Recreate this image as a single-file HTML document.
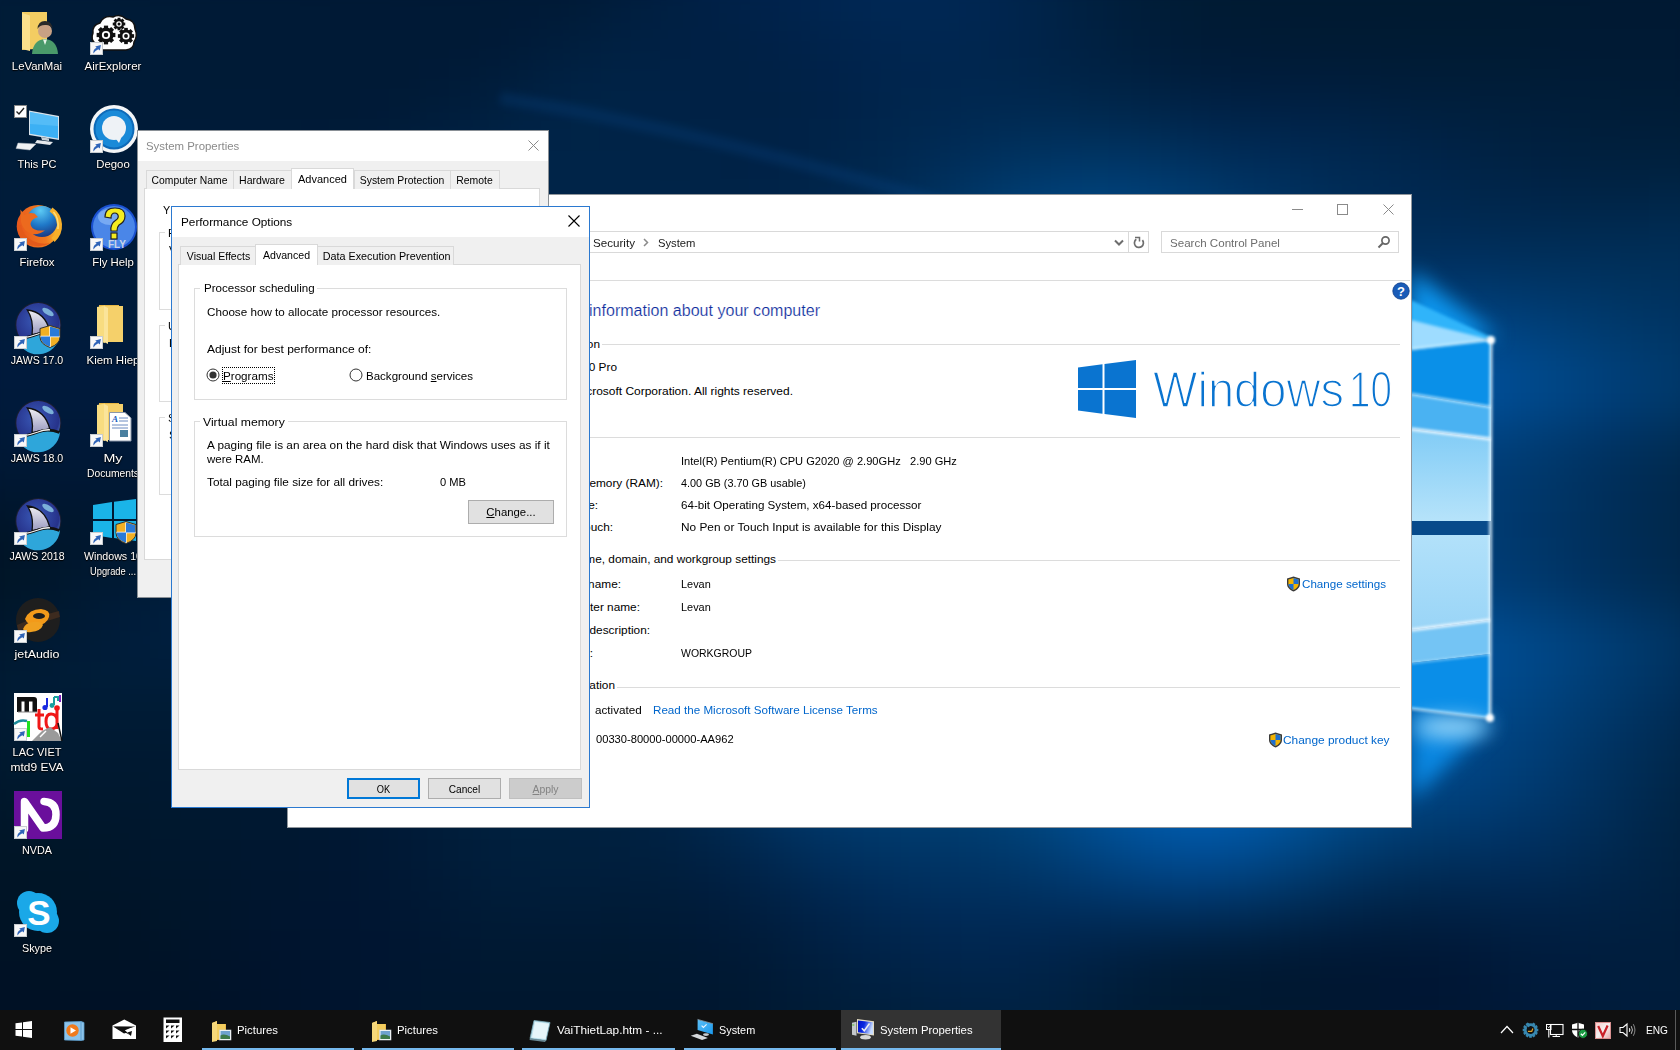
<!DOCTYPE html>
<html><head><meta charset="utf-8">
<style>
*{margin:0;padding:0;box-sizing:border-box}
html,body{width:1680px;height:1050px;overflow:hidden;background:#021a3a;font-family:"Liberation Sans",sans-serif;font-size:11.6px;color:#000}
.a{position:absolute}
.t{position:absolute;white-space:nowrap;line-height:1}
svg{position:absolute;overflow:visible}
#wall{left:0;top:0}
.lbl{position:absolute;white-space:nowrap;line-height:1;color:#fff;text-align:center;width:80px;text-shadow:0 0 2px #000,0 1px 2px #000}
</style></head>
<body>
<svg id="wall" width="1680" height="1050" viewBox="0 0 1680 1050" style="overflow:hidden">
<defs>
<filter id="wb" filterUnits="userSpaceOnUse" x="0" y="0" width="1680" height="1050"><feGaussianBlur stdDeviation="16" color-interpolation-filters="sRGB"/></filter>
<linearGradient id="pane1" x1="0" y1="0" x2="0" y2="1">
<stop offset="0" stop-color="#0a86e0"/>
<stop offset="0.3" stop-color="#0e8ee6"/>
<stop offset="0.31" stop-color="#48acf0"/>
<stop offset="0.5" stop-color="#5ab8f2"/>
<stop offset="0.51" stop-color="#8ccff6"/>
<stop offset="1" stop-color="#b2e0fa"/>
</linearGradient>
<linearGradient id="pane2" x1="0" y1="0" x2="0" y2="1">
<stop offset="0" stop-color="#aadcf8"/>
<stop offset="0.5" stop-color="#94d2f6"/>
<stop offset="0.51" stop-color="#70c2f4"/>
<stop offset="0.7" stop-color="#5ab6f0"/>
<stop offset="0.71" stop-color="#0c8ae6"/>
<stop offset="1" stop-color="#0a86e2"/>
</linearGradient>
<filter id="blur30" filterUnits="userSpaceOnUse" x="0" y="0" width="1680" height="1050"><feGaussianBlur stdDeviation="30" color-interpolation-filters="sRGB"/></filter>
<filter id="blur10" filterUnits="userSpaceOnUse" x="0" y="0" width="1680" height="1050"><feGaussianBlur stdDeviation="10" color-interpolation-filters="sRGB"/></filter>
<filter id="blur4" filterUnits="userSpaceOnUse" x="0" y="0" width="1680" height="1050"><feGaussianBlur stdDeviation="4" color-interpolation-filters="sRGB"/></filter>
<filter id="blur2" filterUnits="userSpaceOnUse" x="0" y="0" width="1680" height="1050"><feGaussianBlur stdDeviation="1.5" color-interpolation-filters="sRGB"/></filter>
</defs>
<g filter="url(#wb)"><rect x="-30" y="-30" width="31" height="31" fill="#001c37"/><rect x="0" y="-30" width="31" height="31" fill="#001b37"/><rect x="30" y="-30" width="31" height="31" fill="#001b37"/><rect x="60" y="-30" width="31" height="31" fill="#001b37"/><rect x="90" y="-30" width="31" height="31" fill="#001b37"/><rect x="120" y="-30" width="31" height="31" fill="#001b36"/><rect x="150" y="-30" width="31" height="31" fill="#001a36"/><rect x="180" y="-30" width="31" height="31" fill="#001a36"/><rect x="210" y="-30" width="31" height="31" fill="#001a36"/><rect x="240" y="-30" width="31" height="31" fill="#001a36"/><rect x="270" y="-30" width="31" height="31" fill="#001a36"/><rect x="300" y="-30" width="31" height="31" fill="#001935"/><rect x="330" y="-30" width="31" height="31" fill="#001935"/><rect x="360" y="-30" width="31" height="31" fill="#001935"/><rect x="390" y="-30" width="31" height="31" fill="#001935"/><rect x="420" y="-30" width="31" height="31" fill="#001935"/><rect x="450" y="-30" width="31" height="31" fill="#001936"/><rect x="480" y="-30" width="31" height="31" fill="#001a36"/><rect x="510" y="-30" width="31" height="31" fill="#001a36"/><rect x="540" y="-30" width="31" height="31" fill="#001a36"/><rect x="570" y="-30" width="31" height="31" fill="#001b38"/><rect x="600" y="-30" width="31" height="31" fill="#001c3a"/><rect x="630" y="-30" width="31" height="31" fill="#001d3e"/><rect x="660" y="-30" width="31" height="31" fill="#001f43"/><rect x="690" y="-30" width="31" height="31" fill="#002147"/><rect x="720" y="-30" width="31" height="31" fill="#00224a"/><rect x="750" y="-30" width="31" height="31" fill="#00244d"/><rect x="780" y="-30" width="31" height="31" fill="#002550"/><rect x="810" y="-30" width="31" height="31" fill="#002653"/><rect x="840" y="-30" width="31" height="31" fill="#002755"/><rect x="870" y="-30" width="31" height="31" fill="#002856"/><rect x="900" y="-30" width="31" height="31" fill="#002856"/><rect x="930" y="-30" width="31" height="31" fill="#002855"/><rect x="960" y="-30" width="31" height="31" fill="#002752"/><rect x="990" y="-30" width="31" height="31" fill="#00264f"/><rect x="1020" y="-30" width="31" height="31" fill="#00244a"/><rect x="1050" y="-30" width="31" height="31" fill="#002244"/><rect x="1080" y="-30" width="31" height="31" fill="#00203f"/><rect x="1110" y="-30" width="31" height="31" fill="#001e3b"/><rect x="1140" y="-30" width="31" height="31" fill="#001d37"/><rect x="1170" y="-30" width="31" height="31" fill="#001c35"/><rect x="1200" y="-30" width="31" height="31" fill="#001c33"/><rect x="1230" y="-30" width="31" height="31" fill="#001b32"/><rect x="1260" y="-30" width="31" height="31" fill="#001b32"/><rect x="1290" y="-30" width="31" height="31" fill="#001b31"/><rect x="1320" y="-30" width="31" height="31" fill="#001b31"/><rect x="1350" y="-30" width="31" height="31" fill="#001a31"/><rect x="1380" y="-30" width="31" height="31" fill="#001a30"/><rect x="1410" y="-30" width="31" height="31" fill="#001a30"/><rect x="1440" y="-30" width="31" height="31" fill="#001a30"/><rect x="1470" y="-30" width="31" height="31" fill="#001a31"/><rect x="1500" y="-30" width="31" height="31" fill="#001a31"/><rect x="1530" y="-30" width="31" height="31" fill="#001932"/><rect x="1560" y="-30" width="31" height="31" fill="#001932"/><rect x="1590" y="-30" width="31" height="31" fill="#001933"/><rect x="1620" y="-30" width="31" height="31" fill="#001933"/><rect x="1650" y="-30" width="31" height="31" fill="#001933"/><rect x="1680" y="-30" width="31" height="31" fill="#001933"/><rect x="-30" y="0" width="31" height="31" fill="#001c37"/><rect x="0" y="0" width="31" height="31" fill="#001c37"/><rect x="30" y="0" width="31" height="31" fill="#001b37"/><rect x="60" y="0" width="31" height="31" fill="#001b37"/><rect x="90" y="0" width="31" height="31" fill="#001b37"/><rect x="120" y="0" width="31" height="31" fill="#001b37"/><rect x="150" y="0" width="31" height="31" fill="#001b36"/><rect x="180" y="0" width="31" height="31" fill="#001a36"/><rect x="210" y="0" width="31" height="31" fill="#001a36"/><rect x="240" y="0" width="31" height="31" fill="#001a36"/><rect x="270" y="0" width="31" height="31" fill="#001a36"/><rect x="300" y="0" width="31" height="31" fill="#001a36"/><rect x="330" y="0" width="31" height="31" fill="#001935"/><rect x="360" y="0" width="31" height="31" fill="#001935"/><rect x="390" y="0" width="31" height="31" fill="#001936"/><rect x="420" y="0" width="31" height="31" fill="#001a36"/><rect x="450" y="0" width="31" height="31" fill="#001a36"/><rect x="480" y="0" width="31" height="31" fill="#001a36"/><rect x="510" y="0" width="31" height="31" fill="#001a37"/><rect x="540" y="0" width="31" height="31" fill="#001b38"/><rect x="570" y="0" width="31" height="31" fill="#001c3a"/><rect x="600" y="0" width="31" height="31" fill="#001e3e"/><rect x="630" y="0" width="31" height="31" fill="#001f41"/><rect x="660" y="0" width="31" height="31" fill="#002043"/><rect x="690" y="0" width="31" height="31" fill="#002045"/><rect x="720" y="0" width="31" height="31" fill="#002147"/><rect x="750" y="0" width="31" height="31" fill="#00224a"/><rect x="780" y="0" width="31" height="31" fill="#00234c"/><rect x="810" y="0" width="31" height="31" fill="#00254f"/><rect x="840" y="0" width="31" height="31" fill="#002651"/><rect x="870" y="0" width="31" height="31" fill="#002753"/><rect x="900" y="0" width="31" height="31" fill="#002753"/><rect x="930" y="0" width="31" height="31" fill="#002753"/><rect x="960" y="0" width="31" height="31" fill="#002651"/><rect x="990" y="0" width="31" height="31" fill="#00254e"/><rect x="1020" y="0" width="31" height="31" fill="#00244a"/><rect x="1050" y="0" width="31" height="31" fill="#002245"/><rect x="1080" y="0" width="31" height="31" fill="#002040"/><rect x="1110" y="0" width="31" height="31" fill="#001e3c"/><rect x="1140" y="0" width="31" height="31" fill="#001d39"/><rect x="1170" y="0" width="31" height="31" fill="#001c36"/><rect x="1200" y="0" width="31" height="31" fill="#001b34"/><rect x="1230" y="0" width="31" height="31" fill="#001b33"/><rect x="1260" y="0" width="31" height="31" fill="#001a33"/><rect x="1290" y="0" width="31" height="31" fill="#001a32"/><rect x="1320" y="0" width="31" height="31" fill="#001a32"/><rect x="1350" y="0" width="31" height="31" fill="#001a32"/><rect x="1380" y="0" width="31" height="31" fill="#001a31"/><rect x="1410" y="0" width="31" height="31" fill="#001a31"/><rect x="1440" y="0" width="31" height="31" fill="#001a31"/><rect x="1470" y="0" width="31" height="31" fill="#001a31"/><rect x="1500" y="0" width="31" height="31" fill="#001a32"/><rect x="1530" y="0" width="31" height="31" fill="#001a32"/><rect x="1560" y="0" width="31" height="31" fill="#001a33"/><rect x="1590" y="0" width="31" height="31" fill="#001933"/><rect x="1620" y="0" width="31" height="31" fill="#001933"/><rect x="1650" y="0" width="31" height="31" fill="#001933"/><rect x="1680" y="0" width="31" height="31" fill="#001933"/><rect x="-30" y="30" width="31" height="31" fill="#001c37"/><rect x="0" y="30" width="31" height="31" fill="#001c37"/><rect x="30" y="30" width="31" height="31" fill="#001b37"/><rect x="60" y="30" width="31" height="31" fill="#001b37"/><rect x="90" y="30" width="31" height="31" fill="#001b37"/><rect x="120" y="30" width="31" height="31" fill="#001b37"/><rect x="150" y="30" width="31" height="31" fill="#001b37"/><rect x="180" y="30" width="31" height="31" fill="#001b36"/><rect x="210" y="30" width="31" height="31" fill="#001a36"/><rect x="240" y="30" width="31" height="31" fill="#001a36"/><rect x="270" y="30" width="31" height="31" fill="#001a36"/><rect x="300" y="30" width="31" height="31" fill="#001a36"/><rect x="330" y="30" width="31" height="31" fill="#001a36"/><rect x="360" y="30" width="31" height="31" fill="#001a36"/><rect x="390" y="30" width="31" height="31" fill="#001a36"/><rect x="420" y="30" width="31" height="31" fill="#001a36"/><rect x="450" y="30" width="31" height="31" fill="#001a36"/><rect x="480" y="30" width="31" height="31" fill="#001a37"/><rect x="510" y="30" width="31" height="31" fill="#001b39"/><rect x="540" y="30" width="31" height="31" fill="#001d3c"/><rect x="570" y="30" width="31" height="31" fill="#001f3f"/><rect x="600" y="30" width="31" height="31" fill="#002042"/><rect x="630" y="30" width="31" height="31" fill="#002043"/><rect x="660" y="30" width="31" height="31" fill="#002044"/><rect x="690" y="30" width="31" height="31" fill="#002045"/><rect x="720" y="30" width="31" height="31" fill="#002145"/><rect x="750" y="30" width="31" height="31" fill="#002147"/><rect x="780" y="30" width="31" height="31" fill="#002249"/><rect x="810" y="30" width="31" height="31" fill="#00234b"/><rect x="840" y="30" width="31" height="31" fill="#00244e"/><rect x="870" y="30" width="31" height="31" fill="#00254f"/><rect x="900" y="30" width="31" height="31" fill="#002650"/><rect x="930" y="30" width="31" height="31" fill="#002650"/><rect x="960" y="30" width="31" height="31" fill="#00264f"/><rect x="990" y="30" width="31" height="31" fill="#00254d"/><rect x="1020" y="30" width="31" height="31" fill="#00244a"/><rect x="1050" y="30" width="31" height="31" fill="#002246"/><rect x="1080" y="30" width="31" height="31" fill="#002142"/><rect x="1110" y="30" width="31" height="31" fill="#001f3e"/><rect x="1140" y="30" width="31" height="31" fill="#001d3b"/><rect x="1170" y="30" width="31" height="31" fill="#001c38"/><rect x="1200" y="30" width="31" height="31" fill="#001b37"/><rect x="1230" y="30" width="31" height="31" fill="#001b36"/><rect x="1260" y="30" width="31" height="31" fill="#001b35"/><rect x="1290" y="30" width="31" height="31" fill="#001b35"/><rect x="1320" y="30" width="31" height="31" fill="#001b34"/><rect x="1350" y="30" width="31" height="31" fill="#001b34"/><rect x="1380" y="30" width="31" height="31" fill="#001b34"/><rect x="1410" y="30" width="31" height="31" fill="#001b33"/><rect x="1440" y="30" width="31" height="31" fill="#001b33"/><rect x="1470" y="30" width="31" height="31" fill="#001b33"/><rect x="1500" y="30" width="31" height="31" fill="#001b33"/><rect x="1530" y="30" width="31" height="31" fill="#001a33"/><rect x="1560" y="30" width="31" height="31" fill="#001a34"/><rect x="1590" y="30" width="31" height="31" fill="#001a34"/><rect x="1620" y="30" width="31" height="31" fill="#001a34"/><rect x="1650" y="30" width="31" height="31" fill="#001a34"/><rect x="1680" y="30" width="31" height="31" fill="#001934"/><rect x="-30" y="60" width="31" height="31" fill="#001c37"/><rect x="0" y="60" width="31" height="31" fill="#001c37"/><rect x="30" y="60" width="31" height="31" fill="#001c37"/><rect x="60" y="60" width="31" height="31" fill="#001b37"/><rect x="90" y="60" width="31" height="31" fill="#001b37"/><rect x="120" y="60" width="31" height="31" fill="#001b37"/><rect x="150" y="60" width="31" height="31" fill="#001b37"/><rect x="180" y="60" width="31" height="31" fill="#001b37"/><rect x="210" y="60" width="31" height="31" fill="#001b36"/><rect x="240" y="60" width="31" height="31" fill="#001a36"/><rect x="270" y="60" width="31" height="31" fill="#001a36"/><rect x="300" y="60" width="31" height="31" fill="#001a36"/><rect x="330" y="60" width="31" height="31" fill="#001a36"/><rect x="360" y="60" width="31" height="31" fill="#001a36"/><rect x="390" y="60" width="31" height="31" fill="#001a36"/><rect x="420" y="60" width="31" height="31" fill="#001a37"/><rect x="450" y="60" width="31" height="31" fill="#001b38"/><rect x="480" y="60" width="31" height="31" fill="#001c3a"/><rect x="510" y="60" width="31" height="31" fill="#001e3d"/><rect x="540" y="60" width="31" height="31" fill="#002041"/><rect x="570" y="60" width="31" height="31" fill="#002143"/><rect x="600" y="60" width="31" height="31" fill="#002245"/><rect x="630" y="60" width="31" height="31" fill="#002245"/><rect x="660" y="60" width="31" height="31" fill="#002145"/><rect x="690" y="60" width="31" height="31" fill="#002145"/><rect x="720" y="60" width="31" height="31" fill="#002145"/><rect x="750" y="60" width="31" height="31" fill="#002146"/><rect x="780" y="60" width="31" height="31" fill="#002247"/><rect x="810" y="60" width="31" height="31" fill="#002249"/><rect x="840" y="60" width="31" height="31" fill="#00234b"/><rect x="870" y="60" width="31" height="31" fill="#00254d"/><rect x="900" y="60" width="31" height="31" fill="#00254e"/><rect x="930" y="60" width="31" height="31" fill="#00264f"/><rect x="960" y="60" width="31" height="31" fill="#00264f"/><rect x="990" y="60" width="31" height="31" fill="#00264d"/><rect x="1020" y="60" width="31" height="31" fill="#00254b"/><rect x="1050" y="60" width="31" height="31" fill="#002448"/><rect x="1080" y="60" width="31" height="31" fill="#002245"/><rect x="1110" y="60" width="31" height="31" fill="#002142"/><rect x="1140" y="60" width="31" height="31" fill="#001f3f"/><rect x="1170" y="60" width="31" height="31" fill="#001e3d"/><rect x="1200" y="60" width="31" height="31" fill="#001d3c"/><rect x="1230" y="60" width="31" height="31" fill="#001c3b"/><rect x="1260" y="60" width="31" height="31" fill="#001c3b"/><rect x="1290" y="60" width="31" height="31" fill="#001c3a"/><rect x="1320" y="60" width="31" height="31" fill="#001c3a"/><rect x="1350" y="60" width="31" height="31" fill="#001c39"/><rect x="1380" y="60" width="31" height="31" fill="#001c38"/><rect x="1410" y="60" width="31" height="31" fill="#001c38"/><rect x="1440" y="60" width="31" height="31" fill="#001c37"/><rect x="1470" y="60" width="31" height="31" fill="#001c37"/><rect x="1500" y="60" width="31" height="31" fill="#001c36"/><rect x="1530" y="60" width="31" height="31" fill="#001c36"/><rect x="1560" y="60" width="31" height="31" fill="#001b36"/><rect x="1590" y="60" width="31" height="31" fill="#001b35"/><rect x="1620" y="60" width="31" height="31" fill="#001b35"/><rect x="1650" y="60" width="31" height="31" fill="#001b35"/><rect x="1680" y="60" width="31" height="31" fill="#001a35"/><rect x="-30" y="90" width="31" height="31" fill="#001c38"/><rect x="0" y="90" width="31" height="31" fill="#001c38"/><rect x="30" y="90" width="31" height="31" fill="#001c38"/><rect x="60" y="90" width="31" height="31" fill="#001c38"/><rect x="90" y="90" width="31" height="31" fill="#001b38"/><rect x="120" y="90" width="31" height="31" fill="#001b38"/><rect x="150" y="90" width="31" height="31" fill="#001b38"/><rect x="180" y="90" width="31" height="31" fill="#001b37"/><rect x="210" y="90" width="31" height="31" fill="#001b37"/><rect x="240" y="90" width="31" height="31" fill="#001b37"/><rect x="270" y="90" width="31" height="31" fill="#001a36"/><rect x="300" y="90" width="31" height="31" fill="#001a36"/><rect x="330" y="90" width="31" height="31" fill="#001a36"/><rect x="360" y="90" width="31" height="31" fill="#001a37"/><rect x="390" y="90" width="31" height="31" fill="#001b37"/><rect x="420" y="90" width="31" height="31" fill="#001c39"/><rect x="450" y="90" width="31" height="31" fill="#001d3c"/><rect x="480" y="90" width="31" height="31" fill="#001f3f"/><rect x="510" y="90" width="31" height="31" fill="#002143"/><rect x="540" y="90" width="31" height="31" fill="#002245"/><rect x="570" y="90" width="31" height="31" fill="#002346"/><rect x="600" y="90" width="31" height="31" fill="#002346"/><rect x="630" y="90" width="31" height="31" fill="#002246"/><rect x="660" y="90" width="31" height="31" fill="#002246"/><rect x="690" y="90" width="31" height="31" fill="#002145"/><rect x="720" y="90" width="31" height="31" fill="#002145"/><rect x="750" y="90" width="31" height="31" fill="#002145"/><rect x="780" y="90" width="31" height="31" fill="#002246"/><rect x="810" y="90" width="31" height="31" fill="#002248"/><rect x="840" y="90" width="31" height="31" fill="#00234a"/><rect x="870" y="90" width="31" height="31" fill="#00254c"/><rect x="900" y="90" width="31" height="31" fill="#00264e"/><rect x="930" y="90" width="31" height="31" fill="#00274f"/><rect x="960" y="90" width="31" height="31" fill="#002850"/><rect x="990" y="90" width="31" height="31" fill="#002850"/><rect x="1020" y="90" width="31" height="31" fill="#002850"/><rect x="1050" y="90" width="31" height="31" fill="#00284e"/><rect x="1080" y="90" width="31" height="31" fill="#00274c"/><rect x="1110" y="90" width="31" height="31" fill="#00264a"/><rect x="1140" y="90" width="31" height="31" fill="#002448"/><rect x="1170" y="90" width="31" height="31" fill="#002347"/><rect x="1200" y="90" width="31" height="31" fill="#002145"/><rect x="1230" y="90" width="31" height="31" fill="#002144"/><rect x="1260" y="90" width="31" height="31" fill="#002043"/><rect x="1290" y="90" width="31" height="31" fill="#002043"/><rect x="1320" y="90" width="31" height="31" fill="#002042"/><rect x="1350" y="90" width="31" height="31" fill="#002041"/><rect x="1380" y="90" width="31" height="31" fill="#001f3f"/><rect x="1410" y="90" width="31" height="31" fill="#001f3e"/><rect x="1440" y="90" width="31" height="31" fill="#001f3d"/><rect x="1470" y="90" width="31" height="31" fill="#001e3c"/><rect x="1500" y="90" width="31" height="31" fill="#001e3b"/><rect x="1530" y="90" width="31" height="31" fill="#001d3a"/><rect x="1560" y="90" width="31" height="31" fill="#001d39"/><rect x="1590" y="90" width="31" height="31" fill="#001d38"/><rect x="1620" y="90" width="31" height="31" fill="#001c37"/><rect x="1650" y="90" width="31" height="31" fill="#001c37"/><rect x="1680" y="90" width="31" height="31" fill="#001c36"/><rect x="-30" y="120" width="31" height="31" fill="#001c38"/><rect x="0" y="120" width="31" height="31" fill="#001c38"/><rect x="30" y="120" width="31" height="31" fill="#001c38"/><rect x="60" y="120" width="31" height="31" fill="#001c38"/><rect x="90" y="120" width="31" height="31" fill="#001b38"/><rect x="120" y="120" width="31" height="31" fill="#001b38"/><rect x="150" y="120" width="31" height="31" fill="#001b38"/><rect x="180" y="120" width="31" height="31" fill="#001b38"/><rect x="210" y="120" width="31" height="31" fill="#001b38"/><rect x="240" y="120" width="31" height="31" fill="#001b38"/><rect x="270" y="120" width="31" height="31" fill="#001b37"/><rect x="300" y="120" width="31" height="31" fill="#001a37"/><rect x="330" y="120" width="31" height="31" fill="#001b37"/><rect x="360" y="120" width="31" height="31" fill="#001b38"/><rect x="390" y="120" width="31" height="31" fill="#001c3b"/><rect x="420" y="120" width="31" height="31" fill="#001e3e"/><rect x="450" y="120" width="31" height="31" fill="#002041"/><rect x="480" y="120" width="31" height="31" fill="#002244"/><rect x="510" y="120" width="31" height="31" fill="#002346"/><rect x="540" y="120" width="31" height="31" fill="#002347"/><rect x="570" y="120" width="31" height="31" fill="#002447"/><rect x="600" y="120" width="31" height="31" fill="#002347"/><rect x="630" y="120" width="31" height="31" fill="#002347"/><rect x="660" y="120" width="31" height="31" fill="#002346"/><rect x="690" y="120" width="31" height="31" fill="#002246"/><rect x="720" y="120" width="31" height="31" fill="#002246"/><rect x="750" y="120" width="31" height="31" fill="#002246"/><rect x="780" y="120" width="31" height="31" fill="#002247"/><rect x="810" y="120" width="31" height="31" fill="#002348"/><rect x="840" y="120" width="31" height="31" fill="#00244a"/><rect x="870" y="120" width="31" height="31" fill="#00264d"/><rect x="900" y="120" width="31" height="31" fill="#002850"/><rect x="930" y="120" width="31" height="31" fill="#002952"/><rect x="960" y="120" width="31" height="31" fill="#002b55"/><rect x="990" y="120" width="31" height="31" fill="#002d57"/><rect x="1020" y="120" width="31" height="31" fill="#002e58"/><rect x="1050" y="120" width="31" height="31" fill="#002e59"/><rect x="1080" y="120" width="31" height="31" fill="#002e58"/><rect x="1110" y="120" width="31" height="31" fill="#002d57"/><rect x="1140" y="120" width="31" height="31" fill="#002c55"/><rect x="1170" y="120" width="31" height="31" fill="#002a53"/><rect x="1200" y="120" width="31" height="31" fill="#002851"/><rect x="1230" y="120" width="31" height="31" fill="#00274f"/><rect x="1260" y="120" width="31" height="31" fill="#00264e"/><rect x="1290" y="120" width="31" height="31" fill="#00254c"/><rect x="1320" y="120" width="31" height="31" fill="#00254b"/><rect x="1350" y="120" width="31" height="31" fill="#002449"/><rect x="1380" y="120" width="31" height="31" fill="#002347"/><rect x="1410" y="120" width="31" height="31" fill="#002245"/><rect x="1440" y="120" width="31" height="31" fill="#002143"/><rect x="1470" y="120" width="31" height="31" fill="#002141"/><rect x="1500" y="120" width="31" height="31" fill="#00203f"/><rect x="1530" y="120" width="31" height="31" fill="#001f3e"/><rect x="1560" y="120" width="31" height="31" fill="#001f3c"/><rect x="1590" y="120" width="31" height="31" fill="#001e3b"/><rect x="1620" y="120" width="31" height="31" fill="#001e3b"/><rect x="1650" y="120" width="31" height="31" fill="#001e3a"/><rect x="1680" y="120" width="31" height="31" fill="#001e3a"/><rect x="-30" y="150" width="31" height="31" fill="#001c39"/><rect x="0" y="150" width="31" height="31" fill="#001c39"/><rect x="30" y="150" width="31" height="31" fill="#001c39"/><rect x="60" y="150" width="31" height="31" fill="#001c39"/><rect x="90" y="150" width="31" height="31" fill="#001b39"/><rect x="120" y="150" width="31" height="31" fill="#001b39"/><rect x="150" y="150" width="31" height="31" fill="#001b39"/><rect x="180" y="150" width="31" height="31" fill="#001b39"/><rect x="210" y="150" width="31" height="31" fill="#001b39"/><rect x="240" y="150" width="31" height="31" fill="#001b39"/><rect x="270" y="150" width="31" height="31" fill="#001b38"/><rect x="300" y="150" width="31" height="31" fill="#001b39"/><rect x="330" y="150" width="31" height="31" fill="#001c39"/><rect x="360" y="150" width="31" height="31" fill="#001d3c"/><rect x="390" y="150" width="31" height="31" fill="#001f3f"/><rect x="420" y="150" width="31" height="31" fill="#002143"/><rect x="450" y="150" width="31" height="31" fill="#002345"/><rect x="480" y="150" width="31" height="31" fill="#002347"/><rect x="510" y="150" width="31" height="31" fill="#002448"/><rect x="540" y="150" width="31" height="31" fill="#002448"/><rect x="570" y="150" width="31" height="31" fill="#002448"/><rect x="600" y="150" width="31" height="31" fill="#002448"/><rect x="630" y="150" width="31" height="31" fill="#002347"/><rect x="660" y="150" width="31" height="31" fill="#002347"/><rect x="690" y="150" width="31" height="31" fill="#002347"/><rect x="720" y="150" width="31" height="31" fill="#002246"/><rect x="750" y="150" width="31" height="31" fill="#002247"/><rect x="780" y="150" width="31" height="31" fill="#002348"/><rect x="810" y="150" width="31" height="31" fill="#002449"/><rect x="840" y="150" width="31" height="31" fill="#00264c"/><rect x="870" y="150" width="31" height="31" fill="#00284f"/><rect x="900" y="150" width="31" height="31" fill="#002a54"/><rect x="930" y="150" width="31" height="31" fill="#002d58"/><rect x="960" y="150" width="31" height="31" fill="#00305d"/><rect x="990" y="150" width="31" height="31" fill="#003361"/><rect x="1020" y="150" width="31" height="31" fill="#003564"/><rect x="1050" y="150" width="31" height="31" fill="#003667"/><rect x="1080" y="150" width="31" height="31" fill="#003767"/><rect x="1110" y="150" width="31" height="31" fill="#003667"/><rect x="1140" y="150" width="31" height="31" fill="#003565"/><rect x="1170" y="150" width="31" height="31" fill="#003362"/><rect x="1200" y="150" width="31" height="31" fill="#00305e"/><rect x="1230" y="150" width="31" height="31" fill="#002e5b"/><rect x="1260" y="150" width="31" height="31" fill="#002c58"/><rect x="1290" y="150" width="31" height="31" fill="#002b55"/><rect x="1320" y="150" width="31" height="31" fill="#002953"/><rect x="1350" y="150" width="31" height="31" fill="#002850"/><rect x="1380" y="150" width="31" height="31" fill="#00274e"/><rect x="1410" y="150" width="31" height="31" fill="#00254b"/><rect x="1440" y="150" width="31" height="31" fill="#002449"/><rect x="1470" y="150" width="31" height="31" fill="#002346"/><rect x="1500" y="150" width="31" height="31" fill="#002244"/><rect x="1530" y="150" width="31" height="31" fill="#002142"/><rect x="1560" y="150" width="31" height="31" fill="#002141"/><rect x="1590" y="150" width="31" height="31" fill="#002140"/><rect x="1620" y="150" width="31" height="31" fill="#00213f"/><rect x="1650" y="150" width="31" height="31" fill="#00213f"/><rect x="1680" y="150" width="31" height="31" fill="#00213f"/><rect x="-30" y="180" width="31" height="31" fill="#001c3a"/><rect x="0" y="180" width="31" height="31" fill="#001c3a"/><rect x="30" y="180" width="31" height="31" fill="#001c3a"/><rect x="60" y="180" width="31" height="31" fill="#001b3a"/><rect x="90" y="180" width="31" height="31" fill="#001b3a"/><rect x="120" y="180" width="31" height="31" fill="#001b3a"/><rect x="150" y="180" width="31" height="31" fill="#001b3a"/><rect x="180" y="180" width="31" height="31" fill="#001b3a"/><rect x="210" y="180" width="31" height="31" fill="#001b3a"/><rect x="240" y="180" width="31" height="31" fill="#001b39"/><rect x="270" y="180" width="31" height="31" fill="#001b3a"/><rect x="300" y="180" width="31" height="31" fill="#001c3a"/><rect x="330" y="180" width="31" height="31" fill="#001d3c"/><rect x="360" y="180" width="31" height="31" fill="#001f3f"/><rect x="390" y="180" width="31" height="31" fill="#002143"/><rect x="420" y="180" width="31" height="31" fill="#002346"/><rect x="450" y="180" width="31" height="31" fill="#002447"/><rect x="480" y="180" width="31" height="31" fill="#002448"/><rect x="510" y="180" width="31" height="31" fill="#002448"/><rect x="540" y="180" width="31" height="31" fill="#002448"/><rect x="570" y="180" width="31" height="31" fill="#002448"/><rect x="600" y="180" width="31" height="31" fill="#002448"/><rect x="630" y="180" width="31" height="31" fill="#002448"/><rect x="660" y="180" width="31" height="31" fill="#002448"/><rect x="690" y="180" width="31" height="31" fill="#002347"/><rect x="720" y="180" width="31" height="31" fill="#002347"/><rect x="750" y="180" width="31" height="31" fill="#002348"/><rect x="780" y="180" width="31" height="31" fill="#002449"/><rect x="810" y="180" width="31" height="31" fill="#00254b"/><rect x="840" y="180" width="31" height="31" fill="#00274f"/><rect x="870" y="180" width="31" height="31" fill="#002a53"/><rect x="900" y="180" width="31" height="31" fill="#002e59"/><rect x="930" y="180" width="31" height="31" fill="#00325f"/><rect x="960" y="180" width="31" height="31" fill="#003666"/><rect x="990" y="180" width="31" height="31" fill="#003a6c"/><rect x="1020" y="180" width="31" height="31" fill="#003d72"/><rect x="1050" y="180" width="31" height="31" fill="#003f75"/><rect x="1080" y="180" width="31" height="31" fill="#004077"/><rect x="1110" y="180" width="31" height="31" fill="#003f76"/><rect x="1140" y="180" width="31" height="31" fill="#003d73"/><rect x="1170" y="180" width="31" height="31" fill="#003b6f"/><rect x="1200" y="180" width="31" height="31" fill="#00386a"/><rect x="1230" y="180" width="31" height="31" fill="#003465"/><rect x="1260" y="180" width="31" height="31" fill="#003260"/><rect x="1290" y="180" width="31" height="31" fill="#002f5c"/><rect x="1320" y="180" width="31" height="31" fill="#002d58"/><rect x="1350" y="180" width="31" height="31" fill="#002b55"/><rect x="1380" y="180" width="31" height="31" fill="#002952"/><rect x="1410" y="180" width="31" height="31" fill="#002850"/><rect x="1440" y="180" width="31" height="31" fill="#00274d"/><rect x="1470" y="180" width="31" height="31" fill="#00264b"/><rect x="1500" y="180" width="31" height="31" fill="#00254a"/><rect x="1530" y="180" width="31" height="31" fill="#002448"/><rect x="1560" y="180" width="31" height="31" fill="#002447"/><rect x="1590" y="180" width="31" height="31" fill="#002446"/><rect x="1620" y="180" width="31" height="31" fill="#002446"/><rect x="1650" y="180" width="31" height="31" fill="#002547"/><rect x="1680" y="180" width="31" height="31" fill="#002648"/><rect x="-30" y="210" width="31" height="31" fill="#001b3a"/><rect x="0" y="210" width="31" height="31" fill="#001b3a"/><rect x="30" y="210" width="31" height="31" fill="#001b3a"/><rect x="60" y="210" width="31" height="31" fill="#001b3a"/><rect x="90" y="210" width="31" height="31" fill="#001b3a"/><rect x="120" y="210" width="31" height="31" fill="#001b3a"/><rect x="150" y="210" width="31" height="31" fill="#001b3a"/><rect x="180" y="210" width="31" height="31" fill="#001b3a"/><rect x="210" y="210" width="31" height="31" fill="#001b3a"/><rect x="240" y="210" width="31" height="31" fill="#001c3a"/><rect x="270" y="210" width="31" height="31" fill="#001c3a"/><rect x="300" y="210" width="31" height="31" fill="#001c3b"/><rect x="330" y="210" width="31" height="31" fill="#001d3d"/><rect x="360" y="210" width="31" height="31" fill="#002041"/><rect x="390" y="210" width="31" height="31" fill="#002245"/><rect x="420" y="210" width="31" height="31" fill="#002447"/><rect x="450" y="210" width="31" height="31" fill="#002448"/><rect x="480" y="210" width="31" height="31" fill="#002448"/><rect x="510" y="210" width="31" height="31" fill="#002448"/><rect x="540" y="210" width="31" height="31" fill="#002448"/><rect x="570" y="210" width="31" height="31" fill="#002448"/><rect x="600" y="210" width="31" height="31" fill="#002448"/><rect x="630" y="210" width="31" height="31" fill="#002448"/><rect x="660" y="210" width="31" height="31" fill="#002448"/><rect x="690" y="210" width="31" height="31" fill="#002448"/><rect x="720" y="210" width="31" height="31" fill="#002448"/><rect x="750" y="210" width="31" height="31" fill="#002449"/><rect x="780" y="210" width="31" height="31" fill="#00254a"/><rect x="810" y="210" width="31" height="31" fill="#00274d"/><rect x="840" y="210" width="31" height="31" fill="#002952"/><rect x="870" y="210" width="31" height="31" fill="#002d58"/><rect x="900" y="210" width="31" height="31" fill="#003260"/><rect x="930" y="210" width="31" height="31" fill="#003768"/><rect x="960" y="210" width="31" height="31" fill="#003c70"/><rect x="990" y="210" width="31" height="31" fill="#004078"/><rect x="1020" y="210" width="31" height="31" fill="#00447e"/><rect x="1050" y="210" width="31" height="31" fill="#004783"/><rect x="1080" y="210" width="31" height="31" fill="#004884"/><rect x="1110" y="210" width="31" height="31" fill="#004783"/><rect x="1140" y="210" width="31" height="31" fill="#00457f"/><rect x="1170" y="210" width="31" height="31" fill="#00417a"/><rect x="1200" y="210" width="31" height="31" fill="#003d73"/><rect x="1230" y="210" width="31" height="31" fill="#00396c"/><rect x="1260" y="210" width="31" height="31" fill="#003565"/><rect x="1290" y="210" width="31" height="31" fill="#003260"/><rect x="1320" y="210" width="31" height="31" fill="#002f5c"/><rect x="1350" y="210" width="31" height="31" fill="#002d59"/><rect x="1380" y="210" width="31" height="31" fill="#002c57"/><rect x="1410" y="210" width="31" height="31" fill="#002b55"/><rect x="1440" y="210" width="31" height="31" fill="#002a54"/><rect x="1470" y="210" width="31" height="31" fill="#002a52"/><rect x="1500" y="210" width="31" height="31" fill="#002951"/><rect x="1530" y="210" width="31" height="31" fill="#002950"/><rect x="1560" y="210" width="31" height="31" fill="#00294f"/><rect x="1590" y="210" width="31" height="31" fill="#00294f"/><rect x="1620" y="210" width="31" height="31" fill="#00294f"/><rect x="1650" y="210" width="31" height="31" fill="#002a50"/><rect x="1680" y="210" width="31" height="31" fill="#002b51"/><rect x="-30" y="240" width="31" height="31" fill="#001b3a"/><rect x="0" y="240" width="31" height="31" fill="#001b3a"/><rect x="30" y="240" width="31" height="31" fill="#001b3a"/><rect x="60" y="240" width="31" height="31" fill="#001b3a"/><rect x="90" y="240" width="31" height="31" fill="#001b3a"/><rect x="120" y="240" width="31" height="31" fill="#001b3a"/><rect x="150" y="240" width="31" height="31" fill="#001b3a"/><rect x="180" y="240" width="31" height="31" fill="#001b3a"/><rect x="210" y="240" width="31" height="31" fill="#001b3a"/><rect x="240" y="240" width="31" height="31" fill="#001c3a"/><rect x="270" y="240" width="31" height="31" fill="#001c3a"/><rect x="300" y="240" width="31" height="31" fill="#001c3b"/><rect x="330" y="240" width="31" height="31" fill="#001d3d"/><rect x="360" y="240" width="31" height="31" fill="#002041"/><rect x="390" y="240" width="31" height="31" fill="#002346"/><rect x="420" y="240" width="31" height="31" fill="#002448"/><rect x="450" y="240" width="31" height="31" fill="#002448"/><rect x="480" y="240" width="31" height="31" fill="#002448"/><rect x="510" y="240" width="31" height="31" fill="#002449"/><rect x="540" y="240" width="31" height="31" fill="#002449"/><rect x="570" y="240" width="31" height="31" fill="#002448"/><rect x="600" y="240" width="31" height="31" fill="#002448"/><rect x="630" y="240" width="31" height="31" fill="#002448"/><rect x="660" y="240" width="31" height="31" fill="#002448"/><rect x="690" y="240" width="31" height="31" fill="#002448"/><rect x="720" y="240" width="31" height="31" fill="#002449"/><rect x="750" y="240" width="31" height="31" fill="#002549"/><rect x="780" y="240" width="31" height="31" fill="#00264c"/><rect x="810" y="240" width="31" height="31" fill="#002850"/><rect x="840" y="240" width="31" height="31" fill="#002c56"/><rect x="870" y="240" width="31" height="31" fill="#00315e"/><rect x="900" y="240" width="31" height="31" fill="#003667"/><rect x="930" y="240" width="31" height="31" fill="#003c71"/><rect x="960" y="240" width="31" height="31" fill="#00427a"/><rect x="990" y="240" width="31" height="31" fill="#004783"/><rect x="1020" y="240" width="31" height="31" fill="#004b89"/><rect x="1050" y="240" width="31" height="31" fill="#004d8e"/><rect x="1080" y="240" width="31" height="31" fill="#004e8f"/><rect x="1110" y="240" width="31" height="31" fill="#004d8d"/><rect x="1140" y="240" width="31" height="31" fill="#004a88"/><rect x="1170" y="240" width="31" height="31" fill="#004680"/><rect x="1200" y="240" width="31" height="31" fill="#004078"/><rect x="1230" y="240" width="31" height="31" fill="#003b6f"/><rect x="1260" y="240" width="31" height="31" fill="#003768"/><rect x="1290" y="240" width="31" height="31" fill="#003463"/><rect x="1320" y="240" width="31" height="31" fill="#003260"/><rect x="1350" y="240" width="31" height="31" fill="#00305f"/><rect x="1380" y="240" width="31" height="31" fill="#00305e"/><rect x="1410" y="240" width="31" height="31" fill="#00305e"/><rect x="1440" y="240" width="31" height="31" fill="#002f5d"/><rect x="1470" y="240" width="31" height="31" fill="#002f5d"/><rect x="1500" y="240" width="31" height="31" fill="#002f5b"/><rect x="1530" y="240" width="31" height="31" fill="#002f5a"/><rect x="1560" y="240" width="31" height="31" fill="#002e59"/><rect x="1590" y="240" width="31" height="31" fill="#002e58"/><rect x="1620" y="240" width="31" height="31" fill="#002e57"/><rect x="1650" y="240" width="31" height="31" fill="#002e57"/><rect x="1680" y="240" width="31" height="31" fill="#002e58"/><rect x="-30" y="270" width="31" height="31" fill="#001b3a"/><rect x="0" y="270" width="31" height="31" fill="#001b3a"/><rect x="30" y="270" width="31" height="31" fill="#001b3a"/><rect x="60" y="270" width="31" height="31" fill="#001b3a"/><rect x="90" y="270" width="31" height="31" fill="#001b3a"/><rect x="120" y="270" width="31" height="31" fill="#001b3a"/><rect x="150" y="270" width="31" height="31" fill="#001b3a"/><rect x="180" y="270" width="31" height="31" fill="#001b3a"/><rect x="210" y="270" width="31" height="31" fill="#001b3a"/><rect x="240" y="270" width="31" height="31" fill="#001c3a"/><rect x="270" y="270" width="31" height="31" fill="#001c3a"/><rect x="300" y="270" width="31" height="31" fill="#001c3b"/><rect x="330" y="270" width="31" height="31" fill="#001d3d"/><rect x="360" y="270" width="31" height="31" fill="#002041"/><rect x="390" y="270" width="31" height="31" fill="#002346"/><rect x="420" y="270" width="31" height="31" fill="#002448"/><rect x="450" y="270" width="31" height="31" fill="#002448"/><rect x="480" y="270" width="31" height="31" fill="#002449"/><rect x="510" y="270" width="31" height="31" fill="#002449"/><rect x="540" y="270" width="31" height="31" fill="#002449"/><rect x="570" y="270" width="31" height="31" fill="#002449"/><rect x="600" y="270" width="31" height="31" fill="#002448"/><rect x="630" y="270" width="31" height="31" fill="#002448"/><rect x="660" y="270" width="31" height="31" fill="#002448"/><rect x="690" y="270" width="31" height="31" fill="#002449"/><rect x="720" y="270" width="31" height="31" fill="#002449"/><rect x="750" y="270" width="31" height="31" fill="#00254a"/><rect x="780" y="270" width="31" height="31" fill="#00274d"/><rect x="810" y="270" width="31" height="31" fill="#002a52"/><rect x="840" y="270" width="31" height="31" fill="#002e5a"/><rect x="870" y="270" width="31" height="31" fill="#003464"/><rect x="900" y="270" width="31" height="31" fill="#003b6f"/><rect x="930" y="270" width="31" height="31" fill="#004179"/><rect x="960" y="270" width="31" height="31" fill="#004784"/><rect x="990" y="270" width="31" height="31" fill="#004c8c"/><rect x="1020" y="270" width="31" height="31" fill="#005092"/><rect x="1050" y="270" width="31" height="31" fill="#005296"/><rect x="1080" y="270" width="31" height="31" fill="#005297"/><rect x="1110" y="270" width="31" height="31" fill="#005194"/><rect x="1140" y="270" width="31" height="31" fill="#004d8d"/><rect x="1170" y="270" width="31" height="31" fill="#004884"/><rect x="1200" y="270" width="31" height="31" fill="#00427a"/><rect x="1230" y="270" width="31" height="31" fill="#003c72"/><rect x="1260" y="270" width="31" height="31" fill="#00396c"/><rect x="1290" y="270" width="31" height="31" fill="#00376a"/><rect x="1320" y="270" width="31" height="31" fill="#003669"/><rect x="1350" y="270" width="31" height="31" fill="#00366a"/><rect x="1380" y="270" width="31" height="31" fill="#00376b"/><rect x="1410" y="270" width="31" height="31" fill="#00376c"/><rect x="1440" y="270" width="31" height="31" fill="#00376c"/><rect x="1470" y="270" width="31" height="31" fill="#00376a"/><rect x="1500" y="270" width="31" height="31" fill="#003668"/><rect x="1530" y="270" width="31" height="31" fill="#003566"/><rect x="1560" y="270" width="31" height="31" fill="#003463"/><rect x="1590" y="270" width="31" height="31" fill="#003360"/><rect x="1620" y="270" width="31" height="31" fill="#00325e"/><rect x="1650" y="270" width="31" height="31" fill="#00315d"/><rect x="1680" y="270" width="31" height="31" fill="#00315c"/><rect x="-30" y="300" width="31" height="31" fill="#001b3a"/><rect x="0" y="300" width="31" height="31" fill="#001b3a"/><rect x="30" y="300" width="31" height="31" fill="#001b3a"/><rect x="60" y="300" width="31" height="31" fill="#001b3a"/><rect x="90" y="300" width="31" height="31" fill="#001b3a"/><rect x="120" y="300" width="31" height="31" fill="#001b3a"/><rect x="150" y="300" width="31" height="31" fill="#001b3a"/><rect x="180" y="300" width="31" height="31" fill="#001b3a"/><rect x="210" y="300" width="31" height="31" fill="#001b3a"/><rect x="240" y="300" width="31" height="31" fill="#001b3a"/><rect x="270" y="300" width="31" height="31" fill="#001b3b"/><rect x="300" y="300" width="31" height="31" fill="#001c3b"/><rect x="330" y="300" width="31" height="31" fill="#001d3d"/><rect x="360" y="300" width="31" height="31" fill="#001f41"/><rect x="390" y="300" width="31" height="31" fill="#002245"/><rect x="420" y="300" width="31" height="31" fill="#002448"/><rect x="450" y="300" width="31" height="31" fill="#002448"/><rect x="480" y="300" width="31" height="31" fill="#002449"/><rect x="510" y="300" width="31" height="31" fill="#002449"/><rect x="540" y="300" width="31" height="31" fill="#002449"/><rect x="570" y="300" width="31" height="31" fill="#002449"/><rect x="600" y="300" width="31" height="31" fill="#002449"/><rect x="630" y="300" width="31" height="31" fill="#002449"/><rect x="660" y="300" width="31" height="31" fill="#002449"/><rect x="690" y="300" width="31" height="31" fill="#002449"/><rect x="720" y="300" width="31" height="31" fill="#002549"/><rect x="750" y="300" width="31" height="31" fill="#00264b"/><rect x="780" y="300" width="31" height="31" fill="#00274e"/><rect x="810" y="300" width="31" height="31" fill="#002b55"/><rect x="840" y="300" width="31" height="31" fill="#00315e"/><rect x="870" y="300" width="31" height="31" fill="#00386a"/><rect x="900" y="300" width="31" height="31" fill="#003f76"/><rect x="930" y="300" width="31" height="31" fill="#004682"/><rect x="960" y="300" width="31" height="31" fill="#004c8c"/><rect x="990" y="300" width="31" height="31" fill="#005194"/><rect x="1020" y="300" width="31" height="31" fill="#00549a"/><rect x="1050" y="300" width="31" height="31" fill="#00569c"/><rect x="1080" y="300" width="31" height="31" fill="#00559b"/><rect x="1110" y="300" width="31" height="31" fill="#005397"/><rect x="1140" y="300" width="31" height="31" fill="#004e8f"/><rect x="1170" y="300" width="31" height="31" fill="#004885"/><rect x="1200" y="300" width="31" height="31" fill="#00427c"/><rect x="1230" y="300" width="31" height="31" fill="#003f77"/><rect x="1260" y="300" width="31" height="31" fill="#003d76"/><rect x="1290" y="300" width="31" height="31" fill="#003e77"/><rect x="1320" y="300" width="31" height="31" fill="#003f7a"/><rect x="1350" y="300" width="31" height="31" fill="#00407c"/><rect x="1380" y="300" width="31" height="31" fill="#00417e"/><rect x="1410" y="300" width="31" height="31" fill="#00417e"/><rect x="1440" y="300" width="31" height="31" fill="#00417d"/><rect x="1470" y="300" width="31" height="31" fill="#00407b"/><rect x="1500" y="300" width="31" height="31" fill="#003e77"/><rect x="1530" y="300" width="31" height="31" fill="#003c73"/><rect x="1560" y="300" width="31" height="31" fill="#003a6e"/><rect x="1590" y="300" width="31" height="31" fill="#00386a"/><rect x="1620" y="300" width="31" height="31" fill="#003666"/><rect x="1650" y="300" width="31" height="31" fill="#003463"/><rect x="1680" y="300" width="31" height="31" fill="#003361"/><rect x="-30" y="330" width="31" height="31" fill="#001b3c"/><rect x="0" y="330" width="31" height="31" fill="#001b3c"/><rect x="30" y="330" width="31" height="31" fill="#001b3c"/><rect x="60" y="330" width="31" height="31" fill="#001b3c"/><rect x="90" y="330" width="31" height="31" fill="#001b3c"/><rect x="120" y="330" width="31" height="31" fill="#001b3c"/><rect x="150" y="330" width="31" height="31" fill="#001b3c"/><rect x="180" y="330" width="31" height="31" fill="#001b3c"/><rect x="210" y="330" width="31" height="31" fill="#001b3c"/><rect x="240" y="330" width="31" height="31" fill="#001b3c"/><rect x="270" y="330" width="31" height="31" fill="#001b3c"/><rect x="300" y="330" width="31" height="31" fill="#001b3c"/><rect x="330" y="330" width="31" height="31" fill="#001b3d"/><rect x="360" y="330" width="31" height="31" fill="#001d3f"/><rect x="390" y="330" width="31" height="31" fill="#002043"/><rect x="420" y="330" width="31" height="31" fill="#002347"/><rect x="450" y="330" width="31" height="31" fill="#002448"/><rect x="480" y="330" width="31" height="31" fill="#002448"/><rect x="510" y="330" width="31" height="31" fill="#002449"/><rect x="540" y="330" width="31" height="31" fill="#002449"/><rect x="570" y="330" width="31" height="31" fill="#002449"/><rect x="600" y="330" width="31" height="31" fill="#002449"/><rect x="630" y="330" width="31" height="31" fill="#002449"/><rect x="660" y="330" width="31" height="31" fill="#002449"/><rect x="690" y="330" width="31" height="31" fill="#002449"/><rect x="720" y="330" width="31" height="31" fill="#00254a"/><rect x="750" y="330" width="31" height="31" fill="#00264b"/><rect x="780" y="330" width="31" height="31" fill="#00284f"/><rect x="810" y="330" width="31" height="31" fill="#002d57"/><rect x="840" y="330" width="31" height="31" fill="#003362"/><rect x="870" y="330" width="31" height="31" fill="#003c70"/><rect x="900" y="330" width="31" height="31" fill="#00447e"/><rect x="930" y="330" width="31" height="31" fill="#004b89"/><rect x="960" y="330" width="31" height="31" fill="#005093"/><rect x="990" y="330" width="31" height="31" fill="#00549a"/><rect x="1020" y="330" width="31" height="31" fill="#00579f"/><rect x="1050" y="330" width="31" height="31" fill="#0058a0"/><rect x="1080" y="330" width="31" height="31" fill="#00579e"/><rect x="1110" y="330" width="31" height="31" fill="#005399"/><rect x="1140" y="330" width="31" height="31" fill="#004e90"/><rect x="1170" y="330" width="31" height="31" fill="#004989"/><rect x="1200" y="330" width="31" height="31" fill="#004685"/><rect x="1230" y="330" width="31" height="31" fill="#004585"/><rect x="1260" y="330" width="31" height="31" fill="#004789"/><rect x="1290" y="330" width="31" height="31" fill="#00488d"/><rect x="1320" y="330" width="31" height="31" fill="#004a90"/><rect x="1350" y="330" width="31" height="31" fill="#004b92"/><rect x="1380" y="330" width="31" height="31" fill="#004c93"/><rect x="1410" y="330" width="31" height="31" fill="#004b92"/><rect x="1440" y="330" width="31" height="31" fill="#004a8f"/><rect x="1470" y="330" width="31" height="31" fill="#00488b"/><rect x="1500" y="330" width="31" height="31" fill="#004686"/><rect x="1530" y="330" width="31" height="31" fill="#004380"/><rect x="1560" y="330" width="31" height="31" fill="#004079"/><rect x="1590" y="330" width="31" height="31" fill="#003d73"/><rect x="1620" y="330" width="31" height="31" fill="#003a6e"/><rect x="1650" y="330" width="31" height="31" fill="#003869"/><rect x="1680" y="330" width="31" height="31" fill="#003666"/><rect x="-30" y="360" width="31" height="31" fill="#001a3c"/><rect x="0" y="360" width="31" height="31" fill="#001a3c"/><rect x="30" y="360" width="31" height="31" fill="#001a3c"/><rect x="60" y="360" width="31" height="31" fill="#001a3c"/><rect x="90" y="360" width="31" height="31" fill="#001a3c"/><rect x="120" y="360" width="31" height="31" fill="#001a3c"/><rect x="150" y="360" width="31" height="31" fill="#001a3c"/><rect x="180" y="360" width="31" height="31" fill="#001a3c"/><rect x="210" y="360" width="31" height="31" fill="#001a3c"/><rect x="240" y="360" width="31" height="31" fill="#001a3c"/><rect x="270" y="360" width="31" height="31" fill="#001a3c"/><rect x="300" y="360" width="31" height="31" fill="#001a3c"/><rect x="330" y="360" width="31" height="31" fill="#001a3c"/><rect x="360" y="360" width="31" height="31" fill="#001b3d"/><rect x="390" y="360" width="31" height="31" fill="#001c3e"/><rect x="420" y="360" width="31" height="31" fill="#001e41"/><rect x="450" y="360" width="31" height="31" fill="#002245"/><rect x="480" y="360" width="31" height="31" fill="#002448"/><rect x="510" y="360" width="31" height="31" fill="#002448"/><rect x="540" y="360" width="31" height="31" fill="#002449"/><rect x="570" y="360" width="31" height="31" fill="#002449"/><rect x="600" y="360" width="31" height="31" fill="#002449"/><rect x="630" y="360" width="31" height="31" fill="#002449"/><rect x="660" y="360" width="31" height="31" fill="#002449"/><rect x="690" y="360" width="31" height="31" fill="#002549"/><rect x="720" y="360" width="31" height="31" fill="#00254a"/><rect x="750" y="360" width="31" height="31" fill="#00264c"/><rect x="780" y="360" width="31" height="31" fill="#002950"/><rect x="810" y="360" width="31" height="31" fill="#002e59"/><rect x="840" y="360" width="31" height="31" fill="#003667"/><rect x="870" y="360" width="31" height="31" fill="#003f76"/><rect x="900" y="360" width="31" height="31" fill="#004885"/><rect x="930" y="360" width="31" height="31" fill="#004f90"/><rect x="960" y="360" width="31" height="31" fill="#005499"/><rect x="990" y="360" width="31" height="31" fill="#00579f"/><rect x="1020" y="360" width="31" height="31" fill="#0059a3"/><rect x="1050" y="360" width="31" height="31" fill="#0059a3"/><rect x="1080" y="360" width="31" height="31" fill="#0057a0"/><rect x="1110" y="360" width="31" height="31" fill="#00549b"/><rect x="1140" y="360" width="31" height="31" fill="#005096"/><rect x="1170" y="360" width="31" height="31" fill="#004e94"/><rect x="1200" y="360" width="31" height="31" fill="#004e97"/><rect x="1230" y="360" width="31" height="31" fill="#00509b"/><rect x="1260" y="360" width="31" height="31" fill="#0052a0"/><rect x="1290" y="360" width="31" height="31" fill="#0054a3"/><rect x="1320" y="360" width="31" height="31" fill="#0055a5"/><rect x="1350" y="360" width="31" height="31" fill="#0055a5"/><rect x="1380" y="360" width="31" height="31" fill="#0054a3"/><rect x="1410" y="360" width="31" height="31" fill="#0053a0"/><rect x="1440" y="360" width="31" height="31" fill="#00519c"/><rect x="1470" y="360" width="31" height="31" fill="#004e97"/><rect x="1500" y="360" width="31" height="31" fill="#004b90"/><rect x="1530" y="360" width="31" height="31" fill="#004889"/><rect x="1560" y="360" width="31" height="31" fill="#004482"/><rect x="1590" y="360" width="31" height="31" fill="#00407b"/><rect x="1620" y="360" width="31" height="31" fill="#003d74"/><rect x="1650" y="360" width="31" height="31" fill="#003a6e"/><rect x="1680" y="360" width="31" height="31" fill="#003869"/><rect x="-30" y="390" width="31" height="31" fill="#001a3b"/><rect x="0" y="390" width="31" height="31" fill="#001a3b"/><rect x="30" y="390" width="31" height="31" fill="#001a3b"/><rect x="60" y="390" width="31" height="31" fill="#001a3b"/><rect x="90" y="390" width="31" height="31" fill="#001a3b"/><rect x="120" y="390" width="31" height="31" fill="#001a3b"/><rect x="150" y="390" width="31" height="31" fill="#001a3b"/><rect x="180" y="390" width="31" height="31" fill="#001a3b"/><rect x="210" y="390" width="31" height="31" fill="#001a3b"/><rect x="240" y="390" width="31" height="31" fill="#001a3c"/><rect x="270" y="390" width="31" height="31" fill="#001a3c"/><rect x="300" y="390" width="31" height="31" fill="#001a3c"/><rect x="330" y="390" width="31" height="31" fill="#001a3c"/><rect x="360" y="390" width="31" height="31" fill="#001a3c"/><rect x="390" y="390" width="31" height="31" fill="#001b3d"/><rect x="420" y="390" width="31" height="31" fill="#001b3e"/><rect x="450" y="390" width="31" height="31" fill="#001c3f"/><rect x="480" y="390" width="31" height="31" fill="#001f42"/><rect x="510" y="390" width="31" height="31" fill="#002246"/><rect x="540" y="390" width="31" height="31" fill="#002448"/><rect x="570" y="390" width="31" height="31" fill="#002448"/><rect x="600" y="390" width="31" height="31" fill="#002449"/><rect x="630" y="390" width="31" height="31" fill="#002449"/><rect x="660" y="390" width="31" height="31" fill="#002449"/><rect x="690" y="390" width="31" height="31" fill="#002549"/><rect x="720" y="390" width="31" height="31" fill="#00254a"/><rect x="750" y="390" width="31" height="31" fill="#00264c"/><rect x="780" y="390" width="31" height="31" fill="#002951"/><rect x="810" y="390" width="31" height="31" fill="#002f5c"/><rect x="840" y="390" width="31" height="31" fill="#00396b"/><rect x="870" y="390" width="31" height="31" fill="#00437c"/><rect x="900" y="390" width="31" height="31" fill="#004c8b"/><rect x="930" y="390" width="31" height="31" fill="#005296"/><rect x="960" y="390" width="31" height="31" fill="#00579e"/><rect x="990" y="390" width="31" height="31" fill="#005aa3"/><rect x="1020" y="390" width="31" height="31" fill="#005ba6"/><rect x="1050" y="390" width="31" height="31" fill="#005aa5"/><rect x="1080" y="390" width="31" height="31" fill="#0058a3"/><rect x="1110" y="390" width="31" height="31" fill="#0056a2"/><rect x="1140" y="390" width="31" height="31" fill="#0055a3"/><rect x="1170" y="390" width="31" height="31" fill="#0056a6"/><rect x="1200" y="390" width="31" height="31" fill="#0057a9"/><rect x="1230" y="390" width="31" height="31" fill="#0058ab"/><rect x="1260" y="390" width="31" height="31" fill="#0058ac"/><rect x="1290" y="390" width="31" height="31" fill="#0058ac"/><rect x="1320" y="390" width="31" height="31" fill="#0058aa"/><rect x="1350" y="390" width="31" height="31" fill="#0056a8"/><rect x="1380" y="390" width="31" height="31" fill="#0055a4"/><rect x="1410" y="390" width="31" height="31" fill="#0052a0"/><rect x="1440" y="390" width="31" height="31" fill="#00509a"/><rect x="1470" y="390" width="31" height="31" fill="#004d94"/><rect x="1500" y="390" width="31" height="31" fill="#00498d"/><rect x="1530" y="390" width="31" height="31" fill="#004686"/><rect x="1560" y="390" width="31" height="31" fill="#00427f"/><rect x="1590" y="390" width="31" height="31" fill="#003e78"/><rect x="1620" y="390" width="31" height="31" fill="#003b71"/><rect x="1650" y="390" width="31" height="31" fill="#00386a"/><rect x="1680" y="390" width="31" height="31" fill="#003564"/><rect x="-30" y="420" width="31" height="31" fill="#001938"/><rect x="0" y="420" width="31" height="31" fill="#001939"/><rect x="30" y="420" width="31" height="31" fill="#001939"/><rect x="60" y="420" width="31" height="31" fill="#001939"/><rect x="90" y="420" width="31" height="31" fill="#001939"/><rect x="120" y="420" width="31" height="31" fill="#001939"/><rect x="150" y="420" width="31" height="31" fill="#00193a"/><rect x="180" y="420" width="31" height="31" fill="#001a3a"/><rect x="210" y="420" width="31" height="31" fill="#001a3a"/><rect x="240" y="420" width="31" height="31" fill="#001a3b"/><rect x="270" y="420" width="31" height="31" fill="#001a3b"/><rect x="300" y="420" width="31" height="31" fill="#001a3c"/><rect x="330" y="420" width="31" height="31" fill="#001a3c"/><rect x="360" y="420" width="31" height="31" fill="#001b3d"/><rect x="390" y="420" width="31" height="31" fill="#001b3d"/><rect x="420" y="420" width="31" height="31" fill="#001b3e"/><rect x="450" y="420" width="31" height="31" fill="#001c3f"/><rect x="480" y="420" width="31" height="31" fill="#001c40"/><rect x="510" y="420" width="31" height="31" fill="#001e42"/><rect x="540" y="420" width="31" height="31" fill="#002045"/><rect x="570" y="420" width="31" height="31" fill="#002347"/><rect x="600" y="420" width="31" height="31" fill="#002448"/><rect x="630" y="420" width="31" height="31" fill="#002449"/><rect x="660" y="420" width="31" height="31" fill="#002449"/><rect x="690" y="420" width="31" height="31" fill="#002549"/><rect x="720" y="420" width="31" height="31" fill="#00254a"/><rect x="750" y="420" width="31" height="31" fill="#00274c"/><rect x="780" y="420" width="31" height="31" fill="#002a52"/><rect x="810" y="420" width="31" height="31" fill="#00315e"/><rect x="840" y="420" width="31" height="31" fill="#003b6f"/><rect x="870" y="420" width="31" height="31" fill="#004682"/><rect x="900" y="420" width="31" height="31" fill="#004f91"/><rect x="930" y="420" width="31" height="31" fill="#00559c"/><rect x="960" y="420" width="31" height="31" fill="#0059a3"/><rect x="990" y="420" width="31" height="31" fill="#005ba7"/><rect x="1020" y="420" width="31" height="31" fill="#005ba9"/><rect x="1050" y="420" width="31" height="31" fill="#005aa9"/><rect x="1080" y="420" width="31" height="31" fill="#0058a9"/><rect x="1110" y="420" width="31" height="31" fill="#0057a9"/><rect x="1140" y="420" width="31" height="31" fill="#0057a9"/><rect x="1170" y="420" width="31" height="31" fill="#0057a9"/><rect x="1200" y="420" width="31" height="31" fill="#0056a8"/><rect x="1230" y="420" width="31" height="31" fill="#0055a6"/><rect x="1260" y="420" width="31" height="31" fill="#0054a4"/><rect x="1290" y="420" width="31" height="31" fill="#0053a1"/><rect x="1320" y="420" width="31" height="31" fill="#00519e"/><rect x="1350" y="420" width="31" height="31" fill="#004f9a"/><rect x="1380" y="420" width="31" height="31" fill="#004d95"/><rect x="1410" y="420" width="31" height="31" fill="#004a90"/><rect x="1440" y="420" width="31" height="31" fill="#00478a"/><rect x="1470" y="420" width="31" height="31" fill="#004484"/><rect x="1500" y="420" width="31" height="31" fill="#00417d"/><rect x="1530" y="420" width="31" height="31" fill="#003d76"/><rect x="1560" y="420" width="31" height="31" fill="#003a70"/><rect x="1590" y="420" width="31" height="31" fill="#003669"/><rect x="1620" y="420" width="31" height="31" fill="#003362"/><rect x="1650" y="420" width="31" height="31" fill="#00305c"/><rect x="1680" y="420" width="31" height="31" fill="#002d56"/><rect x="-30" y="450" width="31" height="31" fill="#001835"/><rect x="0" y="450" width="31" height="31" fill="#001835"/><rect x="30" y="450" width="31" height="31" fill="#001835"/><rect x="60" y="450" width="31" height="31" fill="#001836"/><rect x="90" y="450" width="31" height="31" fill="#001836"/><rect x="120" y="450" width="31" height="31" fill="#001937"/><rect x="150" y="450" width="31" height="31" fill="#001937"/><rect x="180" y="450" width="31" height="31" fill="#001938"/><rect x="210" y="450" width="31" height="31" fill="#001a39"/><rect x="240" y="450" width="31" height="31" fill="#001a3a"/><rect x="270" y="450" width="31" height="31" fill="#001a3b"/><rect x="300" y="450" width="31" height="31" fill="#001b3c"/><rect x="330" y="450" width="31" height="31" fill="#001b3d"/><rect x="360" y="450" width="31" height="31" fill="#001c3e"/><rect x="390" y="450" width="31" height="31" fill="#001c3f"/><rect x="420" y="450" width="31" height="31" fill="#001d41"/><rect x="450" y="450" width="31" height="31" fill="#001d42"/><rect x="480" y="450" width="31" height="31" fill="#001e44"/><rect x="510" y="450" width="31" height="31" fill="#001f45"/><rect x="540" y="450" width="31" height="31" fill="#002047"/><rect x="570" y="450" width="31" height="31" fill="#002149"/><rect x="600" y="450" width="31" height="31" fill="#00224a"/><rect x="630" y="450" width="31" height="31" fill="#00244a"/><rect x="660" y="450" width="31" height="31" fill="#002449"/><rect x="690" y="450" width="31" height="31" fill="#002549"/><rect x="720" y="450" width="31" height="31" fill="#00254a"/><rect x="750" y="450" width="31" height="31" fill="#00274d"/><rect x="780" y="450" width="31" height="31" fill="#002b53"/><rect x="810" y="450" width="31" height="31" fill="#003260"/><rect x="840" y="450" width="31" height="31" fill="#003e74"/><rect x="870" y="450" width="31" height="31" fill="#004987"/><rect x="900" y="450" width="31" height="31" fill="#005297"/><rect x="930" y="450" width="31" height="31" fill="#0058a1"/><rect x="960" y="450" width="31" height="31" fill="#005aa7"/><rect x="990" y="450" width="31" height="31" fill="#005aa9"/><rect x="1020" y="450" width="31" height="31" fill="#0058a9"/><rect x="1050" y="450" width="31" height="31" fill="#0056a8"/><rect x="1080" y="450" width="31" height="31" fill="#0055a7"/><rect x="1110" y="450" width="31" height="31" fill="#0055a5"/><rect x="1140" y="450" width="31" height="31" fill="#0054a4"/><rect x="1170" y="450" width="31" height="31" fill="#0053a2"/><rect x="1200" y="450" width="31" height="31" fill="#0052a0"/><rect x="1230" y="450" width="31" height="31" fill="#00509d"/><rect x="1260" y="450" width="31" height="31" fill="#004f9a"/><rect x="1290" y="450" width="31" height="31" fill="#004d97"/><rect x="1320" y="450" width="31" height="31" fill="#004b93"/><rect x="1350" y="450" width="31" height="31" fill="#00498e"/><rect x="1380" y="450" width="31" height="31" fill="#004789"/><rect x="1410" y="450" width="31" height="31" fill="#004484"/><rect x="1440" y="450" width="31" height="31" fill="#00417e"/><rect x="1470" y="450" width="31" height="31" fill="#003e78"/><rect x="1500" y="450" width="31" height="31" fill="#003b72"/><rect x="1530" y="450" width="31" height="31" fill="#00386c"/><rect x="1560" y="450" width="31" height="31" fill="#003465"/><rect x="1590" y="450" width="31" height="31" fill="#00315f"/><rect x="1620" y="450" width="31" height="31" fill="#002e58"/><rect x="1650" y="450" width="31" height="31" fill="#002b52"/><rect x="1680" y="450" width="31" height="31" fill="#00284c"/><rect x="-30" y="480" width="31" height="31" fill="#00162f"/><rect x="0" y="480" width="31" height="31" fill="#001730"/><rect x="30" y="480" width="31" height="31" fill="#001731"/><rect x="60" y="480" width="31" height="31" fill="#001732"/><rect x="90" y="480" width="31" height="31" fill="#001833"/><rect x="120" y="480" width="31" height="31" fill="#001834"/><rect x="150" y="480" width="31" height="31" fill="#001935"/><rect x="180" y="480" width="31" height="31" fill="#001937"/><rect x="210" y="480" width="31" height="31" fill="#001a38"/><rect x="240" y="480" width="31" height="31" fill="#001b3a"/><rect x="270" y="480" width="31" height="31" fill="#001b3b"/><rect x="300" y="480" width="31" height="31" fill="#001c3d"/><rect x="330" y="480" width="31" height="31" fill="#001d3f"/><rect x="360" y="480" width="31" height="31" fill="#001e41"/><rect x="390" y="480" width="31" height="31" fill="#001e43"/><rect x="420" y="480" width="31" height="31" fill="#001f45"/><rect x="450" y="480" width="31" height="31" fill="#002047"/><rect x="480" y="480" width="31" height="31" fill="#00214a"/><rect x="510" y="480" width="31" height="31" fill="#00224c"/><rect x="540" y="480" width="31" height="31" fill="#00234e"/><rect x="570" y="480" width="31" height="31" fill="#002450"/><rect x="600" y="480" width="31" height="31" fill="#002552"/><rect x="630" y="480" width="31" height="31" fill="#002553"/><rect x="660" y="480" width="31" height="31" fill="#002653"/><rect x="690" y="480" width="31" height="31" fill="#002750"/><rect x="720" y="480" width="31" height="31" fill="#002850"/><rect x="750" y="480" width="31" height="31" fill="#002b54"/><rect x="780" y="480" width="31" height="31" fill="#00305d"/><rect x="810" y="480" width="31" height="31" fill="#00396b"/><rect x="840" y="480" width="31" height="31" fill="#00437c"/><rect x="870" y="480" width="31" height="31" fill="#004c8d"/><rect x="900" y="480" width="31" height="31" fill="#00549b"/><rect x="930" y="480" width="31" height="31" fill="#0057a4"/><rect x="960" y="480" width="31" height="31" fill="#0057a7"/><rect x="990" y="480" width="31" height="31" fill="#0056a7"/><rect x="1020" y="480" width="31" height="31" fill="#0055a6"/><rect x="1050" y="480" width="31" height="31" fill="#0054a5"/><rect x="1080" y="480" width="31" height="31" fill="#0054a4"/><rect x="1110" y="480" width="31" height="31" fill="#0053a2"/><rect x="1140" y="480" width="31" height="31" fill="#0052a1"/><rect x="1170" y="480" width="31" height="31" fill="#00519e"/><rect x="1200" y="480" width="31" height="31" fill="#00509c"/><rect x="1230" y="480" width="31" height="31" fill="#004e99"/><rect x="1260" y="480" width="31" height="31" fill="#004d96"/><rect x="1290" y="480" width="31" height="31" fill="#004b93"/><rect x="1320" y="480" width="31" height="31" fill="#00498f"/><rect x="1350" y="480" width="31" height="31" fill="#00478a"/><rect x="1380" y="480" width="31" height="31" fill="#004485"/><rect x="1410" y="480" width="31" height="31" fill="#004280"/><rect x="1440" y="480" width="31" height="31" fill="#003f7a"/><rect x="1470" y="480" width="31" height="31" fill="#003c75"/><rect x="1500" y="480" width="31" height="31" fill="#00396e"/><rect x="1530" y="480" width="31" height="31" fill="#003668"/><rect x="1560" y="480" width="31" height="31" fill="#003362"/><rect x="1590" y="480" width="31" height="31" fill="#002f5b"/><rect x="1620" y="480" width="31" height="31" fill="#002c55"/><rect x="1650" y="480" width="31" height="31" fill="#00294f"/><rect x="1680" y="480" width="31" height="31" fill="#002649"/><rect x="-30" y="510" width="31" height="31" fill="#001529"/><rect x="0" y="510" width="31" height="31" fill="#00152b"/><rect x="30" y="510" width="31" height="31" fill="#00162d"/><rect x="60" y="510" width="31" height="31" fill="#00172e"/><rect x="90" y="510" width="31" height="31" fill="#001830"/><rect x="120" y="510" width="31" height="31" fill="#001832"/><rect x="150" y="510" width="31" height="31" fill="#001935"/><rect x="180" y="510" width="31" height="31" fill="#001a37"/><rect x="210" y="510" width="31" height="31" fill="#001b39"/><rect x="240" y="510" width="31" height="31" fill="#001c3c"/><rect x="270" y="510" width="31" height="31" fill="#001d3e"/><rect x="300" y="510" width="31" height="31" fill="#001e41"/><rect x="330" y="510" width="31" height="31" fill="#001f43"/><rect x="360" y="510" width="31" height="31" fill="#002046"/><rect x="390" y="510" width="31" height="31" fill="#002148"/><rect x="420" y="510" width="31" height="31" fill="#00224b"/><rect x="450" y="510" width="31" height="31" fill="#00234d"/><rect x="480" y="510" width="31" height="31" fill="#002450"/><rect x="510" y="510" width="31" height="31" fill="#002552"/><rect x="540" y="510" width="31" height="31" fill="#002654"/><rect x="570" y="510" width="31" height="31" fill="#002756"/><rect x="600" y="510" width="31" height="31" fill="#002758"/><rect x="630" y="510" width="31" height="31" fill="#002859"/><rect x="660" y="510" width="31" height="31" fill="#002a5b"/><rect x="690" y="510" width="31" height="31" fill="#003062"/><rect x="720" y="510" width="31" height="31" fill="#003c72"/><rect x="750" y="510" width="31" height="31" fill="#004580"/><rect x="780" y="510" width="31" height="31" fill="#004987"/><rect x="810" y="510" width="31" height="31" fill="#004c8a"/><rect x="840" y="510" width="31" height="31" fill="#004d8b"/><rect x="870" y="510" width="31" height="31" fill="#004e8c"/><rect x="900" y="510" width="31" height="31" fill="#00508e"/><rect x="930" y="510" width="31" height="31" fill="#005395"/><rect x="960" y="510" width="31" height="31" fill="#00569f"/><rect x="990" y="510" width="31" height="31" fill="#0056a5"/><rect x="1020" y="510" width="31" height="31" fill="#0055a6"/><rect x="1050" y="510" width="31" height="31" fill="#0054a5"/><rect x="1080" y="510" width="31" height="31" fill="#0053a3"/><rect x="1110" y="510" width="31" height="31" fill="#0053a2"/><rect x="1140" y="510" width="31" height="31" fill="#0052a0"/><rect x="1170" y="510" width="31" height="31" fill="#00509d"/><rect x="1200" y="510" width="31" height="31" fill="#004f9b"/><rect x="1230" y="510" width="31" height="31" fill="#004e98"/><rect x="1260" y="510" width="31" height="31" fill="#004c95"/><rect x="1290" y="510" width="31" height="31" fill="#004a91"/><rect x="1320" y="510" width="31" height="31" fill="#00498e"/><rect x="1350" y="510" width="31" height="31" fill="#004689"/><rect x="1380" y="510" width="31" height="31" fill="#004484"/><rect x="1410" y="510" width="31" height="31" fill="#00417f"/><rect x="1440" y="510" width="31" height="31" fill="#003e79"/><rect x="1470" y="510" width="31" height="31" fill="#003c74"/><rect x="1500" y="510" width="31" height="31" fill="#00386d"/><rect x="1530" y="510" width="31" height="31" fill="#003567"/><rect x="1560" y="510" width="31" height="31" fill="#003261"/><rect x="1590" y="510" width="31" height="31" fill="#002f5a"/><rect x="1620" y="510" width="31" height="31" fill="#002c54"/><rect x="1650" y="510" width="31" height="31" fill="#00294e"/><rect x="1680" y="510" width="31" height="31" fill="#002649"/><rect x="-30" y="540" width="31" height="31" fill="#001426"/><rect x="0" y="540" width="31" height="31" fill="#001528"/><rect x="30" y="540" width="31" height="31" fill="#00162b"/><rect x="60" y="540" width="31" height="31" fill="#00172e"/><rect x="90" y="540" width="31" height="31" fill="#001830"/><rect x="120" y="540" width="31" height="31" fill="#001933"/><rect x="150" y="540" width="31" height="31" fill="#001a36"/><rect x="180" y="540" width="31" height="31" fill="#001c39"/><rect x="210" y="540" width="31" height="31" fill="#001d3c"/><rect x="240" y="540" width="31" height="31" fill="#001e3f"/><rect x="270" y="540" width="31" height="31" fill="#001f42"/><rect x="300" y="540" width="31" height="31" fill="#002045"/><rect x="330" y="540" width="31" height="31" fill="#002148"/><rect x="360" y="540" width="31" height="31" fill="#00224a"/><rect x="390" y="540" width="31" height="31" fill="#00234d"/><rect x="420" y="540" width="31" height="31" fill="#00244f"/><rect x="450" y="540" width="31" height="31" fill="#002551"/><rect x="480" y="540" width="31" height="31" fill="#002653"/><rect x="510" y="540" width="31" height="31" fill="#002755"/><rect x="540" y="540" width="31" height="31" fill="#002757"/><rect x="570" y="540" width="31" height="31" fill="#002857"/><rect x="600" y="540" width="31" height="31" fill="#002857"/><rect x="630" y="540" width="31" height="31" fill="#002856"/><rect x="660" y="540" width="31" height="31" fill="#002c59"/><rect x="690" y="540" width="31" height="31" fill="#003666"/><rect x="720" y="540" width="31" height="31" fill="#003f76"/><rect x="750" y="540" width="31" height="31" fill="#004682"/><rect x="780" y="540" width="31" height="31" fill="#004a88"/><rect x="810" y="540" width="31" height="31" fill="#004c8b"/><rect x="840" y="540" width="31" height="31" fill="#004d8b"/><rect x="870" y="540" width="31" height="31" fill="#004e8b"/><rect x="900" y="540" width="31" height="31" fill="#004f8a"/><rect x="930" y="540" width="31" height="31" fill="#00528c"/><rect x="960" y="540" width="31" height="31" fill="#005592"/><rect x="990" y="540" width="31" height="31" fill="#00599c"/><rect x="1020" y="540" width="31" height="31" fill="#005aa5"/><rect x="1050" y="540" width="31" height="31" fill="#0059a8"/><rect x="1080" y="540" width="31" height="31" fill="#0056a7"/><rect x="1110" y="540" width="31" height="31" fill="#0054a4"/><rect x="1140" y="540" width="31" height="31" fill="#0052a1"/><rect x="1170" y="540" width="31" height="31" fill="#00519e"/><rect x="1200" y="540" width="31" height="31" fill="#00509c"/><rect x="1230" y="540" width="31" height="31" fill="#004e99"/><rect x="1260" y="540" width="31" height="31" fill="#004d96"/><rect x="1290" y="540" width="31" height="31" fill="#004b92"/><rect x="1320" y="540" width="31" height="31" fill="#00498e"/><rect x="1350" y="540" width="31" height="31" fill="#00478a"/><rect x="1380" y="540" width="31" height="31" fill="#004485"/><rect x="1410" y="540" width="31" height="31" fill="#004280"/><rect x="1440" y="540" width="31" height="31" fill="#003f7a"/><rect x="1470" y="540" width="31" height="31" fill="#003c74"/><rect x="1500" y="540" width="31" height="31" fill="#00396e"/><rect x="1530" y="540" width="31" height="31" fill="#003668"/><rect x="1560" y="540" width="31" height="31" fill="#003261"/><rect x="1590" y="540" width="31" height="31" fill="#002f5b"/><rect x="1620" y="540" width="31" height="31" fill="#002c55"/><rect x="1650" y="540" width="31" height="31" fill="#00294f"/><rect x="1680" y="540" width="31" height="31" fill="#002649"/><rect x="-30" y="570" width="31" height="31" fill="#001526"/><rect x="0" y="570" width="31" height="31" fill="#001629"/><rect x="30" y="570" width="31" height="31" fill="#00172c"/><rect x="60" y="570" width="31" height="31" fill="#001830"/><rect x="90" y="570" width="31" height="31" fill="#001a33"/><rect x="120" y="570" width="31" height="31" fill="#001b36"/><rect x="150" y="570" width="31" height="31" fill="#001c39"/><rect x="180" y="570" width="31" height="31" fill="#001d3d"/><rect x="210" y="570" width="31" height="31" fill="#001f40"/><rect x="240" y="570" width="31" height="31" fill="#002043"/><rect x="270" y="570" width="31" height="31" fill="#002145"/><rect x="300" y="570" width="31" height="31" fill="#002248"/><rect x="330" y="570" width="31" height="31" fill="#00234a"/><rect x="360" y="570" width="31" height="31" fill="#00234c"/><rect x="390" y="570" width="31" height="31" fill="#00244e"/><rect x="420" y="570" width="31" height="31" fill="#002550"/><rect x="450" y="570" width="31" height="31" fill="#002551"/><rect x="480" y="570" width="31" height="31" fill="#002652"/><rect x="510" y="570" width="31" height="31" fill="#002653"/><rect x="540" y="570" width="31" height="31" fill="#002652"/><rect x="570" y="570" width="31" height="31" fill="#002650"/><rect x="600" y="570" width="31" height="31" fill="#00254d"/><rect x="630" y="570" width="31" height="31" fill="#00274e"/><rect x="660" y="570" width="31" height="31" fill="#002d56"/><rect x="690" y="570" width="31" height="31" fill="#003665"/><rect x="720" y="570" width="31" height="31" fill="#003f75"/><rect x="750" y="570" width="31" height="31" fill="#004681"/><rect x="780" y="570" width="31" height="31" fill="#004a88"/><rect x="810" y="570" width="31" height="31" fill="#004c8a"/><rect x="840" y="570" width="31" height="31" fill="#004d8a"/><rect x="870" y="570" width="31" height="31" fill="#004e8a"/><rect x="900" y="570" width="31" height="31" fill="#004f89"/><rect x="930" y="570" width="31" height="31" fill="#00518a"/><rect x="960" y="570" width="31" height="31" fill="#00548e"/><rect x="990" y="570" width="31" height="31" fill="#005997"/><rect x="1020" y="570" width="31" height="31" fill="#005ea2"/><rect x="1050" y="570" width="31" height="31" fill="#0062ae"/><rect x="1080" y="570" width="31" height="31" fill="#0063b5"/><rect x="1110" y="570" width="31" height="31" fill="#0060b4"/><rect x="1140" y="570" width="31" height="31" fill="#005bae"/><rect x="1170" y="570" width="31" height="31" fill="#0057a8"/><rect x="1200" y="570" width="31" height="31" fill="#0054a2"/><rect x="1230" y="570" width="31" height="31" fill="#00519e"/><rect x="1260" y="570" width="31" height="31" fill="#004f9a"/><rect x="1290" y="570" width="31" height="31" fill="#004d96"/><rect x="1320" y="570" width="31" height="31" fill="#004b92"/><rect x="1350" y="570" width="31" height="31" fill="#00498e"/><rect x="1380" y="570" width="31" height="31" fill="#004789"/><rect x="1410" y="570" width="31" height="31" fill="#004484"/><rect x="1440" y="570" width="31" height="31" fill="#00417e"/><rect x="1470" y="570" width="31" height="31" fill="#003e78"/><rect x="1500" y="570" width="31" height="31" fill="#003b72"/><rect x="1530" y="570" width="31" height="31" fill="#00386c"/><rect x="1560" y="570" width="31" height="31" fill="#003465"/><rect x="1590" y="570" width="31" height="31" fill="#00315e"/><rect x="1620" y="570" width="31" height="31" fill="#002e58"/><rect x="1650" y="570" width="31" height="31" fill="#002b52"/><rect x="1680" y="570" width="31" height="31" fill="#00284c"/><rect x="-30" y="600" width="31" height="31" fill="#001629"/><rect x="0" y="600" width="31" height="31" fill="#00172d"/><rect x="30" y="600" width="31" height="31" fill="#001930"/><rect x="60" y="600" width="31" height="31" fill="#001a33"/><rect x="90" y="600" width="31" height="31" fill="#001b37"/><rect x="120" y="600" width="31" height="31" fill="#001c3a"/><rect x="150" y="600" width="31" height="31" fill="#001e3d"/><rect x="180" y="600" width="31" height="31" fill="#001f3f"/><rect x="210" y="600" width="31" height="31" fill="#002042"/><rect x="240" y="600" width="31" height="31" fill="#002044"/><rect x="270" y="600" width="31" height="31" fill="#002146"/><rect x="300" y="600" width="31" height="31" fill="#002248"/><rect x="330" y="600" width="31" height="31" fill="#002249"/><rect x="360" y="600" width="31" height="31" fill="#00234a"/><rect x="390" y="600" width="31" height="31" fill="#00234b"/><rect x="420" y="600" width="31" height="31" fill="#00234b"/><rect x="450" y="600" width="31" height="31" fill="#00234b"/><rect x="480" y="600" width="31" height="31" fill="#00234b"/><rect x="510" y="600" width="31" height="31" fill="#00234a"/><rect x="540" y="600" width="31" height="31" fill="#002347"/><rect x="570" y="600" width="31" height="31" fill="#002345"/><rect x="600" y="600" width="31" height="31" fill="#002446"/><rect x="630" y="600" width="31" height="31" fill="#00274b"/><rect x="660" y="600" width="31" height="31" fill="#002d55"/><rect x="690" y="600" width="31" height="31" fill="#003564"/><rect x="720" y="600" width="31" height="31" fill="#003e73"/><rect x="750" y="600" width="31" height="31" fill="#00457f"/><rect x="780" y="600" width="31" height="31" fill="#004986"/><rect x="810" y="600" width="31" height="31" fill="#004b89"/><rect x="840" y="600" width="31" height="31" fill="#004c89"/><rect x="870" y="600" width="31" height="31" fill="#004d89"/><rect x="900" y="600" width="31" height="31" fill="#004e88"/><rect x="930" y="600" width="31" height="31" fill="#005089"/><rect x="960" y="600" width="31" height="31" fill="#00538c"/><rect x="990" y="600" width="31" height="31" fill="#005794"/><rect x="1020" y="600" width="31" height="31" fill="#005d9f"/><rect x="1050" y="600" width="31" height="31" fill="#0063ad"/><rect x="1080" y="600" width="31" height="31" fill="#0067b9"/><rect x="1110" y="600" width="31" height="31" fill="#006ac2"/><rect x="1140" y="600" width="31" height="31" fill="#0069c5"/><rect x="1170" y="600" width="31" height="31" fill="#0066c0"/><rect x="1200" y="600" width="31" height="31" fill="#0061b8"/><rect x="1230" y="600" width="31" height="31" fill="#005cb0"/><rect x="1260" y="600" width="31" height="31" fill="#0059aa"/><rect x="1290" y="600" width="31" height="31" fill="#0056a5"/><rect x="1320" y="600" width="31" height="31" fill="#0054a0"/><rect x="1350" y="600" width="31" height="31" fill="#00529c"/><rect x="1380" y="600" width="31" height="31" fill="#004f98"/><rect x="1410" y="600" width="31" height="31" fill="#004d93"/><rect x="1440" y="600" width="31" height="31" fill="#004a8d"/><rect x="1470" y="600" width="31" height="31" fill="#004787"/><rect x="1500" y="600" width="31" height="31" fill="#004380"/><rect x="1530" y="600" width="31" height="31" fill="#00407a"/><rect x="1560" y="600" width="31" height="31" fill="#003c72"/><rect x="1590" y="600" width="31" height="31" fill="#00386b"/><rect x="1620" y="600" width="31" height="31" fill="#003464"/><rect x="1650" y="600" width="31" height="31" fill="#00315d"/><rect x="1680" y="600" width="31" height="31" fill="#002d56"/><rect x="-30" y="630" width="31" height="31" fill="#00182e"/><rect x="0" y="630" width="31" height="31" fill="#001931"/><rect x="30" y="630" width="31" height="31" fill="#001a34"/><rect x="60" y="630" width="31" height="31" fill="#001b36"/><rect x="90" y="630" width="31" height="31" fill="#001c39"/><rect x="120" y="630" width="31" height="31" fill="#001d3b"/><rect x="150" y="630" width="31" height="31" fill="#001e3d"/><rect x="180" y="630" width="31" height="31" fill="#001f3f"/><rect x="210" y="630" width="31" height="31" fill="#001f40"/><rect x="240" y="630" width="31" height="31" fill="#002041"/><rect x="270" y="630" width="31" height="31" fill="#002042"/><rect x="300" y="630" width="31" height="31" fill="#002043"/><rect x="330" y="630" width="31" height="31" fill="#002043"/><rect x="360" y="630" width="31" height="31" fill="#002043"/><rect x="390" y="630" width="31" height="31" fill="#002043"/><rect x="420" y="630" width="31" height="31" fill="#002042"/><rect x="450" y="630" width="31" height="31" fill="#002042"/><rect x="480" y="630" width="31" height="31" fill="#002041"/><rect x="510" y="630" width="31" height="31" fill="#002040"/><rect x="540" y="630" width="31" height="31" fill="#002140"/><rect x="570" y="630" width="31" height="31" fill="#002241"/><rect x="600" y="630" width="31" height="31" fill="#002344"/><rect x="630" y="630" width="31" height="31" fill="#00274a"/><rect x="660" y="630" width="31" height="31" fill="#002c53"/><rect x="690" y="630" width="31" height="31" fill="#003461"/><rect x="720" y="630" width="31" height="31" fill="#003c71"/><rect x="750" y="630" width="31" height="31" fill="#00437d"/><rect x="780" y="630" width="31" height="31" fill="#004884"/><rect x="810" y="630" width="31" height="31" fill="#004a87"/><rect x="840" y="630" width="31" height="31" fill="#004b88"/><rect x="870" y="630" width="31" height="31" fill="#004c87"/><rect x="900" y="630" width="31" height="31" fill="#004d86"/><rect x="930" y="630" width="31" height="31" fill="#004e87"/><rect x="960" y="630" width="31" height="31" fill="#00518a"/><rect x="990" y="630" width="31" height="31" fill="#005691"/><rect x="1020" y="630" width="31" height="31" fill="#005b9c"/><rect x="1050" y="630" width="31" height="31" fill="#0061a9"/><rect x="1080" y="630" width="31" height="31" fill="#0066b7"/><rect x="1110" y="630" width="31" height="31" fill="#006ac2"/><rect x="1140" y="630" width="31" height="31" fill="#006cc9"/><rect x="1170" y="630" width="31" height="31" fill="#006cca"/><rect x="1200" y="630" width="31" height="31" fill="#0069c5"/><rect x="1230" y="630" width="31" height="31" fill="#0064bd"/><rect x="1260" y="630" width="31" height="31" fill="#0060b5"/><rect x="1290" y="630" width="31" height="31" fill="#005daf"/><rect x="1320" y="630" width="31" height="31" fill="#005aaa"/><rect x="1350" y="630" width="31" height="31" fill="#0058a6"/><rect x="1380" y="630" width="31" height="31" fill="#0056a2"/><rect x="1410" y="630" width="31" height="31" fill="#00539e"/><rect x="1440" y="630" width="31" height="31" fill="#005199"/><rect x="1470" y="630" width="31" height="31" fill="#004d93"/><rect x="1500" y="630" width="31" height="31" fill="#004a8c"/><rect x="1530" y="630" width="31" height="31" fill="#004685"/><rect x="1560" y="630" width="31" height="31" fill="#00427e"/><rect x="1590" y="630" width="31" height="31" fill="#003e76"/><rect x="1620" y="630" width="31" height="31" fill="#003a6e"/><rect x="1650" y="630" width="31" height="31" fill="#003565"/><rect x="1680" y="630" width="31" height="31" fill="#00315d"/><rect x="-30" y="660" width="31" height="31" fill="#001a31"/><rect x="0" y="660" width="31" height="31" fill="#001b34"/><rect x="30" y="660" width="31" height="31" fill="#001b36"/><rect x="60" y="660" width="31" height="31" fill="#001c37"/><rect x="90" y="660" width="31" height="31" fill="#001d39"/><rect x="120" y="660" width="31" height="31" fill="#001d3a"/><rect x="150" y="660" width="31" height="31" fill="#001d3a"/><rect x="180" y="660" width="31" height="31" fill="#001d3b"/><rect x="210" y="660" width="31" height="31" fill="#001e3b"/><rect x="240" y="660" width="31" height="31" fill="#001e3c"/><rect x="270" y="660" width="31" height="31" fill="#001e3c"/><rect x="300" y="660" width="31" height="31" fill="#001e3b"/><rect x="330" y="660" width="31" height="31" fill="#001e3b"/><rect x="360" y="660" width="31" height="31" fill="#001d3b"/><rect x="390" y="660" width="31" height="31" fill="#001d3b"/><rect x="420" y="660" width="31" height="31" fill="#001e3b"/><rect x="450" y="660" width="31" height="31" fill="#001e3b"/><rect x="480" y="660" width="31" height="31" fill="#001f3c"/><rect x="510" y="660" width="31" height="31" fill="#00203e"/><rect x="540" y="660" width="31" height="31" fill="#00213f"/><rect x="570" y="660" width="31" height="31" fill="#002241"/><rect x="600" y="660" width="31" height="31" fill="#002344"/><rect x="630" y="660" width="31" height="31" fill="#002649"/><rect x="660" y="660" width="31" height="31" fill="#002b52"/><rect x="690" y="660" width="31" height="31" fill="#00325f"/><rect x="720" y="660" width="31" height="31" fill="#003a6e"/><rect x="750" y="660" width="31" height="31" fill="#00417a"/><rect x="780" y="660" width="31" height="31" fill="#004682"/><rect x="810" y="660" width="31" height="31" fill="#004985"/><rect x="840" y="660" width="31" height="31" fill="#004a86"/><rect x="870" y="660" width="31" height="31" fill="#004a85"/><rect x="900" y="660" width="31" height="31" fill="#004b84"/><rect x="930" y="660" width="31" height="31" fill="#004d84"/><rect x="960" y="660" width="31" height="31" fill="#004f87"/><rect x="990" y="660" width="31" height="31" fill="#00538e"/><rect x="1020" y="660" width="31" height="31" fill="#005999"/><rect x="1050" y="660" width="31" height="31" fill="#005ea6"/><rect x="1080" y="660" width="31" height="31" fill="#0064b3"/><rect x="1110" y="660" width="31" height="31" fill="#0069bf"/><rect x="1140" y="660" width="31" height="31" fill="#006cc7"/><rect x="1170" y="660" width="31" height="31" fill="#006dcb"/><rect x="1200" y="660" width="31" height="31" fill="#006bc8"/><rect x="1230" y="660" width="31" height="31" fill="#0067c1"/><rect x="1260" y="660" width="31" height="31" fill="#0062b8"/><rect x="1290" y="660" width="31" height="31" fill="#005eb0"/><rect x="1320" y="660" width="31" height="31" fill="#005aa9"/><rect x="1350" y="660" width="31" height="31" fill="#0057a5"/><rect x="1380" y="660" width="31" height="31" fill="#0055a1"/><rect x="1410" y="660" width="31" height="31" fill="#00529c"/><rect x="1440" y="660" width="31" height="31" fill="#005097"/><rect x="1470" y="660" width="31" height="31" fill="#004c91"/><rect x="1500" y="660" width="31" height="31" fill="#00498b"/><rect x="1530" y="660" width="31" height="31" fill="#004583"/><rect x="1560" y="660" width="31" height="31" fill="#00417b"/><rect x="1590" y="660" width="31" height="31" fill="#003c73"/><rect x="1620" y="660" width="31" height="31" fill="#00386a"/><rect x="1650" y="660" width="31" height="31" fill="#003362"/><rect x="1680" y="660" width="31" height="31" fill="#002e59"/><rect x="-30" y="690" width="31" height="31" fill="#001a33"/><rect x="0" y="690" width="31" height="31" fill="#001b34"/><rect x="30" y="690" width="31" height="31" fill="#001b35"/><rect x="60" y="690" width="31" height="31" fill="#001b35"/><rect x="90" y="690" width="31" height="31" fill="#001c36"/><rect x="120" y="690" width="31" height="31" fill="#001c36"/><rect x="150" y="690" width="31" height="31" fill="#001c36"/><rect x="180" y="690" width="31" height="31" fill="#001c36"/><rect x="210" y="690" width="31" height="31" fill="#001c36"/><rect x="240" y="690" width="31" height="31" fill="#001c36"/><rect x="270" y="690" width="31" height="31" fill="#001c36"/><rect x="300" y="690" width="31" height="31" fill="#001c36"/><rect x="330" y="690" width="31" height="31" fill="#001b36"/><rect x="360" y="690" width="31" height="31" fill="#001c36"/><rect x="390" y="690" width="31" height="31" fill="#001c37"/><rect x="420" y="690" width="31" height="31" fill="#001d38"/><rect x="450" y="690" width="31" height="31" fill="#001e3a"/><rect x="480" y="690" width="31" height="31" fill="#001f3d"/><rect x="510" y="690" width="31" height="31" fill="#00203e"/><rect x="540" y="690" width="31" height="31" fill="#002140"/><rect x="570" y="690" width="31" height="31" fill="#002241"/><rect x="600" y="690" width="31" height="31" fill="#002343"/><rect x="630" y="690" width="31" height="31" fill="#002548"/><rect x="660" y="690" width="31" height="31" fill="#002a50"/><rect x="690" y="690" width="31" height="31" fill="#00305c"/><rect x="720" y="690" width="31" height="31" fill="#00386a"/><rect x="750" y="690" width="31" height="31" fill="#003f76"/><rect x="780" y="690" width="31" height="31" fill="#00447e"/><rect x="810" y="690" width="31" height="31" fill="#004782"/><rect x="840" y="690" width="31" height="31" fill="#004883"/><rect x="870" y="690" width="31" height="31" fill="#004983"/><rect x="900" y="690" width="31" height="31" fill="#004982"/><rect x="930" y="690" width="31" height="31" fill="#004b82"/><rect x="960" y="690" width="31" height="31" fill="#004d84"/><rect x="990" y="690" width="31" height="31" fill="#00518b"/><rect x="1020" y="690" width="31" height="31" fill="#005695"/><rect x="1050" y="690" width="31" height="31" fill="#005ca1"/><rect x="1080" y="690" width="31" height="31" fill="#0061af"/><rect x="1110" y="690" width="31" height="31" fill="#0066bb"/><rect x="1140" y="690" width="31" height="31" fill="#006ac4"/><rect x="1170" y="690" width="31" height="31" fill="#006cc9"/><rect x="1200" y="690" width="31" height="31" fill="#006bc8"/><rect x="1230" y="690" width="31" height="31" fill="#0068c2"/><rect x="1260" y="690" width="31" height="31" fill="#0063b9"/><rect x="1290" y="690" width="31" height="31" fill="#005eaf"/><rect x="1320" y="690" width="31" height="31" fill="#0059a7"/><rect x="1350" y="690" width="31" height="31" fill="#0055a1"/><rect x="1380" y="690" width="31" height="31" fill="#00529c"/><rect x="1410" y="690" width="31" height="31" fill="#005097"/><rect x="1440" y="690" width="31" height="31" fill="#004d92"/><rect x="1470" y="690" width="31" height="31" fill="#00498c"/><rect x="1500" y="690" width="31" height="31" fill="#004685"/><rect x="1530" y="690" width="31" height="31" fill="#00427d"/><rect x="1560" y="690" width="31" height="31" fill="#003d75"/><rect x="1590" y="690" width="31" height="31" fill="#00396c"/><rect x="1620" y="690" width="31" height="31" fill="#003464"/><rect x="1650" y="690" width="31" height="31" fill="#002f5b"/><rect x="1680" y="690" width="31" height="31" fill="#002b53"/><rect x="-30" y="720" width="31" height="31" fill="#001a32"/><rect x="0" y="720" width="31" height="31" fill="#001a32"/><rect x="30" y="720" width="31" height="31" fill="#001a33"/><rect x="60" y="720" width="31" height="31" fill="#001a33"/><rect x="90" y="720" width="31" height="31" fill="#001a33"/><rect x="120" y="720" width="31" height="31" fill="#001a33"/><rect x="150" y="720" width="31" height="31" fill="#001a33"/><rect x="180" y="720" width="31" height="31" fill="#001a33"/><rect x="210" y="720" width="31" height="31" fill="#001a33"/><rect x="240" y="720" width="31" height="31" fill="#001a33"/><rect x="270" y="720" width="31" height="31" fill="#001a33"/><rect x="300" y="720" width="31" height="31" fill="#001a34"/><rect x="330" y="720" width="31" height="31" fill="#001a34"/><rect x="360" y="720" width="31" height="31" fill="#001b35"/><rect x="390" y="720" width="31" height="31" fill="#001c36"/><rect x="420" y="720" width="31" height="31" fill="#001d39"/><rect x="450" y="720" width="31" height="31" fill="#001f3c"/><rect x="480" y="720" width="31" height="31" fill="#00203e"/><rect x="510" y="720" width="31" height="31" fill="#00213f"/><rect x="540" y="720" width="31" height="31" fill="#002140"/><rect x="570" y="720" width="31" height="31" fill="#002241"/><rect x="600" y="720" width="31" height="31" fill="#002343"/><rect x="630" y="720" width="31" height="31" fill="#002547"/><rect x="660" y="720" width="31" height="31" fill="#00294e"/><rect x="690" y="720" width="31" height="31" fill="#002e59"/><rect x="720" y="720" width="31" height="31" fill="#003666"/><rect x="750" y="720" width="31" height="31" fill="#003c71"/><rect x="780" y="720" width="31" height="31" fill="#00417a"/><rect x="810" y="720" width="31" height="31" fill="#00447e"/><rect x="840" y="720" width="31" height="31" fill="#004580"/><rect x="870" y="720" width="31" height="31" fill="#00467f"/><rect x="900" y="720" width="31" height="31" fill="#00477f"/><rect x="930" y="720" width="31" height="31" fill="#00487e"/><rect x="960" y="720" width="31" height="31" fill="#004a81"/><rect x="990" y="720" width="31" height="31" fill="#004e87"/><rect x="1020" y="720" width="31" height="31" fill="#005390"/><rect x="1050" y="720" width="31" height="31" fill="#00589d"/><rect x="1080" y="720" width="31" height="31" fill="#005eaa"/><rect x="1110" y="720" width="31" height="31" fill="#0063b6"/><rect x="1140" y="720" width="31" height="31" fill="#0067bf"/><rect x="1170" y="720" width="31" height="31" fill="#0069c5"/><rect x="1200" y="720" width="31" height="31" fill="#0069c5"/><rect x="1230" y="720" width="31" height="31" fill="#0067c0"/><rect x="1260" y="720" width="31" height="31" fill="#0063b7"/><rect x="1290" y="720" width="31" height="31" fill="#005dad"/><rect x="1320" y="720" width="31" height="31" fill="#0058a3"/><rect x="1350" y="720" width="31" height="31" fill="#00539c"/><rect x="1380" y="720" width="31" height="31" fill="#005096"/><rect x="1410" y="720" width="31" height="31" fill="#004c91"/><rect x="1440" y="720" width="31" height="31" fill="#00498c"/><rect x="1470" y="720" width="31" height="31" fill="#004686"/><rect x="1500" y="720" width="31" height="31" fill="#00427f"/><rect x="1530" y="720" width="31" height="31" fill="#003e77"/><rect x="1560" y="720" width="31" height="31" fill="#003a6f"/><rect x="1590" y="720" width="31" height="31" fill="#003566"/><rect x="1620" y="720" width="31" height="31" fill="#00305d"/><rect x="1650" y="720" width="31" height="31" fill="#002c54"/><rect x="1680" y="720" width="31" height="31" fill="#00274c"/><rect x="-30" y="750" width="31" height="31" fill="#00192f"/><rect x="0" y="750" width="31" height="31" fill="#001930"/><rect x="30" y="750" width="31" height="31" fill="#001930"/><rect x="60" y="750" width="31" height="31" fill="#001930"/><rect x="90" y="750" width="31" height="31" fill="#001931"/><rect x="120" y="750" width="31" height="31" fill="#001931"/><rect x="150" y="750" width="31" height="31" fill="#001931"/><rect x="180" y="750" width="31" height="31" fill="#001932"/><rect x="210" y="750" width="31" height="31" fill="#001932"/><rect x="240" y="750" width="31" height="31" fill="#001932"/><rect x="270" y="750" width="31" height="31" fill="#001933"/><rect x="300" y="750" width="31" height="31" fill="#001933"/><rect x="330" y="750" width="31" height="31" fill="#001a34"/><rect x="360" y="750" width="31" height="31" fill="#001a35"/><rect x="390" y="750" width="31" height="31" fill="#001c37"/><rect x="420" y="750" width="31" height="31" fill="#001d3a"/><rect x="450" y="750" width="31" height="31" fill="#001f3c"/><rect x="480" y="750" width="31" height="31" fill="#00203e"/><rect x="510" y="750" width="31" height="31" fill="#00203f"/><rect x="540" y="750" width="31" height="31" fill="#00213f"/><rect x="570" y="750" width="31" height="31" fill="#002140"/><rect x="600" y="750" width="31" height="31" fill="#002242"/><rect x="630" y="750" width="31" height="31" fill="#002445"/><rect x="660" y="750" width="31" height="31" fill="#00274b"/><rect x="690" y="750" width="31" height="31" fill="#002c55"/><rect x="720" y="750" width="31" height="31" fill="#003260"/><rect x="750" y="750" width="31" height="31" fill="#00386b"/><rect x="780" y="750" width="31" height="31" fill="#003d73"/><rect x="810" y="750" width="31" height="31" fill="#004078"/><rect x="840" y="750" width="31" height="31" fill="#00427b"/><rect x="870" y="750" width="31" height="31" fill="#00437b"/><rect x="900" y="750" width="31" height="31" fill="#00447a"/><rect x="930" y="750" width="31" height="31" fill="#00457a"/><rect x="960" y="750" width="31" height="31" fill="#00477c"/><rect x="990" y="750" width="31" height="31" fill="#004a82"/><rect x="1020" y="750" width="31" height="31" fill="#004f8b"/><rect x="1050" y="750" width="31" height="31" fill="#005497"/><rect x="1080" y="750" width="31" height="31" fill="#005aa3"/><rect x="1110" y="750" width="31" height="31" fill="#005faf"/><rect x="1140" y="750" width="31" height="31" fill="#0063b9"/><rect x="1170" y="750" width="31" height="31" fill="#0065be"/><rect x="1200" y="750" width="31" height="31" fill="#0066bf"/><rect x="1230" y="750" width="31" height="31" fill="#0064bb"/><rect x="1260" y="750" width="31" height="31" fill="#0060b3"/><rect x="1290" y="750" width="31" height="31" fill="#005ba8"/><rect x="1320" y="750" width="31" height="31" fill="#00559e"/><rect x="1350" y="750" width="31" height="31" fill="#005095"/><rect x="1380" y="750" width="31" height="31" fill="#004c8f"/><rect x="1410" y="750" width="31" height="31" fill="#00498a"/><rect x="1440" y="750" width="31" height="31" fill="#004685"/><rect x="1470" y="750" width="31" height="31" fill="#004280"/><rect x="1500" y="750" width="31" height="31" fill="#003f79"/><rect x="1530" y="750" width="31" height="31" fill="#003b72"/><rect x="1560" y="750" width="31" height="31" fill="#003669"/><rect x="1590" y="750" width="31" height="31" fill="#003260"/><rect x="1620" y="750" width="31" height="31" fill="#002d57"/><rect x="1650" y="750" width="31" height="31" fill="#00294f"/><rect x="1680" y="750" width="31" height="31" fill="#002547"/><rect x="-30" y="780" width="31" height="31" fill="#00172c"/><rect x="0" y="780" width="31" height="31" fill="#00182c"/><rect x="30" y="780" width="31" height="31" fill="#00182d"/><rect x="60" y="780" width="31" height="31" fill="#00182e"/><rect x="90" y="780" width="31" height="31" fill="#00182f"/><rect x="120" y="780" width="31" height="31" fill="#00182f"/><rect x="150" y="780" width="31" height="31" fill="#001830"/><rect x="180" y="780" width="31" height="31" fill="#001931"/><rect x="210" y="780" width="31" height="31" fill="#001931"/><rect x="240" y="780" width="31" height="31" fill="#001932"/><rect x="270" y="780" width="31" height="31" fill="#001932"/><rect x="300" y="780" width="31" height="31" fill="#001933"/><rect x="330" y="780" width="31" height="31" fill="#001934"/><rect x="360" y="780" width="31" height="31" fill="#001a35"/><rect x="390" y="780" width="31" height="31" fill="#001b37"/><rect x="420" y="780" width="31" height="31" fill="#001d3a"/><rect x="450" y="780" width="31" height="31" fill="#001e3c"/><rect x="480" y="780" width="31" height="31" fill="#00203e"/><rect x="510" y="780" width="31" height="31" fill="#00203e"/><rect x="540" y="780" width="31" height="31" fill="#00213f"/><rect x="570" y="780" width="31" height="31" fill="#002140"/><rect x="600" y="780" width="31" height="31" fill="#002241"/><rect x="630" y="780" width="31" height="31" fill="#002344"/><rect x="660" y="780" width="31" height="31" fill="#002548"/><rect x="690" y="780" width="31" height="31" fill="#002950"/><rect x="720" y="780" width="31" height="31" fill="#002e5a"/><rect x="750" y="780" width="31" height="31" fill="#003463"/><rect x="780" y="780" width="31" height="31" fill="#00386b"/><rect x="810" y="780" width="31" height="31" fill="#003b71"/><rect x="840" y="780" width="31" height="31" fill="#003e74"/><rect x="870" y="780" width="31" height="31" fill="#003f75"/><rect x="900" y="780" width="31" height="31" fill="#004075"/><rect x="930" y="780" width="31" height="31" fill="#004175"/><rect x="960" y="780" width="31" height="31" fill="#004277"/><rect x="990" y="780" width="31" height="31" fill="#00457c"/><rect x="1020" y="780" width="31" height="31" fill="#004a84"/><rect x="1050" y="780" width="31" height="31" fill="#004f8f"/><rect x="1080" y="780" width="31" height="31" fill="#00549b"/><rect x="1110" y="780" width="31" height="31" fill="#0059a6"/><rect x="1140" y="780" width="31" height="31" fill="#005daf"/><rect x="1170" y="780" width="31" height="31" fill="#0060b5"/><rect x="1200" y="780" width="31" height="31" fill="#0060b5"/><rect x="1230" y="780" width="31" height="31" fill="#005fb1"/><rect x="1260" y="780" width="31" height="31" fill="#005baa"/><rect x="1290" y="780" width="31" height="31" fill="#00569f"/><rect x="1320" y="780" width="31" height="31" fill="#005094"/><rect x="1350" y="780" width="31" height="31" fill="#004b8b"/><rect x="1380" y="780" width="31" height="31" fill="#004785"/><rect x="1410" y="780" width="31" height="31" fill="#004380"/><rect x="1440" y="780" width="31" height="31" fill="#00417c"/><rect x="1470" y="780" width="31" height="31" fill="#003e78"/><rect x="1500" y="780" width="31" height="31" fill="#003b72"/><rect x="1530" y="780" width="31" height="31" fill="#00376b"/><rect x="1560" y="780" width="31" height="31" fill="#003364"/><rect x="1590" y="780" width="31" height="31" fill="#002f5b"/><rect x="1620" y="780" width="31" height="31" fill="#002b53"/><rect x="1650" y="780" width="31" height="31" fill="#00274b"/><rect x="1680" y="780" width="31" height="31" fill="#002343"/><rect x="-30" y="810" width="31" height="31" fill="#001629"/><rect x="0" y="810" width="31" height="31" fill="#00162a"/><rect x="30" y="810" width="31" height="31" fill="#00172a"/><rect x="60" y="810" width="31" height="31" fill="#00172b"/><rect x="90" y="810" width="31" height="31" fill="#00172c"/><rect x="120" y="810" width="31" height="31" fill="#00172d"/><rect x="150" y="810" width="31" height="31" fill="#00182e"/><rect x="180" y="810" width="31" height="31" fill="#00182f"/><rect x="210" y="810" width="31" height="31" fill="#001830"/><rect x="240" y="810" width="31" height="31" fill="#001831"/><rect x="270" y="810" width="31" height="31" fill="#001831"/><rect x="300" y="810" width="31" height="31" fill="#001832"/><rect x="330" y="810" width="31" height="31" fill="#001833"/><rect x="360" y="810" width="31" height="31" fill="#001935"/><rect x="390" y="810" width="31" height="31" fill="#001a37"/><rect x="420" y="810" width="31" height="31" fill="#001c39"/><rect x="450" y="810" width="31" height="31" fill="#001e3b"/><rect x="480" y="810" width="31" height="31" fill="#001f3d"/><rect x="510" y="810" width="31" height="31" fill="#00203e"/><rect x="540" y="810" width="31" height="31" fill="#00203e"/><rect x="570" y="810" width="31" height="31" fill="#00203f"/><rect x="600" y="810" width="31" height="31" fill="#002140"/><rect x="630" y="810" width="31" height="31" fill="#002142"/><rect x="660" y="810" width="31" height="31" fill="#002345"/><rect x="690" y="810" width="31" height="31" fill="#00264b"/><rect x="720" y="810" width="31" height="31" fill="#002a52"/><rect x="750" y="810" width="31" height="31" fill="#002e5a"/><rect x="780" y="810" width="31" height="31" fill="#003262"/><rect x="810" y="810" width="31" height="31" fill="#003667"/><rect x="840" y="810" width="31" height="31" fill="#00386b"/><rect x="870" y="810" width="31" height="31" fill="#003a6d"/><rect x="900" y="810" width="31" height="31" fill="#003b6e"/><rect x="930" y="810" width="31" height="31" fill="#003c6f"/><rect x="960" y="810" width="31" height="31" fill="#003d70"/><rect x="990" y="810" width="31" height="31" fill="#004075"/><rect x="1020" y="810" width="31" height="31" fill="#00447c"/><rect x="1050" y="810" width="31" height="31" fill="#004885"/><rect x="1080" y="810" width="31" height="31" fill="#004d90"/><rect x="1110" y="810" width="31" height="31" fill="#00529a"/><rect x="1140" y="810" width="31" height="31" fill="#0056a2"/><rect x="1170" y="810" width="31" height="31" fill="#0058a7"/><rect x="1200" y="810" width="31" height="31" fill="#0058a7"/><rect x="1230" y="810" width="31" height="31" fill="#0056a3"/><rect x="1260" y="810" width="31" height="31" fill="#00539b"/><rect x="1290" y="810" width="31" height="31" fill="#004e91"/><rect x="1320" y="810" width="31" height="31" fill="#004886"/><rect x="1350" y="810" width="31" height="31" fill="#00437d"/><rect x="1380" y="810" width="31" height="31" fill="#003f77"/><rect x="1410" y="810" width="31" height="31" fill="#003c72"/><rect x="1440" y="810" width="31" height="31" fill="#003a6f"/><rect x="1470" y="810" width="31" height="31" fill="#00376c"/><rect x="1500" y="810" width="31" height="31" fill="#003568"/><rect x="1530" y="810" width="31" height="31" fill="#003263"/><rect x="1560" y="810" width="31" height="31" fill="#002f5d"/><rect x="1590" y="810" width="31" height="31" fill="#002c56"/><rect x="1620" y="810" width="31" height="31" fill="#00284f"/><rect x="1650" y="810" width="31" height="31" fill="#002547"/><rect x="1680" y="810" width="31" height="31" fill="#002241"/><rect x="-30" y="840" width="31" height="31" fill="#001527"/><rect x="0" y="840" width="31" height="31" fill="#001527"/><rect x="30" y="840" width="31" height="31" fill="#001628"/><rect x="60" y="840" width="31" height="31" fill="#001629"/><rect x="90" y="840" width="31" height="31" fill="#00162a"/><rect x="120" y="840" width="31" height="31" fill="#00162c"/><rect x="150" y="840" width="31" height="31" fill="#00172d"/><rect x="180" y="840" width="31" height="31" fill="#00172e"/><rect x="210" y="840" width="31" height="31" fill="#00172f"/><rect x="240" y="840" width="31" height="31" fill="#001730"/><rect x="270" y="840" width="31" height="31" fill="#001730"/><rect x="300" y="840" width="31" height="31" fill="#001731"/><rect x="330" y="840" width="31" height="31" fill="#001732"/><rect x="360" y="840" width="31" height="31" fill="#001834"/><rect x="390" y="840" width="31" height="31" fill="#001936"/><rect x="420" y="840" width="31" height="31" fill="#001b38"/><rect x="450" y="840" width="31" height="31" fill="#001d3a"/><rect x="480" y="840" width="31" height="31" fill="#001e3c"/><rect x="510" y="840" width="31" height="31" fill="#001f3d"/><rect x="540" y="840" width="31" height="31" fill="#001f3d"/><rect x="570" y="840" width="31" height="31" fill="#001f3d"/><rect x="600" y="840" width="31" height="31" fill="#001f3e"/><rect x="630" y="840" width="31" height="31" fill="#00203f"/><rect x="660" y="840" width="31" height="31" fill="#002041"/><rect x="690" y="840" width="31" height="31" fill="#002245"/><rect x="720" y="840" width="31" height="31" fill="#00254a"/><rect x="750" y="840" width="31" height="31" fill="#002851"/><rect x="780" y="840" width="31" height="31" fill="#002c57"/><rect x="810" y="840" width="31" height="31" fill="#002f5d"/><rect x="840" y="840" width="31" height="31" fill="#003261"/><rect x="870" y="840" width="31" height="31" fill="#003464"/><rect x="900" y="840" width="31" height="31" fill="#003566"/><rect x="930" y="840" width="31" height="31" fill="#003667"/><rect x="960" y="840" width="31" height="31" fill="#003769"/><rect x="990" y="840" width="31" height="31" fill="#00396c"/><rect x="1020" y="840" width="31" height="31" fill="#003c71"/><rect x="1050" y="840" width="31" height="31" fill="#004079"/><rect x="1080" y="840" width="31" height="31" fill="#004481"/><rect x="1110" y="840" width="31" height="31" fill="#004889"/><rect x="1140" y="840" width="31" height="31" fill="#004b90"/><rect x="1170" y="840" width="31" height="31" fill="#004c93"/><rect x="1200" y="840" width="31" height="31" fill="#004c93"/><rect x="1230" y="840" width="31" height="31" fill="#004b8f"/><rect x="1260" y="840" width="31" height="31" fill="#004787"/><rect x="1290" y="840" width="31" height="31" fill="#00437e"/><rect x="1320" y="840" width="31" height="31" fill="#003e74"/><rect x="1350" y="840" width="31" height="31" fill="#00396c"/><rect x="1380" y="840" width="31" height="31" fill="#003566"/><rect x="1410" y="840" width="31" height="31" fill="#003362"/><rect x="1440" y="840" width="31" height="31" fill="#003160"/><rect x="1470" y="840" width="31" height="31" fill="#00305f"/><rect x="1500" y="840" width="31" height="31" fill="#002e5d"/><rect x="1530" y="840" width="31" height="31" fill="#002d5a"/><rect x="1560" y="840" width="31" height="31" fill="#002b55"/><rect x="1590" y="840" width="31" height="31" fill="#002850"/><rect x="1620" y="840" width="31" height="31" fill="#00264a"/><rect x="1650" y="840" width="31" height="31" fill="#002345"/><rect x="1680" y="840" width="31" height="31" fill="#002140"/><rect x="-30" y="870" width="31" height="31" fill="#001426"/><rect x="0" y="870" width="31" height="31" fill="#001426"/><rect x="30" y="870" width="31" height="31" fill="#001527"/><rect x="60" y="870" width="31" height="31" fill="#001528"/><rect x="90" y="870" width="31" height="31" fill="#001529"/><rect x="120" y="870" width="31" height="31" fill="#00152a"/><rect x="150" y="870" width="31" height="31" fill="#00162b"/><rect x="180" y="870" width="31" height="31" fill="#00162c"/><rect x="210" y="870" width="31" height="31" fill="#00162d"/><rect x="240" y="870" width="31" height="31" fill="#00162f"/><rect x="270" y="870" width="31" height="31" fill="#00162f"/><rect x="300" y="870" width="31" height="31" fill="#001630"/><rect x="330" y="870" width="31" height="31" fill="#001631"/><rect x="360" y="870" width="31" height="31" fill="#001733"/><rect x="390" y="870" width="31" height="31" fill="#001834"/><rect x="420" y="870" width="31" height="31" fill="#001a36"/><rect x="450" y="870" width="31" height="31" fill="#001b38"/><rect x="480" y="870" width="31" height="31" fill="#001d3a"/><rect x="510" y="870" width="31" height="31" fill="#001d3a"/><rect x="540" y="870" width="31" height="31" fill="#001e3b"/><rect x="570" y="870" width="31" height="31" fill="#001e3b"/><rect x="600" y="870" width="31" height="31" fill="#001d3b"/><rect x="630" y="870" width="31" height="31" fill="#001d3b"/><rect x="660" y="870" width="31" height="31" fill="#001e3c"/><rect x="690" y="870" width="31" height="31" fill="#001e3f"/><rect x="720" y="870" width="31" height="31" fill="#002043"/><rect x="750" y="870" width="31" height="31" fill="#002348"/><rect x="780" y="870" width="31" height="31" fill="#00264d"/><rect x="810" y="870" width="31" height="31" fill="#002953"/><rect x="840" y="870" width="31" height="31" fill="#002b57"/><rect x="870" y="870" width="31" height="31" fill="#002d5b"/><rect x="900" y="870" width="31" height="31" fill="#002f5d"/><rect x="930" y="870" width="31" height="31" fill="#00305f"/><rect x="960" y="870" width="31" height="31" fill="#003160"/><rect x="990" y="870" width="31" height="31" fill="#003262"/><rect x="1020" y="870" width="31" height="31" fill="#003465"/><rect x="1050" y="870" width="31" height="31" fill="#00366a"/><rect x="1080" y="870" width="31" height="31" fill="#00396f"/><rect x="1110" y="870" width="31" height="31" fill="#003b74"/><rect x="1140" y="870" width="31" height="31" fill="#003d78"/><rect x="1170" y="870" width="31" height="31" fill="#003e79"/><rect x="1200" y="870" width="31" height="31" fill="#003d78"/><rect x="1230" y="870" width="31" height="31" fill="#003c74"/><rect x="1260" y="870" width="31" height="31" fill="#00396e"/><rect x="1290" y="870" width="31" height="31" fill="#003566"/><rect x="1320" y="870" width="31" height="31" fill="#00315f"/><rect x="1350" y="870" width="31" height="31" fill="#002d59"/><rect x="1380" y="870" width="31" height="31" fill="#002b54"/><rect x="1410" y="870" width="31" height="31" fill="#002952"/><rect x="1440" y="870" width="31" height="31" fill="#002851"/><rect x="1470" y="870" width="31" height="31" fill="#002851"/><rect x="1500" y="870" width="31" height="31" fill="#002751"/><rect x="1530" y="870" width="31" height="31" fill="#00274f"/><rect x="1560" y="870" width="31" height="31" fill="#00264d"/><rect x="1590" y="870" width="31" height="31" fill="#002449"/><rect x="1620" y="870" width="31" height="31" fill="#002346"/><rect x="1650" y="870" width="31" height="31" fill="#002142"/><rect x="1680" y="870" width="31" height="31" fill="#00203f"/><rect x="-30" y="900" width="31" height="31" fill="#001325"/><rect x="0" y="900" width="31" height="31" fill="#001325"/><rect x="30" y="900" width="31" height="31" fill="#001426"/><rect x="60" y="900" width="31" height="31" fill="#001427"/><rect x="90" y="900" width="31" height="31" fill="#001427"/><rect x="120" y="900" width="31" height="31" fill="#001428"/><rect x="150" y="900" width="31" height="31" fill="#00152a"/><rect x="180" y="900" width="31" height="31" fill="#00152b"/><rect x="210" y="900" width="31" height="31" fill="#00152c"/><rect x="240" y="900" width="31" height="31" fill="#00152e"/><rect x="270" y="900" width="31" height="31" fill="#00152f"/><rect x="300" y="900" width="31" height="31" fill="#001530"/><rect x="330" y="900" width="31" height="31" fill="#001531"/><rect x="360" y="900" width="31" height="31" fill="#001632"/><rect x="390" y="900" width="31" height="31" fill="#001733"/><rect x="420" y="900" width="31" height="31" fill="#001834"/><rect x="450" y="900" width="31" height="31" fill="#001a35"/><rect x="480" y="900" width="31" height="31" fill="#001b36"/><rect x="510" y="900" width="31" height="31" fill="#001b37"/><rect x="540" y="900" width="31" height="31" fill="#001b37"/><rect x="570" y="900" width="31" height="31" fill="#001b37"/><rect x="600" y="900" width="31" height="31" fill="#001b36"/><rect x="630" y="900" width="31" height="31" fill="#001b37"/><rect x="660" y="900" width="31" height="31" fill="#001b37"/><rect x="690" y="900" width="31" height="31" fill="#001b39"/><rect x="720" y="900" width="31" height="31" fill="#001d3c"/><rect x="750" y="900" width="31" height="31" fill="#001e40"/><rect x="780" y="900" width="31" height="31" fill="#002145"/><rect x="810" y="900" width="31" height="31" fill="#00234a"/><rect x="840" y="900" width="31" height="31" fill="#00264e"/><rect x="870" y="900" width="31" height="31" fill="#002852"/><rect x="900" y="900" width="31" height="31" fill="#002955"/><rect x="930" y="900" width="31" height="31" fill="#002a57"/><rect x="960" y="900" width="31" height="31" fill="#002b58"/><rect x="990" y="900" width="31" height="31" fill="#002b58"/><rect x="1020" y="900" width="31" height="31" fill="#002c59"/><rect x="1050" y="900" width="31" height="31" fill="#002c5a"/><rect x="1080" y="900" width="31" height="31" fill="#002d5b"/><rect x="1110" y="900" width="31" height="31" fill="#002e5c"/><rect x="1140" y="900" width="31" height="31" fill="#002e5c"/><rect x="1170" y="900" width="31" height="31" fill="#002e5c"/><rect x="1200" y="900" width="31" height="31" fill="#002d5a"/><rect x="1230" y="900" width="31" height="31" fill="#002c57"/><rect x="1260" y="900" width="31" height="31" fill="#002a53"/><rect x="1290" y="900" width="31" height="31" fill="#00274e"/><rect x="1320" y="900" width="31" height="31" fill="#00254a"/><rect x="1350" y="900" width="31" height="31" fill="#002246"/><rect x="1380" y="900" width="31" height="31" fill="#002144"/><rect x="1410" y="900" width="31" height="31" fill="#002043"/><rect x="1440" y="900" width="31" height="31" fill="#002044"/><rect x="1470" y="900" width="31" height="31" fill="#002145"/><rect x="1500" y="900" width="31" height="31" fill="#002146"/><rect x="1530" y="900" width="31" height="31" fill="#002146"/><rect x="1560" y="900" width="31" height="31" fill="#002145"/><rect x="1590" y="900" width="31" height="31" fill="#002144"/><rect x="1620" y="900" width="31" height="31" fill="#002042"/><rect x="1650" y="900" width="31" height="31" fill="#001f3f"/><rect x="1680" y="900" width="31" height="31" fill="#001e3d"/><rect x="-30" y="930" width="31" height="31" fill="#001225"/><rect x="0" y="930" width="31" height="31" fill="#001225"/><rect x="30" y="930" width="31" height="31" fill="#001225"/><rect x="60" y="930" width="31" height="31" fill="#001326"/><rect x="90" y="930" width="31" height="31" fill="#001326"/><rect x="120" y="930" width="31" height="31" fill="#001327"/><rect x="150" y="930" width="31" height="31" fill="#001428"/><rect x="180" y="930" width="31" height="31" fill="#00142a"/><rect x="210" y="930" width="31" height="31" fill="#00142b"/><rect x="240" y="930" width="31" height="31" fill="#00142d"/><rect x="270" y="930" width="31" height="31" fill="#00142e"/><rect x="300" y="930" width="31" height="31" fill="#00152f"/><rect x="330" y="930" width="31" height="31" fill="#001530"/><rect x="360" y="930" width="31" height="31" fill="#001531"/><rect x="390" y="930" width="31" height="31" fill="#001631"/><rect x="420" y="930" width="31" height="31" fill="#001732"/><rect x="450" y="930" width="31" height="31" fill="#001833"/><rect x="480" y="930" width="31" height="31" fill="#001933"/><rect x="510" y="930" width="31" height="31" fill="#001933"/><rect x="540" y="930" width="31" height="31" fill="#001933"/><rect x="570" y="930" width="31" height="31" fill="#001933"/><rect x="600" y="930" width="31" height="31" fill="#001932"/><rect x="630" y="930" width="31" height="31" fill="#001933"/><rect x="660" y="930" width="31" height="31" fill="#001933"/><rect x="690" y="930" width="31" height="31" fill="#001935"/><rect x="720" y="930" width="31" height="31" fill="#001a37"/><rect x="750" y="930" width="31" height="31" fill="#001c3a"/><rect x="780" y="930" width="31" height="31" fill="#001e3e"/><rect x="810" y="930" width="31" height="31" fill="#002043"/><rect x="840" y="930" width="31" height="31" fill="#002247"/><rect x="870" y="930" width="31" height="31" fill="#00244a"/><rect x="900" y="930" width="31" height="31" fill="#00254d"/><rect x="930" y="930" width="31" height="31" fill="#00264f"/><rect x="960" y="930" width="31" height="31" fill="#002750"/><rect x="990" y="930" width="31" height="31" fill="#002650"/><rect x="1020" y="930" width="31" height="31" fill="#00264f"/><rect x="1050" y="930" width="31" height="31" fill="#00254d"/><rect x="1080" y="930" width="31" height="31" fill="#00244a"/><rect x="1110" y="930" width="31" height="31" fill="#002348"/><rect x="1140" y="930" width="31" height="31" fill="#002245"/><rect x="1170" y="930" width="31" height="31" fill="#002143"/><rect x="1200" y="930" width="31" height="31" fill="#002041"/><rect x="1230" y="930" width="31" height="31" fill="#001f3f"/><rect x="1260" y="930" width="31" height="31" fill="#001e3d"/><rect x="1290" y="930" width="31" height="31" fill="#001c3b"/><rect x="1320" y="930" width="31" height="31" fill="#001b3a"/><rect x="1350" y="930" width="31" height="31" fill="#001a39"/><rect x="1380" y="930" width="31" height="31" fill="#001a38"/><rect x="1410" y="930" width="31" height="31" fill="#001a39"/><rect x="1440" y="930" width="31" height="31" fill="#001a3a"/><rect x="1470" y="930" width="31" height="31" fill="#001b3c"/><rect x="1500" y="930" width="31" height="31" fill="#001d3e"/><rect x="1530" y="930" width="31" height="31" fill="#001d3f"/><rect x="1560" y="930" width="31" height="31" fill="#001e40"/><rect x="1590" y="930" width="31" height="31" fill="#001e3f"/><rect x="1620" y="930" width="31" height="31" fill="#001e3e"/><rect x="1650" y="930" width="31" height="31" fill="#001e3d"/><rect x="1680" y="930" width="31" height="31" fill="#001d3c"/><rect x="-30" y="960" width="31" height="31" fill="#001125"/><rect x="0" y="960" width="31" height="31" fill="#001125"/><rect x="30" y="960" width="31" height="31" fill="#001225"/><rect x="60" y="960" width="31" height="31" fill="#001226"/><rect x="90" y="960" width="31" height="31" fill="#001226"/><rect x="120" y="960" width="31" height="31" fill="#001227"/><rect x="150" y="960" width="31" height="31" fill="#001227"/><rect x="180" y="960" width="31" height="31" fill="#001329"/><rect x="210" y="960" width="31" height="31" fill="#00132a"/><rect x="240" y="960" width="31" height="31" fill="#00132b"/><rect x="270" y="960" width="31" height="31" fill="#00142d"/><rect x="300" y="960" width="31" height="31" fill="#00142e"/><rect x="330" y="960" width="31" height="31" fill="#00152f"/><rect x="360" y="960" width="31" height="31" fill="#001530"/><rect x="390" y="960" width="31" height="31" fill="#001630"/><rect x="420" y="960" width="31" height="31" fill="#001730"/><rect x="450" y="960" width="31" height="31" fill="#001730"/><rect x="480" y="960" width="31" height="31" fill="#001830"/><rect x="510" y="960" width="31" height="31" fill="#001830"/><rect x="540" y="960" width="31" height="31" fill="#001830"/><rect x="570" y="960" width="31" height="31" fill="#001830"/><rect x="600" y="960" width="31" height="31" fill="#001830"/><rect x="630" y="960" width="31" height="31" fill="#001830"/><rect x="660" y="960" width="31" height="31" fill="#001831"/><rect x="690" y="960" width="31" height="31" fill="#001832"/><rect x="720" y="960" width="31" height="31" fill="#001933"/><rect x="750" y="960" width="31" height="31" fill="#001a36"/><rect x="780" y="960" width="31" height="31" fill="#001c3a"/><rect x="810" y="960" width="31" height="31" fill="#001e3d"/><rect x="840" y="960" width="31" height="31" fill="#002041"/><rect x="870" y="960" width="31" height="31" fill="#002144"/><rect x="900" y="960" width="31" height="31" fill="#002347"/><rect x="930" y="960" width="31" height="31" fill="#002349"/><rect x="960" y="960" width="31" height="31" fill="#00244a"/><rect x="990" y="960" width="31" height="31" fill="#00244a"/><rect x="1020" y="960" width="31" height="31" fill="#002348"/><rect x="1050" y="960" width="31" height="31" fill="#002245"/><rect x="1080" y="960" width="31" height="31" fill="#002041"/><rect x="1110" y="960" width="31" height="31" fill="#001e3c"/><rect x="1140" y="960" width="31" height="31" fill="#001c38"/><rect x="1170" y="960" width="31" height="31" fill="#001b35"/><rect x="1200" y="960" width="31" height="31" fill="#001a34"/><rect x="1230" y="960" width="31" height="31" fill="#001933"/><rect x="1260" y="960" width="31" height="31" fill="#001832"/><rect x="1290" y="960" width="31" height="31" fill="#001832"/><rect x="1320" y="960" width="31" height="31" fill="#001732"/><rect x="1350" y="960" width="31" height="31" fill="#001732"/><rect x="1380" y="960" width="31" height="31" fill="#001633"/><rect x="1410" y="960" width="31" height="31" fill="#001634"/><rect x="1440" y="960" width="31" height="31" fill="#001735"/><rect x="1470" y="960" width="31" height="31" fill="#001838"/><rect x="1500" y="960" width="31" height="31" fill="#001a3a"/><rect x="1530" y="960" width="31" height="31" fill="#001b3c"/><rect x="1560" y="960" width="31" height="31" fill="#001c3c"/><rect x="1590" y="960" width="31" height="31" fill="#001d3d"/><rect x="1620" y="960" width="31" height="31" fill="#001d3d"/><rect x="1650" y="960" width="31" height="31" fill="#001d3c"/><rect x="1680" y="960" width="31" height="31" fill="#001d3c"/><rect x="-30" y="990" width="31" height="31" fill="#001125"/><rect x="0" y="990" width="31" height="31" fill="#001125"/><rect x="30" y="990" width="31" height="31" fill="#001125"/><rect x="60" y="990" width="31" height="31" fill="#001125"/><rect x="90" y="990" width="31" height="31" fill="#001126"/><rect x="120" y="990" width="31" height="31" fill="#001126"/><rect x="150" y="990" width="31" height="31" fill="#001227"/><rect x="180" y="990" width="31" height="31" fill="#001227"/><rect x="210" y="990" width="31" height="31" fill="#001229"/><rect x="240" y="990" width="31" height="31" fill="#00132a"/><rect x="270" y="990" width="31" height="31" fill="#00132c"/><rect x="300" y="990" width="31" height="31" fill="#00142d"/><rect x="330" y="990" width="31" height="31" fill="#00142e"/><rect x="360" y="990" width="31" height="31" fill="#00152f"/><rect x="390" y="990" width="31" height="31" fill="#00162f"/><rect x="420" y="990" width="31" height="31" fill="#00172f"/><rect x="450" y="990" width="31" height="31" fill="#00172f"/><rect x="480" y="990" width="31" height="31" fill="#00172f"/><rect x="510" y="990" width="31" height="31" fill="#00172f"/><rect x="540" y="990" width="31" height="31" fill="#00172f"/><rect x="570" y="990" width="31" height="31" fill="#00172f"/><rect x="600" y="990" width="31" height="31" fill="#00172f"/><rect x="630" y="990" width="31" height="31" fill="#00172f"/><rect x="660" y="990" width="31" height="31" fill="#00172f"/><rect x="690" y="990" width="31" height="31" fill="#001730"/><rect x="720" y="990" width="31" height="31" fill="#001831"/><rect x="750" y="990" width="31" height="31" fill="#001933"/><rect x="780" y="990" width="31" height="31" fill="#001b36"/><rect x="810" y="990" width="31" height="31" fill="#001d39"/><rect x="840" y="990" width="31" height="31" fill="#001e3c"/><rect x="870" y="990" width="31" height="31" fill="#001f3e"/><rect x="900" y="990" width="31" height="31" fill="#002141"/><rect x="930" y="990" width="31" height="31" fill="#002143"/><rect x="960" y="990" width="31" height="31" fill="#002244"/><rect x="990" y="990" width="31" height="31" fill="#002244"/><rect x="1020" y="990" width="31" height="31" fill="#002243"/><rect x="1050" y="990" width="31" height="31" fill="#002141"/><rect x="1080" y="990" width="31" height="31" fill="#001f3d"/><rect x="1110" y="990" width="31" height="31" fill="#001d38"/><rect x="1140" y="990" width="31" height="31" fill="#001b35"/><rect x="1170" y="990" width="31" height="31" fill="#001a32"/><rect x="1200" y="990" width="31" height="31" fill="#001931"/><rect x="1230" y="990" width="31" height="31" fill="#001931"/><rect x="1260" y="990" width="31" height="31" fill="#001831"/><rect x="1290" y="990" width="31" height="31" fill="#001831"/><rect x="1320" y="990" width="31" height="31" fill="#001732"/><rect x="1350" y="990" width="31" height="31" fill="#001732"/><rect x="1380" y="990" width="31" height="31" fill="#001633"/><rect x="1410" y="990" width="31" height="31" fill="#001633"/><rect x="1440" y="990" width="31" height="31" fill="#001734"/><rect x="1470" y="990" width="31" height="31" fill="#001836"/><rect x="1500" y="990" width="31" height="31" fill="#001938"/><rect x="1530" y="990" width="31" height="31" fill="#001a3a"/><rect x="1560" y="990" width="31" height="31" fill="#001b3b"/><rect x="1590" y="990" width="31" height="31" fill="#001c3b"/><rect x="1620" y="990" width="31" height="31" fill="#001c3c"/><rect x="1650" y="990" width="31" height="31" fill="#001c3b"/><rect x="1680" y="990" width="31" height="31" fill="#001c3b"/><rect x="-30" y="1020" width="31" height="31" fill="#001125"/><rect x="0" y="1020" width="31" height="31" fill="#001125"/><rect x="30" y="1020" width="31" height="31" fill="#001125"/><rect x="60" y="1020" width="31" height="31" fill="#001125"/><rect x="90" y="1020" width="31" height="31" fill="#001126"/><rect x="120" y="1020" width="31" height="31" fill="#001126"/><rect x="150" y="1020" width="31" height="31" fill="#001126"/><rect x="180" y="1020" width="31" height="31" fill="#001127"/><rect x="210" y="1020" width="31" height="31" fill="#001227"/><rect x="240" y="1020" width="31" height="31" fill="#001229"/><rect x="270" y="1020" width="31" height="31" fill="#00132a"/><rect x="300" y="1020" width="31" height="31" fill="#00132c"/><rect x="330" y="1020" width="31" height="31" fill="#00142d"/><rect x="360" y="1020" width="31" height="31" fill="#00152e"/><rect x="390" y="1020" width="31" height="31" fill="#00162f"/><rect x="420" y="1020" width="31" height="31" fill="#00172f"/><rect x="450" y="1020" width="31" height="31" fill="#00172f"/><rect x="480" y="1020" width="31" height="31" fill="#00172f"/><rect x="510" y="1020" width="31" height="31" fill="#00172e"/><rect x="540" y="1020" width="31" height="31" fill="#00172e"/><rect x="570" y="1020" width="31" height="31" fill="#00172e"/><rect x="600" y="1020" width="31" height="31" fill="#00172e"/><rect x="630" y="1020" width="31" height="31" fill="#00172e"/><rect x="660" y="1020" width="31" height="31" fill="#00172e"/><rect x="690" y="1020" width="31" height="31" fill="#00172f"/><rect x="720" y="1020" width="31" height="31" fill="#00182f"/><rect x="750" y="1020" width="31" height="31" fill="#001931"/><rect x="780" y="1020" width="31" height="31" fill="#001a32"/><rect x="810" y="1020" width="31" height="31" fill="#001b35"/><rect x="840" y="1020" width="31" height="31" fill="#001d37"/><rect x="870" y="1020" width="31" height="31" fill="#001e39"/><rect x="900" y="1020" width="31" height="31" fill="#001f3b"/><rect x="930" y="1020" width="31" height="31" fill="#00203d"/><rect x="960" y="1020" width="31" height="31" fill="#00203e"/><rect x="990" y="1020" width="31" height="31" fill="#00213f"/><rect x="1020" y="1020" width="31" height="31" fill="#00213f"/><rect x="1050" y="1020" width="31" height="31" fill="#00203d"/><rect x="1080" y="1020" width="31" height="31" fill="#001f3a"/><rect x="1110" y="1020" width="31" height="31" fill="#001e37"/><rect x="1140" y="1020" width="31" height="31" fill="#001d35"/><rect x="1170" y="1020" width="31" height="31" fill="#001c33"/><rect x="1200" y="1020" width="31" height="31" fill="#001b32"/><rect x="1230" y="1020" width="31" height="31" fill="#001a32"/><rect x="1260" y="1020" width="31" height="31" fill="#001a33"/><rect x="1290" y="1020" width="31" height="31" fill="#001933"/><rect x="1320" y="1020" width="31" height="31" fill="#001934"/><rect x="1350" y="1020" width="31" height="31" fill="#001834"/><rect x="1380" y="1020" width="31" height="31" fill="#001835"/><rect x="1410" y="1020" width="31" height="31" fill="#001835"/><rect x="1440" y="1020" width="31" height="31" fill="#001836"/><rect x="1470" y="1020" width="31" height="31" fill="#001837"/><rect x="1500" y="1020" width="31" height="31" fill="#001938"/><rect x="1530" y="1020" width="31" height="31" fill="#001a39"/><rect x="1560" y="1020" width="31" height="31" fill="#001b3a"/><rect x="1590" y="1020" width="31" height="31" fill="#001c3b"/><rect x="1620" y="1020" width="31" height="31" fill="#001c3b"/><rect x="1650" y="1020" width="31" height="31" fill="#001c3b"/><rect x="1680" y="1020" width="31" height="31" fill="#001c3b"/><rect x="-30" y="1050" width="31" height="31" fill="#001125"/><rect x="0" y="1050" width="31" height="31" fill="#001125"/><rect x="30" y="1050" width="31" height="31" fill="#001125"/><rect x="60" y="1050" width="31" height="31" fill="#001125"/><rect x="90" y="1050" width="31" height="31" fill="#001125"/><rect x="120" y="1050" width="31" height="31" fill="#001126"/><rect x="150" y="1050" width="31" height="31" fill="#001126"/><rect x="180" y="1050" width="31" height="31" fill="#001126"/><rect x="210" y="1050" width="31" height="31" fill="#001127"/><rect x="240" y="1050" width="31" height="31" fill="#001227"/><rect x="270" y="1050" width="31" height="31" fill="#001229"/><rect x="300" y="1050" width="31" height="31" fill="#00132b"/><rect x="330" y="1050" width="31" height="31" fill="#00142c"/><rect x="360" y="1050" width="31" height="31" fill="#00162e"/><rect x="390" y="1050" width="31" height="31" fill="#00162e"/><rect x="420" y="1050" width="31" height="31" fill="#00172e"/><rect x="450" y="1050" width="31" height="31" fill="#00172e"/><rect x="480" y="1050" width="31" height="31" fill="#00172e"/><rect x="510" y="1050" width="31" height="31" fill="#00172e"/><rect x="540" y="1050" width="31" height="31" fill="#00172e"/><rect x="570" y="1050" width="31" height="31" fill="#00172e"/><rect x="600" y="1050" width="31" height="31" fill="#00172e"/><rect x="630" y="1050" width="31" height="31" fill="#00172e"/><rect x="660" y="1050" width="31" height="31" fill="#00172e"/><rect x="690" y="1050" width="31" height="31" fill="#00172e"/><rect x="720" y="1050" width="31" height="31" fill="#00182e"/><rect x="750" y="1050" width="31" height="31" fill="#00182e"/><rect x="780" y="1050" width="31" height="31" fill="#00192f"/><rect x="810" y="1050" width="31" height="31" fill="#001a31"/><rect x="840" y="1050" width="31" height="31" fill="#001b33"/><rect x="870" y="1050" width="31" height="31" fill="#001c34"/><rect x="900" y="1050" width="31" height="31" fill="#001d36"/><rect x="930" y="1050" width="31" height="31" fill="#001e38"/><rect x="960" y="1050" width="31" height="31" fill="#001e39"/><rect x="990" y="1050" width="31" height="31" fill="#001f3a"/><rect x="1020" y="1050" width="31" height="31" fill="#001f3a"/><rect x="1050" y="1050" width="31" height="31" fill="#001f3a"/><rect x="1080" y="1050" width="31" height="31" fill="#001f38"/><rect x="1110" y="1050" width="31" height="31" fill="#001e36"/><rect x="1140" y="1050" width="31" height="31" fill="#001e35"/><rect x="1170" y="1050" width="31" height="31" fill="#001d34"/><rect x="1200" y="1050" width="31" height="31" fill="#001c34"/><rect x="1230" y="1050" width="31" height="31" fill="#001c34"/><rect x="1260" y="1050" width="31" height="31" fill="#001b34"/><rect x="1290" y="1050" width="31" height="31" fill="#001b35"/><rect x="1320" y="1050" width="31" height="31" fill="#001a36"/><rect x="1350" y="1050" width="31" height="31" fill="#001a37"/><rect x="1380" y="1050" width="31" height="31" fill="#001a37"/><rect x="1410" y="1050" width="31" height="31" fill="#001938"/><rect x="1440" y="1050" width="31" height="31" fill="#001938"/><rect x="1470" y="1050" width="31" height="31" fill="#001938"/><rect x="1500" y="1050" width="31" height="31" fill="#001a39"/><rect x="1530" y="1050" width="31" height="31" fill="#001a3a"/><rect x="1560" y="1050" width="31" height="31" fill="#001b3a"/><rect x="1590" y="1050" width="31" height="31" fill="#001c3b"/><rect x="1620" y="1050" width="31" height="31" fill="#001c3b"/><rect x="1650" y="1050" width="31" height="31" fill="#001c3b"/><rect x="1680" y="1050" width="31" height="31" fill="#001c3b"/></g>
<defs>
<linearGradient id="bandC" gradientUnits="userSpaceOnUse" x1="0" y1="435" x2="0" y2="521"><stop offset="0" stop-color="#84cdf6"/><stop offset="1" stop-color="#b6e3fa"/></linearGradient>
<linearGradient id="bandD" gradientUnits="userSpaceOnUse" x1="0" y1="535" x2="0" y2="628"><stop offset="0" stop-color="#b2e1fa"/><stop offset="1" stop-color="#9ad5f7"/></linearGradient>
<linearGradient id="glowTop" gradientUnits="userSpaceOnUse" x1="1491" y1="340" x2="1411" y2="290"><stop offset="0" stop-color="#30b0ff"/><stop offset="1" stop-color="#0a70c8" stop-opacity="0.6"/></linearGradient>
</defs>
<path d="M500 98Q690 128 960 208" stroke="#0b4c92" stroke-width="12" fill="none" opacity="0.25" filter="url(#blur4)"/>
<polygon points="1411,270 1497,336 1411,352" fill="#0c94ec" filter="url(#blur10)"/>
<polygon points="1411,300 1493,338 1411,350" fill="#30b4fa" filter="url(#blur2)"/>
<polygon points="1411,705 1494,720 1411,800" fill="#0a88e2" filter="url(#blur10)"/>
<rect x="1411" y="519" width="80" height="18" fill="#074a8a"/>
<polygon points="1411,349 1491,340 1491,407 1411,394" fill="#0a90e8"/>
<polygon points="1411,394 1491,407 1491,439 1411,429" fill="#4ab2f2"/>
<polygon points="1411,429 1491,439 1491,521 1411,521" fill="url(#bandC)"/>
<polygon points="1411,535 1490,535 1490,620 1411,630" fill="url(#bandD)"/>
<polygon points="1411,630 1490,620 1490,654 1411,663" fill="#74c4f4"/>
<polygon points="1411,663 1490,654 1490,718 1411,708.5" fill="#0a8ee8"/>
<g filter="url(#blur2)">
<polygon points="1411,320 1492,340 1411,350" fill="#9edcff"/>
<line x1="1411" y1="394" x2="1491" y2="407" stroke="#c8ecff" stroke-width="2"/>
<line x1="1411" y1="429" x2="1491" y2="439" stroke="#eef8ff" stroke-width="3"/>
<line x1="1411" y1="630" x2="1490" y2="620" stroke="#eef8ff" stroke-width="3"/>
<line x1="1411" y1="663" x2="1490" y2="654" stroke="#a8dcfa" stroke-width="1.5"/>
<line x1="1411" y1="708.5" x2="1490" y2="718" stroke="#d8f2ff" stroke-width="2"/>
<line x1="1491" y1="340" x2="1490" y2="718" stroke="#e8f8ff" stroke-width="2.5"/>
<line x1="1411" y1="349" x2="1491" y2="340" stroke="#d0f0ff" stroke-width="2"/>
</g>
<ellipse cx="1452" cy="727" rx="38" ry="9" fill="#c0ecff" filter="url(#blur10)" opacity="0.9"/>
<circle cx="1491" cy="340" r="4" fill="#fff" filter="url(#blur2)"/>
<circle cx="1490" cy="718" r="4" fill="#fff" filter="url(#blur2)"/>
</svg>
<svg style="left:21px;top:12px" width="38" height="44"><path d="M1 0H26V36L1 38Z" fill="#f3cd62"/><path d="M1 1L9 3.5V39L1 37Z" fill="#fbe08c"/><circle cx="24" cy="19" r="7" fill="#c8a184"/><path d="M16.5 17Q17 9 24 9Q31 9 31.5 17Q30 12.5 24 13Q18.5 13 16.5 17Z" fill="#2a2a2a"/><path d="M11 42Q12 28 24 27Q36 28 37 42Z" fill="#4a9a6a"/><path d="M22 27.5L24 33L26 27.5" fill="#eaf4ea"/></svg>
<div class="t" style="left:-3px;top:60.18px;font-size:11.6px;transform-origin:50% 0;transform:scaleX(0.9791);color:#fff;width:80px;text-align:center;text-shadow:0 0 2px #000,0 1px 1px #000;">LeVanMai</div>
<svg style="left:90px;top:14px" width="48" height="38"><path d="M6 30Q0 26 3 19Q2 11 10 9Q14 1 23 3Q30 -1 36 5Q45 6 45 15Q48 22 44 28Q44 35 36 36H10Q4 36 6 30Z" fill="#fff" stroke="#111" stroke-width="1.5"/><g transform="translate(16 21)"><rect x="-2.10" y="-9.38" width="4.20" height="3.75" fill="#111" transform="rotate(0)"/><rect x="-2.10" y="-9.38" width="4.20" height="3.75" fill="#111" transform="rotate(45)"/><rect x="-2.10" y="-9.38" width="4.20" height="3.75" fill="#111" transform="rotate(90)"/><rect x="-2.10" y="-9.38" width="4.20" height="3.75" fill="#111" transform="rotate(135)"/><rect x="-2.10" y="-9.38" width="4.20" height="3.75" fill="#111" transform="rotate(180)"/><rect x="-2.10" y="-9.38" width="4.20" height="3.75" fill="#111" transform="rotate(225)"/><rect x="-2.10" y="-9.38" width="4.20" height="3.75" fill="#111" transform="rotate(270)"/><rect x="-2.10" y="-9.38" width="4.20" height="3.75" fill="#111" transform="rotate(315)"/><circle r="7.5" fill="#111"/><circle r="4.12" fill="#fff"/><circle r="2.25" fill="#111"/></g><g transform="translate(29 10)"><rect x="-1.40" y="-6.25" width="2.80" height="2.50" fill="#111" transform="rotate(0)"/><rect x="-1.40" y="-6.25" width="2.80" height="2.50" fill="#111" transform="rotate(45)"/><rect x="-1.40" y="-6.25" width="2.80" height="2.50" fill="#111" transform="rotate(90)"/><rect x="-1.40" y="-6.25" width="2.80" height="2.50" fill="#111" transform="rotate(135)"/><rect x="-1.40" y="-6.25" width="2.80" height="2.50" fill="#111" transform="rotate(180)"/><rect x="-1.40" y="-6.25" width="2.80" height="2.50" fill="#111" transform="rotate(225)"/><rect x="-1.40" y="-6.25" width="2.80" height="2.50" fill="#111" transform="rotate(270)"/><rect x="-1.40" y="-6.25" width="2.80" height="2.50" fill="#111" transform="rotate(315)"/><circle r="5" fill="#111"/><circle r="2.75" fill="#fff"/><circle r="1.50" fill="#111"/></g><g transform="translate(36 22)"><rect x="-1.82" y="-8.12" width="3.64" height="3.25" fill="#111" transform="rotate(0)"/><rect x="-1.82" y="-8.12" width="3.64" height="3.25" fill="#111" transform="rotate(45)"/><rect x="-1.82" y="-8.12" width="3.64" height="3.25" fill="#111" transform="rotate(90)"/><rect x="-1.82" y="-8.12" width="3.64" height="3.25" fill="#111" transform="rotate(135)"/><rect x="-1.82" y="-8.12" width="3.64" height="3.25" fill="#111" transform="rotate(180)"/><rect x="-1.82" y="-8.12" width="3.64" height="3.25" fill="#111" transform="rotate(225)"/><rect x="-1.82" y="-8.12" width="3.64" height="3.25" fill="#111" transform="rotate(270)"/><rect x="-1.82" y="-8.12" width="3.64" height="3.25" fill="#111" transform="rotate(315)"/><circle r="6.5" fill="#111"/><circle r="3.58" fill="#fff"/><circle r="1.95" fill="#111"/></g></svg>
<svg style="left:90px;top:42px" width="13" height="13"><rect x="0.5" y="0.5" width="12" height="12" fill="#f8f8f8" stroke="#c8ccd0" stroke-width="1"/><path d="M3.4 11.6Q2.8 7.6 6.6 5.8L5.2 4.4L10.9 3L9.8 8.6L8.3 7.3Q5.2 8.6 3.4 11.6Z" fill="#2f64b8"/></svg>
<div class="t" style="left:73px;top:60.18px;font-size:11.6px;transform-origin:50% 0;transform:scaleX(0.9900);color:#fff;width:80px;text-align:center;text-shadow:0 0 2px #000,0 1px 1px #000;">AirExplorer</div>
<svg style="left:14px;top:105px" width="13" height="13"><rect x="0.5" y="0.5" width="12" height="12" fill="#fff" stroke="#888"/><path d="M2.5 6.5L5 9L10 3" stroke="#222" stroke-width="1.4" fill="none"/></svg>
<svg style="left:16px;top:110px" width="44" height="41"><path d="M13 0.5L43 6V30L13 25Z" fill="#d8e2ea"/><path d="M14 2L42 7.2V28.5L14 23.8Z" fill="#3cb0f4"/><path d="M14 2L42 7.2V16L14 14Z" fill="#64c4f8" opacity="0.6"/><path d="M25 27L33 28.5V31L26 30Z" fill="#c8d0d6"/><path d="M21 30L37 32L34 35L19 33Z" fill="#e4e8ec"/><path d="M2 33L20 34L14 40L0 38.5Z" fill="#f0f2f4" stroke="#b0b8c0" stroke-width="0.5"/></svg>
<div class="t" style="left:-3px;top:158.18px;font-size:11.6px;transform-origin:50% 0;transform:scaleX(0.9454);color:#fff;width:80px;text-align:center;text-shadow:0 0 2px #000,0 1px 1px #000;">This PC</div>
<svg style="left:89px;top:104px" width="50" height="50"><circle cx="25" cy="25" r="24" fill="#f4f6f8"/><circle cx="25" cy="25" r="19.5" fill="#1a8ad8"/><circle cx="25" cy="25" r="19.5" fill="none" stroke="#0e6ab8" stroke-width="2"/><circle cx="25" cy="24" r="12" fill="#eef2f6"/><path d="M27 35L33 32L30 39Z" fill="#eef2f6"/></svg>
<svg style="left:90px;top:140px" width="13" height="13"><rect x="0.5" y="0.5" width="12" height="12" fill="#f8f8f8" stroke="#c8ccd0" stroke-width="1"/><path d="M3.4 11.6Q2.8 7.6 6.6 5.8L5.2 4.4L10.9 3L9.8 8.6L8.3 7.3Q5.2 8.6 3.4 11.6Z" fill="#2f64b8"/></svg>
<div class="t" style="left:73px;top:158.18px;font-size:11.6px;transform-origin:50% 0;transform:scaleX(0.9771);color:#fff;width:80px;text-align:center;text-shadow:0 0 2px #000,0 1px 1px #000;">Degoo</div>
<svg style="left:15px;top:203px" width="46" height="46"><defs><radialGradient id="ffg" cx="0.45" cy="0.15" r="0.95"><stop offset="0" stop-color="#5ccaf4"/><stop offset="0.5" stop-color="#1f78c8"/><stop offset="1" stop-color="#1a2a70"/></radialGradient><linearGradient id="ffo" x1="0" y1="0.5" x2="1" y2="0.3"><stop offset="0" stop-color="#e8561c"/><stop offset="0.6" stop-color="#f07a20"/><stop offset="1" stop-color="#fcd030"/></linearGradient></defs><circle cx="23" cy="23.2" r="21.3" fill="url(#ffo)"/><circle cx="27" cy="18.5" r="15.5" fill="url(#ffg)"/><path d="M36 6.5A19.3 19.3 0 0 1 38 37" stroke="#f8b02a" stroke-width="5" fill="none"/><path d="M38.5 9Q44 15 43 26" stroke="#fff2a0" stroke-width="1.5" fill="none" opacity="0.7"/><path d="M5.4 6.5L9.5 12Q14 9 19.5 10.5L23 14L19.5 15.5Q16 17 15.5 21Q16 26 23 27.5L30 27.5Q24 32 17 31Q8 28 6 19Z" fill="#ec6a1e"/><path d="M2 23Q4 38 16 42Q26 45 36 40Q26 42 18 38Q8 33 6 22Z" fill="#e45a1a"/></svg>
<svg style="left:14px;top:238px" width="13" height="13"><rect x="0.5" y="0.5" width="12" height="12" fill="#f8f8f8" stroke="#c8ccd0" stroke-width="1"/><path d="M3.4 11.6Q2.8 7.6 6.6 5.8L5.2 4.4L10.9 3L9.8 8.6L8.3 7.3Q5.2 8.6 3.4 11.6Z" fill="#2f64b8"/></svg>
<div class="t" style="left:-3px;top:256.18px;font-size:11.6px;transform-origin:50% 0;transform:scaleX(0.9872);color:#fff;width:80px;text-align:center;text-shadow:0 0 2px #000,0 1px 1px #000;">Firefox</div>
<svg style="left:90px;top:203px" width="48" height="48"><circle cx="24" cy="24" r="23" fill="#1a50d0"/><circle cx="24" cy="24" r="21" fill="#4a86e8"/><ellipse cx="20" cy="14" rx="12" ry="8" fill="#8ab8f8" opacity="0.7"/><path d="M15 14Q15 5 25 5Q35 5 35 13Q35 19 29 22Q27 24 27 28H21Q20 21 26 17Q29 15 28 12Q27 10 25 10Q21 10 21 15Z" fill="#f4ec20" stroke="#222" stroke-width="1.2"/><rect x="21" y="30" width="6" height="6" fill="#f4ec20" stroke="#222" stroke-width="1.2"/><text x="27" y="45" font-family="Liberation Sans" font-weight="bold" font-size="10" fill="#c8d4e8" text-anchor="middle">FLY</text></svg>
<svg style="left:90px;top:238px" width="13" height="13"><rect x="0.5" y="0.5" width="12" height="12" fill="#f8f8f8" stroke="#c8ccd0" stroke-width="1"/><path d="M3.4 11.6Q2.8 7.6 6.6 5.8L5.2 4.4L10.9 3L9.8 8.6L8.3 7.3Q5.2 8.6 3.4 11.6Z" fill="#2f64b8"/></svg>
<div class="t" style="left:73px;top:256.18px;font-size:11.6px;transform-origin:50% 0;transform:scaleX(0.9778);color:#fff;width:80px;text-align:center;text-shadow:0 0 2px #000,0 1px 1px #000;">Fly Help</div>
<svg style="left:14px;top:300px" width="48" height="48"><defs><radialGradient id="jg" cx="0.45" cy="0.4" r="0.65"><stop offset="0" stop-color="#3a5ab8"/><stop offset="0.8" stop-color="#26328a"/><stop offset="1" stop-color="#5a8ac8"/></radialGradient><linearGradient id="jf" x1="0" y1="0" x2="0" y2="1"><stop offset="0" stop-color="#f0f0f4"/><stop offset="1" stop-color="#9a9ac0"/></linearGradient></defs><circle cx="24.3" cy="25" r="23" fill="#1a1e30"/><circle cx="24.3" cy="25" r="22" fill="url(#jg)"/><ellipse cx="34" cy="12" rx="6.5" ry="2.8" fill="#8ac4e4" opacity="0.85" transform="rotate(32 34 12)"/><path d="M2.5 36.5Q14 38.5 24 34Q34 30 46 34.5A22 22 0 0 1 2.5 36.5Z" fill="#2ea6da"/><path d="M13.3 10Q31 12 35.8 31L18 34.7Q20 20 13.3 10Z" fill="url(#jf)" stroke="#111" stroke-width="1.3"/><path d="M3 38.5Q14 38 24 34Q34 30 45.5 34.5" stroke="#111" stroke-width="2.8" fill="none"/><path d="M8 38Q16 37 24 34Q30 31.5 36 31.8" stroke="#f4f4f4" stroke-width="1.3" fill="none"/><path d="M36 25.5L46 28.5V37Q46 44 36 47.5Q26 44 26 37V28.5Z" fill="#f2b024" stroke="#333" stroke-width="1"/><path d="M36 26.5V47M26.5 36.5H45.5" stroke="#fff" stroke-width="1.3"/><path d="M36 26.5L45.3 29.2V36.5H36Z M26.7 36.5H36V46.8Q26.7 43.5 26.7 37Z" fill="#2a7ad8"/></svg>
<svg style="left:14px;top:336px" width="13" height="13"><rect x="0.5" y="0.5" width="12" height="12" fill="#f8f8f8" stroke="#c8ccd0" stroke-width="1"/><path d="M3.4 11.6Q2.8 7.6 6.6 5.8L5.2 4.4L10.9 3L9.8 8.6L8.3 7.3Q5.2 8.6 3.4 11.6Z" fill="#2f64b8"/></svg>
<div class="t" style="left:-3px;top:354.18px;font-size:11.6px;transform-origin:50% 0;transform:scaleX(0.9098);color:#fff;width:80px;text-align:center;text-shadow:0 0 2px #000,0 1px 1px #000;">JAWS 17.0</div>
<svg style="left:14px;top:398px" width="48" height="48"><defs><radialGradient id="jg" cx="0.45" cy="0.4" r="0.65"><stop offset="0" stop-color="#3a5ab8"/><stop offset="0.8" stop-color="#26328a"/><stop offset="1" stop-color="#5a8ac8"/></radialGradient><linearGradient id="jf" x1="0" y1="0" x2="0" y2="1"><stop offset="0" stop-color="#f0f0f4"/><stop offset="1" stop-color="#9a9ac0"/></linearGradient></defs><circle cx="24.3" cy="25" r="23" fill="#1a1e30"/><circle cx="24.3" cy="25" r="22" fill="url(#jg)"/><ellipse cx="34" cy="12" rx="6.5" ry="2.8" fill="#8ac4e4" opacity="0.85" transform="rotate(32 34 12)"/><path d="M2.5 36.5Q14 38.5 24 34Q34 30 46 34.5A22 22 0 0 1 2.5 36.5Z" fill="#2ea6da"/><path d="M13.3 10Q31 12 35.8 31L18 34.7Q20 20 13.3 10Z" fill="url(#jf)" stroke="#111" stroke-width="1.3"/><path d="M3 38.5Q14 38 24 34Q34 30 45.5 34.5" stroke="#111" stroke-width="2.8" fill="none"/><path d="M8 38Q16 37 24 34Q30 31.5 36 31.8" stroke="#f4f4f4" stroke-width="1.3" fill="none"/></svg>
<svg style="left:14px;top:434px" width="13" height="13"><rect x="0.5" y="0.5" width="12" height="12" fill="#f8f8f8" stroke="#c8ccd0" stroke-width="1"/><path d="M3.4 11.6Q2.8 7.6 6.6 5.8L5.2 4.4L10.9 3L9.8 8.6L8.3 7.3Q5.2 8.6 3.4 11.6Z" fill="#2f64b8"/></svg>
<div class="t" style="left:-3px;top:452.18px;font-size:11.6px;transform-origin:50% 0;transform:scaleX(0.9098);color:#fff;width:80px;text-align:center;text-shadow:0 0 2px #000,0 1px 1px #000;">JAWS 18.0</div>
<svg style="left:14px;top:496px" width="48" height="48"><defs><radialGradient id="jg" cx="0.45" cy="0.4" r="0.65"><stop offset="0" stop-color="#3a5ab8"/><stop offset="0.8" stop-color="#26328a"/><stop offset="1" stop-color="#5a8ac8"/></radialGradient><linearGradient id="jf" x1="0" y1="0" x2="0" y2="1"><stop offset="0" stop-color="#f0f0f4"/><stop offset="1" stop-color="#9a9ac0"/></linearGradient></defs><circle cx="24.3" cy="25" r="23" fill="#1a1e30"/><circle cx="24.3" cy="25" r="22" fill="url(#jg)"/><ellipse cx="34" cy="12" rx="6.5" ry="2.8" fill="#8ac4e4" opacity="0.85" transform="rotate(32 34 12)"/><path d="M2.5 36.5Q14 38.5 24 34Q34 30 46 34.5A22 22 0 0 1 2.5 36.5Z" fill="#2ea6da"/><path d="M13.3 10Q31 12 35.8 31L18 34.7Q20 20 13.3 10Z" fill="url(#jf)" stroke="#111" stroke-width="1.3"/><path d="M3 38.5Q14 38 24 34Q34 30 45.5 34.5" stroke="#111" stroke-width="2.8" fill="none"/><path d="M8 38Q16 37 24 34Q30 31.5 36 31.8" stroke="#f4f4f4" stroke-width="1.3" fill="none"/></svg>
<svg style="left:14px;top:532px" width="13" height="13"><rect x="0.5" y="0.5" width="12" height="12" fill="#f8f8f8" stroke="#c8ccd0" stroke-width="1"/><path d="M3.4 11.6Q2.8 7.6 6.6 5.8L5.2 4.4L10.9 3L9.8 8.6L8.3 7.3Q5.2 8.6 3.4 11.6Z" fill="#2f64b8"/></svg>
<div class="t" style="left:-3px;top:550.18px;font-size:11.6px;transform-origin:50% 0;transform:scaleX(0.9043);color:#fff;width:80px;text-align:center;text-shadow:0 0 2px #000,0 1px 1px #000;">JAWS 2018</div>
<svg style="left:97px;top:305px" width="28" height="41"><path d="M2 0H22V34L2 38Z" fill="#e8b845"/><path d="M0 2L8 0.5V38L0 36Z" fill="#f8dc80"/><path d="M7 1H26V37H7Z" fill="#f5d06a"/><path d="M7 1L11 3V39L7 37Z" fill="#fbe49a"/></svg>
<svg style="left:90px;top:336px" width="13" height="13"><rect x="0.5" y="0.5" width="12" height="12" fill="#f8f8f8" stroke="#c8ccd0" stroke-width="1"/><path d="M3.4 11.6Q2.8 7.6 6.6 5.8L5.2 4.4L10.9 3L9.8 8.6L8.3 7.3Q5.2 8.6 3.4 11.6Z" fill="#2f64b8"/></svg>
<div class="t" style="left:73px;top:354.18px;font-size:11.6px;transform-origin:50% 0;transform:scaleX(0.9905);color:#fff;width:80px;text-align:center;text-shadow:0 0 2px #000,0 1px 1px #000;">Kiem Hiep</div>
<svg style="left:97px;top:403px" width="28" height="41"><path d="M2 0H22V34L2 38Z" fill="#e8b845"/><path d="M0 2L8 0.5V38L0 36Z" fill="#f8dc80"/><path d="M7 1H26V37H7Z" fill="#f5d06a"/><path d="M7 1L11 3V39L7 37Z" fill="#fbe49a"/></svg>
<svg style="left:109px;top:412px" width="23" height="30"><path d="M0.5 0.5H16L22 6V29H0.5Z" fill="#fff" stroke="#8a96a8" stroke-width="1"/><text x="3" y="10" font-family="Liberation Serif" font-style="italic" font-weight="bold" font-size="9" fill="#2060c0">A</text><path d="M10 6H19M10 9H19M3 13H19M3 16H19" stroke="#6a8ac0" stroke-width="1"/><rect x="11" y="18" width="8" height="7" fill="#4a80a0"/></svg>
<svg style="left:90px;top:434px" width="13" height="13"><rect x="0.5" y="0.5" width="12" height="12" fill="#f8f8f8" stroke="#c8ccd0" stroke-width="1"/><path d="M3.4 11.6Q2.8 7.6 6.6 5.8L5.2 4.4L10.9 3L9.8 8.6L8.3 7.3Q5.2 8.6 3.4 11.6Z" fill="#2f64b8"/></svg>
<div class="t" style="left:73px;top:452.18px;font-size:11.6px;transform-origin:50% 0;transform:scaleX(1.2287);color:#fff;width:80px;text-align:center;text-shadow:0 0 2px #000,0 1px 1px #000;">My</div>
<div class="t" style="left:73px;top:467.18px;font-size:11.6px;transform-origin:50% 0;transform:scaleX(0.8863);color:#fff;width:80px;text-align:center;text-shadow:0 0 2px #000,0 1px 1px #000;">Documents</div>
<svg style="left:92px;top:499px" width="48" height="46"><path d="M1 6L20 3V20H1Z M22 2.7L44 0V20H22Z M1 22H20V39L1 36Z M22 22H44V42L22 39Z" fill="#1ab4e8"/><path d="M34 22.5L44 25.5V34Q44 41 34 44.5Q24 41 24 34V25.5Z" fill="#f2b024" stroke="#333" stroke-width="1"/><path d="M34 23.5V44M24.5 33.5H43.5" stroke="#fff" stroke-width="1.3"/><path d="M34 23.5L43.3 26.2V33.5H34Z M24.7 33.5H34V43.8Q24.7 40.5 24.7 34Z" fill="#2a7ad8"/></svg>
<svg style="left:90px;top:532px" width="13" height="13"><rect x="0.5" y="0.5" width="12" height="12" fill="#f8f8f8" stroke="#c8ccd0" stroke-width="1"/><path d="M3.4 11.6Q2.8 7.6 6.6 5.8L5.2 4.4L10.9 3L9.8 8.6L8.3 7.3Q5.2 8.6 3.4 11.6Z" fill="#2f64b8"/></svg>
<div class="t" style="left:73px;top:550.18px;font-size:11.6px;transform-origin:50% 0;transform:scaleX(0.9180);color:#fff;width:80px;text-align:center;text-shadow:0 0 2px #000,0 1px 1px #000;">Windows 10</div>
<div class="t" style="left:73px;top:565.18px;font-size:11.6px;transform-origin:50% 0;transform:scaleX(0.8015);color:#fff;width:80px;text-align:center;text-shadow:0 0 2px #000,0 1px 1px #000;">Upgrade ...</div>
<svg style="left:15px;top:597px" width="46" height="46"><circle cx="23" cy="23" r="22" fill="#1e1e1e"/><path d="M2 28Q20 20 44 14L45 20Q24 26 3 34Z" fill="#4a3020" opacity="0.7"/><path d="M10 22Q14 12 26 12Q36 13 34 20Q32 27 22 29Q14 30 10 22Z" fill="#f39a1a"/><path d="M8 32Q10 26 18 25Q26 24 28 28Q26 34 16 35Q10 36 8 32Z" fill="#f0a020"/><ellipse cx="24" cy="19" rx="6" ry="3" fill="#1e1e1e"/></svg>
<svg style="left:14px;top:630px" width="13" height="13"><rect x="0.5" y="0.5" width="12" height="12" fill="#f8f8f8" stroke="#c8ccd0" stroke-width="1"/><path d="M3.4 11.6Q2.8 7.6 6.6 5.8L5.2 4.4L10.9 3L9.8 8.6L8.3 7.3Q5.2 8.6 3.4 11.6Z" fill="#2f64b8"/></svg>
<div class="t" style="left:-3px;top:648.18px;font-size:11.6px;transform-origin:50% 0;transform:scaleX(1.0734);color:#fff;width:80px;text-align:center;text-shadow:0 0 2px #000,0 1px 1px #000;">jetAudio</div>
<svg style="left:14px;top:693px" width="48" height="48"><rect width="48" height="48" fill="#fff"/><path d="M3 4H20Q23 4 23 7V19H18.5V8.5H15V19H10.5V8.5H7.5V19H3Z" fill="#111"/><path d="M4 19H23" stroke="#888" stroke-width="1"/><path d="M33 5V14" stroke="#1a2ae0" stroke-width="2"/><circle cx="31" cy="14.5" r="2.6" fill="#1a2ae0"/><path d="M40 4V12M40 4H44V8" stroke="#18a0a0" stroke-width="2" fill="none"/><circle cx="38" cy="12.5" r="2.4" fill="#18a0a0"/><path d="M46 2V9" stroke="#8020c0" stroke-width="2"/><circle cx="43" cy="15" r="2.8" fill="#f01818"/><path d="M25 16V34Q25 36 29 36M21 22H30" stroke="#f01818" stroke-width="3" fill="none"/><path d="M43 14V36M43 26Q42 21 37 21Q32 21 32 28.5Q32 36 37 36Q42 36 43 31" stroke="#f01818" stroke-width="3" fill="none"/><path d="M18 48L28 38L36 34L44 40L48 48Z" fill="#9a9a9a"/><path d="M26 44L32 38" stroke="#fff" stroke-width="1.5"/><rect x="13" y="28" width="3" height="16" fill="#20e020"/><path d="M0 31Q6 26 13 28" stroke="#1a8a9a" stroke-width="2.5" fill="none"/><path d="M44 30L48 48" stroke="#111" stroke-width="1.5"/></svg>
<svg style="left:14px;top:728px" width="13" height="13"><rect x="0.5" y="0.5" width="12" height="12" fill="#f8f8f8" stroke="#c8ccd0" stroke-width="1"/><path d="M3.4 11.6Q2.8 7.6 6.6 5.8L5.2 4.4L10.9 3L9.8 8.6L8.3 7.3Q5.2 8.6 3.4 11.6Z" fill="#2f64b8"/></svg>
<div class="t" style="left:-3px;top:746.18px;font-size:11.6px;transform-origin:50% 0;transform:scaleX(0.9501);color:#fff;width:80px;text-align:center;text-shadow:0 0 2px #000,0 1px 1px #000;">LAC VIET</div>
<div class="t" style="left:-3px;top:761.18px;font-size:11.6px;transform-origin:50% 0;transform:scaleX(1.0319);color:#fff;width:80px;text-align:center;text-shadow:0 0 2px #000,0 1px 1px #000;">mtd9 EVA</div>
<svg style="left:14px;top:791px" width="48" height="48"><rect width="48" height="48" fill="#6a0f9c"/><path d="M10.5 38V10.5L29 37Q42 37 42 23.5Q42 11 30 10.5" stroke="#fff" stroke-width="7.5" fill="none" stroke-linecap="round" stroke-linejoin="round"/></svg>
<svg style="left:14px;top:826px" width="13" height="13"><rect x="0.5" y="0.5" width="12" height="12" fill="#f8f8f8" stroke="#c8ccd0" stroke-width="1"/><path d="M3.4 11.6Q2.8 7.6 6.6 5.8L5.2 4.4L10.9 3L9.8 8.6L8.3 7.3Q5.2 8.6 3.4 11.6Z" fill="#2f64b8"/></svg>
<div class="t" style="left:-3px;top:844.18px;font-size:11.6px;transform-origin:50% 0;transform:scaleX(0.9308);color:#fff;width:80px;text-align:center;text-shadow:0 0 2px #000,0 1px 1px #000;">NVDA</div>
<svg style="left:15px;top:889px" width="46" height="46"><circle cx="14" cy="14" r="12" fill="#1aa8e8"/><circle cx="32" cy="32" r="12" fill="#1aa8e8"/><circle cx="23" cy="23" r="19" fill="#1aa8e8"/><text x="24" y="36" font-family="Liberation Sans" font-weight="bold" font-size="35" fill="#fff" text-anchor="middle">S</text></svg>
<svg style="left:14px;top:924px" width="13" height="13"><rect x="0.5" y="0.5" width="12" height="12" fill="#f8f8f8" stroke="#c8ccd0" stroke-width="1"/><path d="M3.4 11.6Q2.8 7.6 6.6 5.8L5.2 4.4L10.9 3L9.8 8.6L8.3 7.3Q5.2 8.6 3.4 11.6Z" fill="#2f64b8"/></svg>
<div class="t" style="left:-3px;top:942.18px;font-size:11.6px;transform-origin:50% 0;transform:scaleX(0.9305);color:#fff;width:80px;text-align:center;text-shadow:0 0 2px #000,0 1px 1px #000;">Skype</div>
<div class="a" style="left:287px;top:194px;width:1125px;height:634px;background:#fff;border:1px solid rgba(70,80,90,0.6);"></div>
<div class="a" style="left:1292px;top:209px;width:11px;height:1px;background:#8a8a8a"></div>
<div class="a" style="left:1337px;top:204px;width:11px;height:11px;border:1px solid #8a8a8a"></div>
<svg style="left:1383px;top:204px" width="11" height="11"><path d="M0.5 0.5L10.5 10.5M10.5 0.5L0.5 10.5" stroke="#8a8a8a" stroke-width="1"/></svg>
<div class="a" style="left:560px;top:231px;width:589px;height:22px;border:1px solid #d9d9d9;"></div>
<div class="a" style="left:1128px;top:232px;width:1px;height:20px;background:#d9d9d9"></div>
<svg style="left:1114px;top:239px" width="11" height="8"><path d="M1 1.5L5 5.5L9 1.5" stroke="#6d6d6d" stroke-width="2" fill="none"/></svg>
<svg style="left:1133px;top:236px" width="12" height="13"><path d="M3.3 3.3A4.5 4.5 0 1 0 9.4 4.1" stroke="#6d6d6d" stroke-width="1.7" fill="none"/><path d="M2 1.6H6.5V5.6" stroke="#6d6d6d" stroke-width="1.5" fill="none"/></svg>
<div class="t" style="left:593px;top:236.68px;font-size:11.6px;transform-origin:0 0;transform:scaleX(1.0023);color:#1a1a1a;">Security</div>
<svg style="left:643px;top:238px" width="6" height="9"><path d="M1 1L4.5 4.5L1 8" stroke="#8a8a8a" stroke-width="1.5" fill="none"/></svg>
<div class="t" style="left:658px;top:236.68px;font-size:11.6px;transform-origin:0 0;transform:scaleX(0.9696);color:#1a1a1a;">System</div>
<div class="a" style="left:1161px;top:231px;width:238px;height:22px;border:1px solid #d9d9d9;"></div>
<div class="t" style="left:1170px;top:236.68px;font-size:11.6px;transform-origin:0 0;transform:scaleX(0.9976);color:#6d6d6d;">Search Control Panel</div>
<svg style="left:1377px;top:235px" width="14" height="14"><circle cx="8.5" cy="5.5" r="3.6" stroke="#666" stroke-width="1.7" fill="none"/><path d="M6 8L1.5 12.5" stroke="#666" stroke-width="2"/></svg>
<div class="a" style="left:289px;top:280px;width:1121px;height:1px;background:#dcdcdc"></div>
<svg style="left:1392px;top:282px" width="18" height="18"><circle cx="9" cy="9" r="8.2" fill="#1a5cb8" stroke="#0f3f8a" stroke-width="0.8"/><text x="9" y="13.8" font-family="Liberation Sans" font-weight="bold" font-size="13" fill="#fff" text-anchor="middle">?</text></svg>
<div class="t" style="left:820px;top:302.96px;font-size:16px;transform-origin:100% 0;transform:translateX(-100%) scaleX(1.0027);color:#0c2c9c;-webkit-text-stroke:0.2px #fff">View basic information about your computer</div>
<div class="t" style="left:599.5px;top:338.18px;font-size:11.6px;transform-origin:100% 0;transform:translateX(-100%) scaleX(1.0200);">Windows edition</div>
<div class="a" style="left:602px;top:344px;width:798px;height:1px;background:#dcdcdc"></div>
<div class="t" style="left:616.5px;top:361.18px;font-size:11.6px;transform-origin:100% 0;transform:translateX(-100%) scaleX(1.0200);">Windows 10 Pro</div>
<div class="t" style="left:793px;top:384.78px;font-size:11.6px;transform-origin:100% 0;transform:translateX(-100%) scaleX(1.0320);">&copy; 2017 Microsoft Corporation. All rights reserved.</div>
<svg style="left:1078px;top:360px" width="58" height="58"><path d="M0 7.5L24.5 4.2V28H0Z M26.5 3.9L58 0V28H26.5Z M0 30H24.5V53.8L0 50.5Z M26.5 30H58V58L26.5 54.1Z" fill="#0a74d0"/></svg>
<div class="t" style="left:1153px;top:365.18px;font-size:49.4px;transform-origin:0 0;transform:scaleX(0.9531);color:#0a74d0;-webkit-text-stroke:1.6px #fff">Windows</div>
<div class="t" style="left:1349px;top:365.18px;font-size:49.4px;transform-origin:0 0;transform:scaleX(0.7825);color:#0a74d0;-webkit-text-stroke:1.6px #fff">10</div>
<div class="a" style="left:590px;top:437px;width:810px;height:1px;background:#dcdcdc"></div>
<div class="t" style="left:560px;top:454.68px;font-size:11.6px;transform-origin:100% 0;transform:translateX(-100%) scaleX(1.0200);">Processor:</div>
<div class="t" style="left:681.4px;top:454.68px;font-size:11.6px;transform-origin:0 0;transform:scaleX(0.9572);">Intel(R) Pentium(R) CPU G2020 @ 2.90GHz &nbsp; 2.90 GHz</div>
<div class="t" style="left:662.5px;top:476.58px;font-size:11.6px;transform-origin:100% 0;transform:translateX(-100%) scaleX(1.0200);">Installed memory (RAM):</div>
<div class="t" style="left:681.4px;top:476.58px;font-size:11.6px;transform-origin:0 0;transform:scaleX(0.9365);">4.00 GB (3.70 GB usable)</div>
<div class="t" style="left:597.5px;top:498.78px;font-size:11.6px;transform-origin:100% 0;transform:translateX(-100%) scaleX(1.0200);">System type:</div>
<div class="t" style="left:681.4px;top:498.78px;font-size:11.6px;transform-origin:0 0;transform:scaleX(1.0027);">64-bit Operating System, x64-based processor</div>
<div class="t" style="left:612.5px;top:520.68px;font-size:11.6px;transform-origin:100% 0;transform:translateX(-100%) scaleX(1.0200);">Pen and Touch:</div>
<div class="t" style="left:681.4px;top:520.68px;font-size:11.6px;transform-origin:0 0;transform:scaleX(1.0215);">No Pen or Touch Input is available for this Display</div>
<div class="t" style="left:776px;top:553.18px;font-size:11.6px;transform-origin:100% 0;transform:translateX(-100%) scaleX(1.0200);">Computer name, domain, and workgroup settings</div>
<div class="a" style="left:778px;top:560px;width:622px;height:1px;background:#dcdcdc"></div>
<div class="t" style="left:620.7px;top:578.18px;font-size:11.6px;transform-origin:100% 0;transform:translateX(-100%) scaleX(1.0200);">Computer name:</div>
<div class="t" style="left:681.4px;top:578.18px;font-size:11.6px;transform-origin:0 0;transform:scaleX(0.9428);">Levan</div>
<div class="t" style="left:640px;top:600.68px;font-size:11.6px;transform-origin:100% 0;transform:translateX(-100%) scaleX(1.0200);">Full computer name:</div>
<div class="t" style="left:681.4px;top:600.68px;font-size:11.6px;transform-origin:0 0;transform:scaleX(0.9428);">Levan</div>
<div class="t" style="left:649.8px;top:623.78px;font-size:11.6px;transform-origin:100% 0;transform:translateX(-100%) scaleX(1.0200);">Computer description:</div>
<div class="t" style="left:593.3px;top:646.58px;font-size:11.6px;transform-origin:100% 0;transform:translateX(-100%) scaleX(1.0200);">Workgroup:</div>
<div class="t" style="left:681.4px;top:646.58px;font-size:11.6px;transform-origin:0 0;transform:scaleX(0.9030);">WORKGROUP</div>
<svg style="left:1286px;top:576px" width="15" height="16"><path d="M7.5 0.5L14 2.5V8C14 11.5 11 14 7.5 15.5C4 14 1 11.5 1 8V2.5Z" fill="#3a3a3a"/><path d="M7.5 2L12.6 3.6V8C12.6 10.8 10.3 12.8 7.5 14C4.7 12.8 2.4 10.8 2.4 8V3.6Z" fill="#f4b400"/><path d="M7.5 2V8H12.6V3.6Z M7.5 8V14C4.7 12.8 2.4 10.8 2.4 8Z" fill="#1e6fd0"/></svg>
<div class="t" style="left:1301.5px;top:578.18px;font-size:11.6px;transform-origin:0 0;transform:scaleX(1.0020);color:#0066cc;">Change settings</div>
<div class="t" style="left:614.5px;top:679.18px;font-size:11.6px;transform-origin:100% 0;transform:translateX(-100%) scaleX(1.0200);">Windows activation</div>
<div class="a" style="left:617px;top:687px;width:783px;height:1px;background:#dcdcdc"></div>
<div class="t" style="left:594.5px;top:704.18px;font-size:11.6px;transform-origin:0 0;transform:scaleX(1.0058);">activated</div>
<div class="t" style="left:652.6px;top:704.18px;font-size:11.6px;transform-origin:0 0;transform:scaleX(1.0029);color:#0066cc;">Read the Microsoft Software License Terms</div>
<div class="t" style="left:595.5px;top:733.18px;font-size:11.6px;transform-origin:0 0;transform:scaleX(0.9616);">00330-80000-00000-AA962</div>
<svg style="left:1268px;top:732px" width="15" height="16"><path d="M7.5 0.5L14 2.5V8C14 11.5 11 14 7.5 15.5C4 14 1 11.5 1 8V2.5Z" fill="#3a3a3a"/><path d="M7.5 2L12.6 3.6V8C12.6 10.8 10.3 12.8 7.5 14C4.7 12.8 2.4 10.8 2.4 8V3.6Z" fill="#f4b400"/><path d="M7.5 2V8H12.6V3.6Z M7.5 8V14C4.7 12.8 2.4 10.8 2.4 8Z" fill="#1e6fd0"/></svg>
<div class="t" style="left:1283.4px;top:734.18px;font-size:11.6px;transform-origin:0 0;transform:scaleX(1.0267);color:#0066cc;">Change product key</div>
<div class="a" style="left:137px;top:130px;width:412px;height:468px;background:#f0f0f0;border:1px solid rgba(70,80,90,0.6);"></div>
<div class="a" style="left:138px;top:131px;width:410px;height:30px;background:#fff"></div>
<div class="t" style="left:146.3px;top:140.18px;font-size:11.6px;transform-origin:0 0;transform:scaleX(0.9845);color:#8a8a8a;">System Properties</div>
<svg style="left:528px;top:140px" width="11" height="11"><path d="M0.5 0.5L10.5 10.5M10.5 0.5L0.5 10.5" stroke="#8a8a8a" stroke-width="1"/></svg>
<div class="a" style="left:144px;top:188px;width:396px;height:372px;background:#fff;border:1px solid #d9d9d9"></div>
<div class="a" style="left:146px;top:170px;width:88px;height:19px;background:#f0f0f0;border:1px solid #d9d9d9;border-bottom:none"></div>
<div class="t" style="left:146px;top:174.18px;font-size:11.6px;transform-origin:50% 0;transform:scaleX(0.8907);width:87px;text-align:center;">Computer Name</div>
<div class="a" style="left:233px;top:170px;width:59px;height:19px;background:#f0f0f0;border:1px solid #d9d9d9;border-bottom:none"></div>
<div class="t" style="left:233px;top:174.18px;font-size:11.6px;transform-origin:50% 0;transform:scaleX(0.9108);width:58px;text-align:center;">Hardware</div>
<div class="a" style="left:291px;top:168px;width:63px;height:21px;background:#fff;border:1px solid #d9d9d9;border-bottom:none"></div>
<div class="t" style="left:291px;top:172.68px;font-size:11.6px;transform-origin:50% 0;transform:scaleX(0.9497);width:63px;text-align:center;">Advanced</div>
<div class="a" style="left:354px;top:170px;width:97px;height:19px;background:#f0f0f0;border:1px solid #d9d9d9;border-bottom:none"></div>
<div class="t" style="left:354px;top:174.18px;font-size:11.6px;transform-origin:50% 0;transform:scaleX(0.8977);width:96px;text-align:center;">System Protection</div>
<div class="a" style="left:450px;top:170px;width:50px;height:19px;background:#f0f0f0;border:1px solid #d9d9d9;border-bottom:none"></div>
<div class="t" style="left:450px;top:174.18px;font-size:11.6px;transform-origin:50% 0;transform:scaleX(0.8986);width:49px;text-align:center;">Remote</div>
<div class="t" style="left:163px;top:204.18px;font-size:11.6px;transform-origin:0 0;transform:scaleX(0.9305);">Y</div>
<div class="t" style="left:172px;top:204.18px;font-size:11.6px;transform-origin:0 0;transform:scaleX(0.9700);">ou must be logged on as an Administrator to make most of these changes.</div>
<div class="a" style="left:159px;top:232px;width:370px;height:78px;border:1px solid #dcdcdc"></div>
<div class="a" style="left:165px;top:228px;width:120px;height:10px;background:#fff"></div>
<div class="t" style="left:168px;top:227.18px;font-size:11.6px;transform-origin:0 0;transform:scaleX(0.9700);">Performance</div>
<div class="t" style="left:169px;top:244.18px;font-size:11.6px;transform-origin:0 0;transform:scaleX(0.9700);">Visual effects</div>
<div class="a" style="left:159px;top:325px;width:370px;height:77px;border:1px solid #dcdcdc"></div>
<div class="a" style="left:165px;top:321px;width:120px;height:10px;background:#fff"></div>
<div class="t" style="left:168px;top:320.18px;font-size:11.6px;transform-origin:0 0;transform:scaleX(0.9700);">User Profiles</div>
<div class="t" style="left:169px;top:337.18px;font-size:11.6px;transform-origin:0 0;transform:scaleX(0.9700);">Desktop settings</div>
<div class="a" style="left:159px;top:417px;width:370px;height:78px;border:1px solid #dcdcdc"></div>
<div class="a" style="left:165px;top:413px;width:120px;height:10px;background:#fff"></div>
<div class="t" style="left:168px;top:412.18px;font-size:11.6px;transform-origin:0 0;transform:scaleX(0.9700);">Startup and Recovery</div>
<div class="t" style="left:169px;top:429.18px;font-size:11.6px;transform-origin:0 0;transform:scaleX(0.9700);">System startup</div>
<div class="a" style="left:171px;top:206px;width:419px;height:602px;background:#f0f0f0;border:1px solid #2b79d0;"></div>
<div class="a" style="left:172px;top:207px;width:417px;height:30px;background:#fff"></div>
<div class="t" style="left:180.7px;top:215.78px;font-size:11.6px;transform-origin:0 0;transform:scaleX(1.0154);color:#000;">Performance Options</div>
<svg style="left:568px;top:215px" width="12" height="12"><path d="M0.5 0.5L11.5 11.5M11.5 0.5L0.5 11.5" stroke="#000" stroke-width="1.1"/></svg>
<div class="a" style="left:178px;top:264px;width:403px;height:506px;background:#fff;border:1px solid #d9d9d9"></div>
<div class="a" style="left:180px;top:246px;width:76px;height:19px;background:#f0f0f0;border:1px solid #d9d9d9;border-bottom:none"></div>
<div class="t" style="left:181px;top:250.18px;font-size:11.6px;transform-origin:50% 0;transform:scaleX(0.9076);width:75px;text-align:center;">Visual Effects</div>
<div class="a" style="left:255px;top:244px;width:63px;height:21px;background:#fff;border:1px solid #d9d9d9;border-bottom:none"></div>
<div class="t" style="left:255px;top:248.68px;font-size:11.6px;transform-origin:50% 0;transform:scaleX(0.9129);width:63px;text-align:center;">Advanced</div>
<div class="a" style="left:317px;top:246px;width:137px;height:19px;background:#f0f0f0;border:1px solid #d9d9d9;border-bottom:none"></div>
<div class="t" style="left:318px;top:250.18px;font-size:11.6px;transform-origin:50% 0;transform:scaleX(0.9305);width:136px;text-align:center;">Data Execution Prevention</div>
<div class="a" style="left:194px;top:288px;width:373px;height:112px;border:1px solid #dcdcdc"></div>
<div class="a" style="left:200px;top:284px;width:117px;height:10px;background:#fff"></div>
<div class="t" style="left:203.7px;top:282.48px;font-size:11.6px;transform-origin:0 0;transform:scaleX(0.9981);">Processor scheduling</div>
<div class="t" style="left:207.1px;top:305.88px;font-size:11.6px;transform-origin:0 0;transform:scaleX(1.0055);">Choose how to allocate processor resources.</div>
<div class="t" style="left:207px;top:343.18px;font-size:11.6px;transform-origin:0 0;transform:scaleX(1.0365);">Adjust for best performance of:</div>
<svg style="left:206px;top:368px" width="14" height="14"><circle cx="7" cy="7" r="6" fill="#fff" stroke="#333" stroke-width="1"/><circle cx="7" cy="7" r="3.6" fill="#333"/></svg>
<div class="a" style="left:222px;top:367px;width:53px;height:17px;border:1px dotted #000"></div>
<div class="t" style="left:223.3px;top:370.18px;font-size:11.6px;transform-origin:0 0;transform:scaleX(1.0043);"><u>P</u>rograms</div>
<svg style="left:349px;top:368px" width="14" height="14"><circle cx="7" cy="7" r="6" fill="#fff" stroke="#333" stroke-width="1"/></svg>
<div class="t" style="left:366.2px;top:370.18px;font-size:11.6px;transform-origin:0 0;transform:scaleX(0.9946);">Background <u>s</u>ervices</div>
<div class="a" style="left:194px;top:421px;width:373px;height:116px;border:1px solid #dcdcdc"></div>
<div class="a" style="left:200px;top:417px;width:88px;height:10px;background:#fff"></div>
<div class="t" style="left:203px;top:416.18px;font-size:11.6px;transform-origin:0 0;transform:scaleX(1.0516);">Virtual memory</div>
<div class="t" style="left:207px;top:439.18px;font-size:11.6px;transform-origin:0 0;transform:scaleX(1.0171);">A paging file is an area on the hard disk that Windows uses as if it</div>
<div class="t" style="left:207px;top:453.48px;font-size:11.6px;transform-origin:0 0;transform:scaleX(0.9901);">were RAM.</div>
<div class="t" style="left:207px;top:476.18px;font-size:11.6px;transform-origin:0 0;transform:scaleX(1.0165);">Total paging file size for all drives:</div>
<div class="t" style="left:439.5px;top:476.18px;font-size:11.6px;transform-origin:0 0;transform:scaleX(0.9603);">0 MB</div>
<div class="a" style="left:468px;top:500px;width:86px;height:24px;background:#e1e1e1;border:1px solid #adadad"></div>
<div class="t" style="left:468px;top:506.18px;font-size:11.6px;transform-origin:50% 0;transform:scaleX(0.9801);width:86px;text-align:center;"><u>C</u>hange...</div>
<div class="a" style="left:347px;top:778px;width:73px;height:21px;background:#e1e1e1;border:2px solid #0078d7"></div>
<div class="t" style="left:347px;top:783.18px;font-size:11.6px;transform-origin:50% 0;transform:scaleX(0.7995);width:73px;text-align:center;">OK</div>
<div class="a" style="left:428px;top:778px;width:73px;height:21px;background:#e1e1e1;border:1px solid #adadad"></div>
<div class="t" style="left:428px;top:783.18px;font-size:11.6px;transform-origin:50% 0;transform:scaleX(0.8723);width:73px;text-align:center;">Cancel</div>
<div class="a" style="left:509px;top:778px;width:73px;height:21px;background:#cccccc;border:1px solid #bfbfbf"></div>
<div class="t" style="left:509px;top:783.18px;font-size:11.6px;transform-origin:50% 0;transform:scaleX(0.8960);color:#838383;width:73px;text-align:center;"><u>A</u>pply</div>
<div class="a" style="left:0px;top:1010px;width:1680px;height:40px;background:#101010"></div>
<svg style="left:15px;top:1021px" width="18" height="18"><path d="M0.5 2.3L7 1.4V8H0.5Z M8 1.2L17 0V8H8Z M0.5 9H7V15.6L0.5 14.7Z M8 9H17V17L8 15.8Z" fill="#fff"/></svg>
<svg style="left:64px;top:1021px" width="21" height="20"><path d="M0.5 1L17 0.5L20 1.5V19L17 19.5L0.5 19Z" fill="#8cc3ea" stroke="#5a9ccc" stroke-width="0.8"/><path d="M17 0.5V19.5" stroke="#5a9ccc" stroke-width="1"/><circle cx="8.5" cy="9.5" r="6.2" fill="#f07a1c"/><path d="M6.5 6.2L12 9.5L6.5 12.8Z" fill="#fff"/></svg>
<svg style="left:112px;top:1019px" width="25" height="21"><path d="M0.5 6.5L12.3 0.5L24 6.5V20H0.5Z" fill="#fff"/><path d="M1 7.5L12 14.5L20 12L19 17L12 10.5L23.5 7.5" fill="#101010"/><path d="M2 7.8L20.5 8L12.5 11.5L19 16.5" fill="#101010"/></svg>
<svg style="left:163px;top:1017px" width="20" height="26"><rect x="0.5" y="0.5" width="18.5" height="24.5" fill="#fff"/><rect x="3" y="2.5" width="13.5" height="3.5" fill="#101010"/><path d="M3 8.5h3.5l-3.5 3z" fill="#101010"/><path d="M8 8.5h3.5l-3.5 3z" fill="#101010"/><path d="M13 8.5h3.5l-3.5 3z" fill="#101010"/><path d="M3 13.5h3.5l-3.5 3z" fill="#101010"/><path d="M8 13.5h3.5l-3.5 3z" fill="#101010"/><path d="M13 13.5h3.5l-3.5 3z" fill="#101010"/><path d="M3 18.5h3.5l-3.5 3z" fill="#101010"/><path d="M8 18.5h3.5l-3.5 3z" fill="#101010"/><path d="M13 18.5h3.5l-3.5 3z" fill="#101010"/></svg>
<div class="a" style="left:202px;top:1048px;width:152px;height:2px;background:#76b9ed"></div>
<svg style="left:211px;top:1020px" width="22" height="22"><path d="M1 3L6 1V4H15V20H6L1 21Z" fill="#e9b949"/><path d="M1 3L6 1V21L1 22Z" fill="#f7d87a"/><path d="M6 4H14V19H6Z" fill="#f3cd5e"/><rect x="8.5" y="10" width="11.5" height="10" fill="#fff" stroke="#c9d3da" stroke-width="0.6"/><path d="M9.5 11H19V19H9.5Z" fill="#6fa2cf"/><path d="M9.5 15.5Q13 13 19 16.5V19H9.5Z" fill="#3d7a4a"/></svg>
<div class="t" style="left:237px;top:1024.18px;font-size:11.6px;transform-origin:0 0;transform:scaleX(0.9784);color:#fff;">Pictures</div>
<div class="a" style="left:362px;top:1048px;width:152px;height:2px;background:#76b9ed"></div>
<svg style="left:371px;top:1020px" width="22" height="22"><path d="M1 3L6 1V4H15V20H6L1 21Z" fill="#e9b949"/><path d="M1 3L6 1V21L1 22Z" fill="#f7d87a"/><path d="M6 4H14V19H6Z" fill="#f3cd5e"/><rect x="8.5" y="10" width="11.5" height="10" fill="#fff" stroke="#c9d3da" stroke-width="0.6"/><path d="M9.5 11H19V19H9.5Z" fill="#6fa2cf"/><path d="M9.5 15.5Q13 13 19 16.5V19H9.5Z" fill="#3d7a4a"/></svg>
<div class="t" style="left:397px;top:1024.18px;font-size:11.6px;transform-origin:0 0;transform:scaleX(0.9784);color:#fff;">Pictures</div>
<div class="a" style="left:522px;top:1048px;width:153px;height:2px;background:#76b9ed"></div>
<svg style="left:528px;top:1019px" width="24" height="24"><path d="M6 1.5L22 3.5L18 21.5L2 19.5Z" fill="#bfe3ef" stroke="#7aa8b8" stroke-width="0.8"/><path d="M7 3L21 4.8L17.5 20L4 18.5Z" fill="#e6f5fa"/><path d="M2 19.5L18 21.5L17 23L1.5 21Z" fill="#6b8a96"/></svg>
<div class="t" style="left:557px;top:1024.18px;font-size:11.6px;transform-origin:0 0;transform:scaleX(1.0194);color:#fff;">VaiThietLap.htm - ...</div>
<div class="a" style="left:684px;top:1048px;width:152px;height:2px;background:#76b9ed"></div>
<svg style="left:691px;top:1019px" width="24" height="24"><defs><linearGradient id="sysg" x1="0" y1="0" x2="1" y2="1"><stop offset="0" stop-color="#5cc0f8"/><stop offset="1" stop-color="#1a98ec"/></linearGradient></defs><path d="M6.6 0.4L21.9 4.7V15.4L6.6 10.9Z" fill="url(#sysg)"/><path d="M6.6 0.4L21.9 4.7" stroke="#8a96a0" stroke-width="0.8"/><path d="M10.6 6.6L12.4 8.4L15.6 5.4" stroke="#e8f4ff" stroke-width="1.2" fill="none"/><ellipse cx="15" cy="15.6" rx="3" ry="1.3" fill="#c8ccd0"/><path d="M-0.3 16.8L5.9 14.7L16.9 19L11.1 21Z" fill="#d4d8dc"/></svg>
<div class="t" style="left:719px;top:1024.18px;font-size:11.6px;transform-origin:0 0;transform:scaleX(0.9360);color:#fff;">System</div>
<div class="a" style="left:841px;top:1010px;width:160px;height:40px;background:#333333"></div>
<div class="a" style="left:841px;top:1048px;width:160px;height:2px;background:#76b9ed"></div>
<svg style="left:851px;top:1019px" width="25" height="23"><defs><linearGradient id="spg" x1="0" y1="0" x2="1" y2="0.3"><stop offset="0" stop-color="#0010c8"/><stop offset="0.45" stop-color="#0a28e0"/><stop offset="1" stop-color="#c8dcff"/></linearGradient></defs><path d="M1 3.8L5.5 2.8V16.8L1 15.8Z" fill="#c4c8cc"/><rect x="1.3" y="5.5" width="2" height="1" fill="#50c020"/><path d="M6 0L23 2.2V16.6L6 14.2Z" fill="#e4dcc4"/><path d="M7 1.4L22 3.3V15.5L7 13.2Z" fill="url(#spg)"/><path d="M10.8 9.2L13.3 11.8L18.5 4.5" stroke="#f0f0f0" stroke-width="1.5" fill="none"/><ellipse cx="14.5" cy="18.3" rx="5.3" ry="2.2" fill="#d8d8d8"/></svg>
<div class="t" style="left:880px;top:1024.18px;font-size:11.6px;transform-origin:0 0;transform:scaleX(0.9771);color:#fff;">System Properties</div>
<svg style="left:1500px;top:1025px" width="14" height="9"><path d="M1 8L7 1.5L13 8" stroke="#fff" stroke-width="1.2" fill="none"/></svg>
<svg style="left:1522px;top:1022px" width="17" height="16"><g transform="translate(8.5 8)"><rect x="-1.3" y="-7.8" width="2.6" height="3.4" fill="#3888b0" transform="rotate(30)"/><rect x="-1.3" y="-7.8" width="2.6" height="3.4" fill="#3888b0" transform="rotate(60)"/><rect x="-1.3" y="-7.8" width="2.6" height="3.4" fill="#3888b0" transform="rotate(90)"/><rect x="-1.3" y="-7.8" width="2.6" height="3.4" fill="#3888b0" transform="rotate(120)"/><rect x="-1.3" y="-7.8" width="2.6" height="3.4" fill="#3888b0" transform="rotate(150)"/><rect x="-1.3" y="-7.8" width="2.6" height="3.4" fill="#3888b0" transform="rotate(180)"/><rect x="-1.3" y="-7.8" width="2.6" height="3.4" fill="#3888b0" transform="rotate(210)"/><rect x="-1.3" y="-7.8" width="2.6" height="3.4" fill="#3888b0" transform="rotate(240)"/><rect x="-1.3" y="-7.8" width="2.6" height="3.4" fill="#3888b0" transform="rotate(270)"/><rect x="-1.3" y="-7.8" width="2.6" height="3.4" fill="#3888b0" transform="rotate(300)"/><rect x="-1.3" y="-7.8" width="2.6" height="3.4" fill="#3888b0" transform="rotate(330)"/><path d="M-4.6 -2.5A5.3 5.3 0 1 0 -1.5 -5.1" fill="none" stroke="#3888b0" stroke-width="2.6"/><path d="M-2.8 -7.5L1 -5L-2.6 -2.6Z" fill="#3888b0"/><path d="M-2.6 1.4H1.2L2.4 -1.6" stroke="#e0a028" stroke-width="1.3" fill="none"/></g></svg>
<svg style="left:1546px;top:1023px" width="18" height="15"><rect x="0.5" y="1.5" width="4.5" height="5" fill="none" stroke="#fff" stroke-width="1"/><path d="M1.6 3.6L2.8 4.8L4 3" stroke="#fff" stroke-width="0.8" fill="none"/><rect x="4.5" y="1.5" width="12.5" height="10" fill="none" stroke="#fff" stroke-width="1.1"/><path d="M2.8 6.5V14.5M6.5 13.5H14M10.2 11.5V13.5" stroke="#fff" stroke-width="1.1" fill="none"/></svg>
<svg style="left:1571px;top:1022px" width="17" height="17"><path d="M7 0.8L13 2.6V8C13 11.5 10.5 14 7 15.5C3.5 14 1 11.5 1 8V2.6Z" fill="#fff"/><path d="M7 0.8V15.5M1 7.5H13" stroke="#101010" stroke-width="1.3"/><circle cx="12" cy="11.8" r="4.6" fill="#1a9a42" stroke="#101010" stroke-width="0.9"/><path d="M9.8 11.8L11.4 13.3L14.2 10.4" stroke="#fff" stroke-width="1.2" fill="none"/></svg>
<svg style="left:1595px;top:1022px" width="16" height="17"><defs><linearGradient id="vg" x1="0" y1="0" x2="1" y2="1"><stop offset="0" stop-color="#f8c8c8"/><stop offset="0.5" stop-color="#f4f0f0"/><stop offset="1" stop-color="#e8a8a8"/></linearGradient></defs><rect x="0.5" y="0.5" width="15" height="16" fill="url(#vg)" stroke="#d89090" stroke-width="1"/><path d="M3.2 4L7.8 14L12.6 3.5" stroke="#c82028" stroke-width="2.2" fill="none"/></svg>
<svg style="left:1619px;top:1023px" width="17" height="14"><path d="M1 4.5H4L8 1V13L4 9.5H1Z" fill="none" stroke="#fff" stroke-width="1.1"/><path d="M10.3 5.2Q11.5 7 10.3 8.8" stroke="#fff" stroke-width="1.1" fill="none"/><path d="M12.3 3.2Q14.6 7 12.3 10.8" stroke="#bbb" stroke-width="1" fill="none"/><path d="M14.3 1.2Q17.6 7 14.3 12.8" stroke="#888" stroke-width="1" fill="none"/></svg>
<div class="t" style="left:1645.5px;top:1024.18px;font-size:11.6px;transform-origin:0 0;transform:scaleX(0.8752);color:#fff;">ENG</div>
<div class="a" style="left:1675px;top:1010px;width:1px;height:40px;background:#5a5a5a"></div>
</body></html>
